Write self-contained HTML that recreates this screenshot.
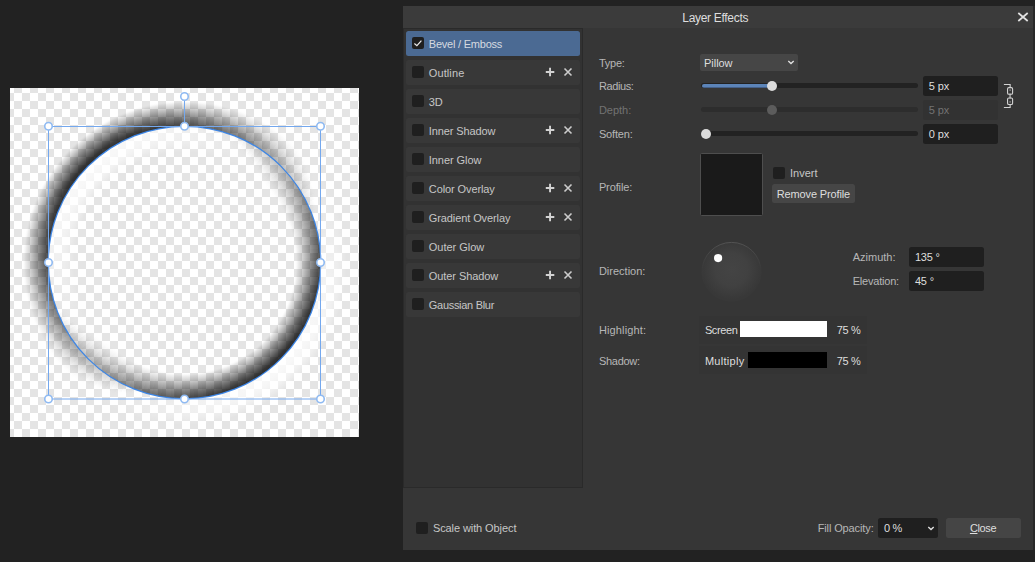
<!DOCTYPE html>
<html lang="en"><head><meta charset="utf-8"><title>Layer Effects</title>
<style>
html,body{margin:0;padding:0;overflow:hidden}
body{width:1035px;height:562px;background:#222222;position:relative;overflow:hidden;font-family:"Liberation Sans",sans-serif}
.b{position:absolute;display:block}
.t{position:absolute;white-space:nowrap;line-height:16px}
u{text-decoration-thickness:1px;text-underline-offset:1px}
</style></head><body>
<svg class="b" style="left:0;top:0" width="403" height="562" viewBox="0 0 403 562">
<defs>
<pattern id="chk" x="6" y="5" width="16" height="16" patternUnits="userSpaceOnUse"><rect width="16" height="16" fill="#ffffff"/><rect x="8" y="0" width="8" height="8" fill="#e4e4e4"/><rect x="0" y="8" width="8" height="8" fill="#e4e4e4"/></pattern>
<clipPath id="cv"><rect x="10" y="88" width="349" height="349"/></clipPath>
<radialGradient id="w0" gradientUnits="userSpaceOnUse" cx="184.5" cy="262.5" r="162.25"><stop offset=".6795" stop-color="#fff" stop-opacity="0"/><stop offset=".6995" stop-opacity=".063"/><stop offset=".7196" stop-opacity=".148"/><stop offset=".7396" stop-opacity=".244"/><stop offset=".7596" stop-opacity=".345"/><stop offset=".7797" stop-opacity=".444"/><stop offset=".7997" stop-opacity=".537"/><stop offset=".8197" stop-opacity=".622"/><stop offset=".8398" stop-opacity=".696"/><stop offset=".8398" stop-color="#fff" stop-opacity=".379"/><stop offset=".8598" stop-color="#fff" stop-opacity=".411"/><stop offset=".8798" stop-color="#fff" stop-opacity=".431"/><stop offset=".8998" stop-color="#fff" stop-opacity=".432"/><stop offset=".9199" stop-color="#fff" stop-opacity=".406"/><stop offset=".9399" stop-color="#fff" stop-opacity=".347"/><stop offset=".9599" stop-color="#fff" stop-opacity=".252"/><stop offset=".9800" stop-color="#fff" stop-opacity=".128"/><stop offset="1.0000" stop-color="#fff" stop-opacity="0"/></radialGradient><radialGradient id="w1" gradientUnits="userSpaceOnUse" cx="184.5" cy="262.5" r="162.25"><stop offset=".6795" stop-color="#fff" stop-opacity="0"/><stop offset=".6995" stop-opacity=".065"/><stop offset=".7196" stop-opacity=".152"/><stop offset=".7396" stop-opacity=".251"/><stop offset=".7596" stop-opacity=".354"/><stop offset=".7797" stop-opacity=".455"/><stop offset=".7997" stop-opacity=".549"/><stop offset=".8197" stop-opacity=".635"/><stop offset=".8398" stop-opacity=".711"/><stop offset=".8398" stop-color="#fff" stop-opacity=".413"/><stop offset=".8598" stop-color="#fff" stop-opacity=".442"/><stop offset=".8798" stop-color="#fff" stop-opacity=".459"/><stop offset=".8998" stop-color="#fff" stop-opacity=".456"/><stop offset=".9199" stop-color="#fff" stop-opacity=".426"/><stop offset=".9399" stop-color="#fff" stop-opacity=".362"/><stop offset=".9599" stop-color="#fff" stop-opacity=".262"/><stop offset=".9800" stop-color="#fff" stop-opacity=".132"/><stop offset="1.0000" stop-color="#fff" stop-opacity="0"/></radialGradient><radialGradient id="w2" gradientUnits="userSpaceOnUse" cx="184.5" cy="262.5" r="162.25"><stop offset=".6795" stop-color="#fff" stop-opacity="0"/><stop offset=".6995" stop-opacity=".067"/><stop offset=".7196" stop-opacity=".156"/><stop offset=".7396" stop-opacity=".257"/><stop offset=".7596" stop-opacity=".362"/><stop offset=".7797" stop-opacity=".465"/><stop offset=".7997" stop-opacity=".561"/><stop offset=".8197" stop-opacity=".648"/><stop offset=".8398" stop-opacity=".724"/><stop offset=".8398" stop-color="#fff" stop-opacity=".444"/><stop offset=".8598" stop-color="#fff" stop-opacity=".471"/><stop offset=".8798" stop-color="#fff" stop-opacity=".485"/><stop offset=".8998" stop-color="#fff" stop-opacity=".479"/><stop offset=".9199" stop-color="#fff" stop-opacity=".445"/><stop offset=".9399" stop-color="#fff" stop-opacity=".377"/><stop offset=".9599" stop-color="#fff" stop-opacity=".271"/><stop offset=".9800" stop-color="#fff" stop-opacity=".136"/><stop offset="1.0000" stop-color="#fff" stop-opacity="0"/></radialGradient><radialGradient id="w3" gradientUnits="userSpaceOnUse" cx="184.5" cy="262.5" r="162.25"><stop offset=".6795" stop-color="#fff" stop-opacity="0"/><stop offset=".6995" stop-opacity=".068"/><stop offset=".7196" stop-opacity=".16"/><stop offset=".7396" stop-opacity=".263"/><stop offset=".7596" stop-opacity=".37"/><stop offset=".7797" stop-opacity=".474"/><stop offset=".7997" stop-opacity=".572"/><stop offset=".8197" stop-opacity=".66"/><stop offset=".8398" stop-opacity=".737"/><stop offset=".8398" stop-color="#fff" stop-opacity=".475"/><stop offset=".8598" stop-color="#fff" stop-opacity=".5"/><stop offset=".8798" stop-color="#fff" stop-opacity=".511"/><stop offset=".8998" stop-color="#fff" stop-opacity=".502"/><stop offset=".9199" stop-color="#fff" stop-opacity=".464"/><stop offset=".9399" stop-color="#fff" stop-opacity=".391"/><stop offset=".9599" stop-color="#fff" stop-opacity=".281"/><stop offset=".9800" stop-color="#fff" stop-opacity=".141"/><stop offset="1.0000" stop-color="#fff" stop-opacity="0"/></radialGradient><radialGradient id="w4" gradientUnits="userSpaceOnUse" cx="184.5" cy="262.5" r="162.25"><stop offset=".6795" stop-color="#fff" stop-opacity="0"/><stop offset=".6995" stop-opacity=".07"/><stop offset=".7196" stop-opacity=".163"/><stop offset=".7396" stop-opacity=".268"/><stop offset=".7596" stop-opacity=".377"/><stop offset=".7797" stop-opacity=".484"/><stop offset=".7997" stop-opacity=".582"/><stop offset=".8197" stop-opacity=".671"/><stop offset=".8398" stop-opacity=".75"/><stop offset=".8398" stop-color="#fff" stop-opacity=".504"/><stop offset=".8598" stop-color="#fff" stop-opacity=".527"/><stop offset=".8798" stop-color="#fff" stop-opacity=".536"/><stop offset=".8998" stop-color="#fff" stop-opacity=".523"/><stop offset=".9199" stop-color="#fff" stop-opacity=".482"/><stop offset=".9399" stop-color="#fff" stop-opacity=".404"/><stop offset=".9599" stop-color="#fff" stop-opacity=".289"/><stop offset=".9800" stop-color="#fff" stop-opacity=".145"/><stop offset="1.0000" stop-color="#fff" stop-opacity="0"/></radialGradient><radialGradient id="w5" gradientUnits="userSpaceOnUse" cx="184.5" cy="262.5" r="162.25"><stop offset=".6795" stop-color="#fff" stop-opacity="0"/><stop offset=".6995" stop-opacity=".072"/><stop offset=".7196" stop-opacity=".167"/><stop offset=".7396" stop-opacity=".274"/><stop offset=".7596" stop-opacity=".385"/><stop offset=".7797" stop-opacity=".492"/><stop offset=".7997" stop-opacity=".592"/><stop offset=".8197" stop-opacity=".683"/><stop offset=".8398" stop-opacity=".762"/><stop offset=".8398" stop-color="#fff" stop-opacity=".532"/><stop offset=".8598" stop-color="#fff" stop-opacity=".553"/><stop offset=".8798" stop-color="#fff" stop-opacity=".559"/><stop offset=".8998" stop-color="#fff" stop-opacity=".544"/><stop offset=".9199" stop-color="#fff" stop-opacity=".498"/><stop offset=".9399" stop-color="#fff" stop-opacity=".417"/><stop offset=".9599" stop-color="#fff" stop-opacity=".298"/><stop offset=".9800" stop-color="#fff" stop-opacity=".148"/><stop offset="1.0000" stop-color="#fff" stop-opacity="0"/></radialGradient><radialGradient id="w6" gradientUnits="userSpaceOnUse" cx="184.5" cy="262.5" r="162.25"><stop offset=".6795" stop-color="#fff" stop-opacity="0"/><stop offset=".6995" stop-opacity=".073"/><stop offset=".7196" stop-opacity=".17"/><stop offset=".7396" stop-opacity=".279"/><stop offset=".7596" stop-opacity=".391"/><stop offset=".7797" stop-opacity=".501"/><stop offset=".7997" stop-opacity=".602"/><stop offset=".8197" stop-opacity=".693"/><stop offset=".8398" stop-opacity=".773"/><stop offset=".8398" stop-color="#fff" stop-opacity=".559"/><stop offset=".8598" stop-color="#fff" stop-opacity=".578"/><stop offset=".8798" stop-color="#fff" stop-opacity=".582"/><stop offset=".8998" stop-color="#fff" stop-opacity=".563"/><stop offset=".9199" stop-color="#fff" stop-opacity=".515"/><stop offset=".9399" stop-color="#fff" stop-opacity=".429"/><stop offset=".9599" stop-color="#fff" stop-opacity=".305"/><stop offset=".9800" stop-color="#fff" stop-opacity=".152"/><stop offset="1.0000" stop-color="#fff" stop-opacity="0"/></radialGradient><radialGradient id="w7" gradientUnits="userSpaceOnUse" cx="184.5" cy="262.5" r="162.25"><stop offset=".6795" stop-color="#fff" stop-opacity="0"/><stop offset=".6995" stop-opacity=".075"/><stop offset=".7196" stop-opacity=".174"/><stop offset=".7396" stop-opacity=".284"/><stop offset=".7596" stop-opacity=".398"/><stop offset=".7797" stop-opacity=".509"/><stop offset=".7997" stop-opacity=".611"/><stop offset=".8197" stop-opacity=".703"/><stop offset=".8398" stop-opacity=".784"/><stop offset=".8398" stop-color="#fff" stop-opacity=".584"/><stop offset=".8598" stop-color="#fff" stop-opacity=".601"/><stop offset=".8798" stop-color="#fff" stop-opacity=".603"/><stop offset=".8998" stop-color="#fff" stop-opacity=".582"/><stop offset=".9199" stop-color="#fff" stop-opacity=".53"/><stop offset=".9399" stop-color="#fff" stop-opacity=".44"/><stop offset=".9599" stop-color="#fff" stop-opacity=".313"/><stop offset=".9800" stop-color="#fff" stop-opacity=".156"/><stop offset="1.0000" stop-color="#fff" stop-opacity="0"/></radialGradient><radialGradient id="w8" gradientUnits="userSpaceOnUse" cx="184.5" cy="262.5" r="162.25"><stop offset=".6795" stop-color="#fff" stop-opacity="0"/><stop offset=".6995" stop-opacity=".076"/><stop offset=".7196" stop-opacity=".177"/><stop offset=".7396" stop-opacity=".289"/><stop offset=".7596" stop-opacity=".404"/><stop offset=".7797" stop-opacity=".516"/><stop offset=".7997" stop-opacity=".619"/><stop offset=".8197" stop-opacity=".712"/><stop offset=".8398" stop-opacity=".794"/><stop offset=".8398" stop-color="#fff" stop-opacity=".608"/><stop offset=".8598" stop-color="#fff" stop-opacity=".623"/><stop offset=".8798" stop-color="#fff" stop-opacity=".623"/><stop offset=".8998" stop-color="#fff" stop-opacity=".599"/><stop offset=".9199" stop-color="#fff" stop-opacity=".544"/><stop offset=".9399" stop-color="#fff" stop-opacity=".451"/><stop offset=".9599" stop-color="#fff" stop-opacity=".32"/><stop offset=".9800" stop-color="#fff" stop-opacity=".159"/><stop offset="1.0000" stop-color="#fff" stop-opacity="0"/></radialGradient><radialGradient id="w9" gradientUnits="userSpaceOnUse" cx="184.5" cy="262.5" r="162.25"><stop offset=".6795" stop-color="#fff" stop-opacity="0"/><stop offset=".6995" stop-opacity=".077"/><stop offset=".7196" stop-opacity=".179"/><stop offset=".7396" stop-opacity=".293"/><stop offset=".7596" stop-opacity=".41"/><stop offset=".7797" stop-opacity=".523"/><stop offset=".7997" stop-opacity=".627"/><stop offset=".8197" stop-opacity=".721"/><stop offset=".8398" stop-opacity=".8"/><stop offset=".8398" stop-color="#fff" stop-opacity=".63"/><stop offset=".8598" stop-color="#fff" stop-opacity=".644"/><stop offset=".8798" stop-color="#fff" stop-opacity=".641"/><stop offset=".8998" stop-color="#fff" stop-opacity=".615"/><stop offset=".9199" stop-color="#fff" stop-opacity=".557"/><stop offset=".9399" stop-color="#fff" stop-opacity=".461"/><stop offset=".9599" stop-color="#fff" stop-opacity=".327"/><stop offset=".9800" stop-color="#fff" stop-opacity=".162"/><stop offset="1.0000" stop-color="#fff" stop-opacity="0"/></radialGradient><radialGradient id="w10" gradientUnits="userSpaceOnUse" cx="184.5" cy="262.5" r="162.25"><stop offset=".6795" stop-color="#fff" stop-opacity="0"/><stop offset=".6995" stop-opacity=".079"/><stop offset=".7196" stop-opacity=".182"/><stop offset=".7396" stop-opacity=".297"/><stop offset=".7596" stop-opacity=".415"/><stop offset=".7797" stop-opacity=".529"/><stop offset=".7997" stop-opacity=".635"/><stop offset=".8197" stop-opacity=".729"/><stop offset=".8398" stop-opacity=".8"/><stop offset=".8398" stop-color="#fff" stop-opacity=".65"/><stop offset=".8598" stop-color="#fff" stop-opacity=".663"/><stop offset=".8798" stop-color="#fff" stop-opacity=".659"/><stop offset=".8998" stop-color="#fff" stop-opacity=".63"/><stop offset=".9199" stop-color="#fff" stop-opacity=".57"/><stop offset=".9399" stop-color="#fff" stop-opacity=".471"/><stop offset=".9599" stop-color="#fff" stop-opacity=".333"/><stop offset=".9800" stop-color="#fff" stop-opacity=".165"/><stop offset="1.0000" stop-color="#fff" stop-opacity="0"/></radialGradient><radialGradient id="w11" gradientUnits="userSpaceOnUse" cx="184.5" cy="262.5" r="162.25"><stop offset=".6795" stop-color="#fff" stop-opacity="0"/><stop offset=".6995" stop-opacity=".08"/><stop offset=".7196" stop-opacity=".184"/><stop offset=".7396" stop-opacity=".301"/><stop offset=".7596" stop-opacity=".42"/><stop offset=".7797" stop-opacity=".535"/><stop offset=".7997" stop-opacity=".642"/><stop offset=".8197" stop-opacity=".737"/><stop offset=".8398" stop-opacity=".8"/><stop offset=".8398" stop-color="#fff" stop-opacity=".669"/><stop offset=".8598" stop-color="#fff" stop-opacity=".68"/><stop offset=".8798" stop-color="#fff" stop-opacity=".675"/><stop offset=".8998" stop-color="#fff" stop-opacity=".644"/><stop offset=".9199" stop-color="#fff" stop-opacity=".581"/><stop offset=".9399" stop-color="#fff" stop-opacity=".479"/><stop offset=".9599" stop-color="#fff" stop-opacity=".338"/><stop offset=".9800" stop-color="#fff" stop-opacity=".167"/><stop offset="1.0000" stop-color="#fff" stop-opacity="0"/></radialGradient><radialGradient id="w12" gradientUnits="userSpaceOnUse" cx="184.5" cy="262.5" r="162.25"><stop offset=".6795" stop-color="#fff" stop-opacity="0"/><stop offset=".6995" stop-opacity=".081"/><stop offset=".7196" stop-opacity=".187"/><stop offset=".7396" stop-opacity=".304"/><stop offset=".7596" stop-opacity=".425"/><stop offset=".7797" stop-opacity=".541"/><stop offset=".7997" stop-opacity=".648"/><stop offset=".8197" stop-opacity=".744"/><stop offset=".8398" stop-opacity=".8"/><stop offset=".8398" stop-color="#fff" stop-opacity=".687"/><stop offset=".8598" stop-color="#fff" stop-opacity=".697"/><stop offset=".8798" stop-color="#fff" stop-opacity=".689"/><stop offset=".8998" stop-color="#fff" stop-opacity=".657"/><stop offset=".9199" stop-color="#fff" stop-opacity=".592"/><stop offset=".9399" stop-color="#fff" stop-opacity=".487"/><stop offset=".9599" stop-color="#fff" stop-opacity=".343"/><stop offset=".9800" stop-color="#fff" stop-opacity=".17"/><stop offset="1.0000" stop-color="#fff" stop-opacity="0"/></radialGradient><radialGradient id="w13" gradientUnits="userSpaceOnUse" cx="184.5" cy="262.5" r="162.25"><stop offset=".6795" stop-color="#fff" stop-opacity="0"/><stop offset=".6995" stop-opacity=".082"/><stop offset=".7196" stop-opacity=".189"/><stop offset=".7396" stop-opacity=".307"/><stop offset=".7596" stop-opacity=".429"/><stop offset=".7797" stop-opacity=".546"/><stop offset=".7997" stop-opacity=".654"/><stop offset=".8197" stop-opacity=".75"/><stop offset=".8398" stop-opacity=".8"/><stop offset=".8398" stop-color="#fff" stop-opacity=".703"/><stop offset=".8598" stop-color="#fff" stop-opacity=".711"/><stop offset=".8798" stop-color="#fff" stop-opacity=".703"/><stop offset=".8998" stop-color="#fff" stop-opacity=".669"/><stop offset=".9199" stop-color="#fff" stop-opacity=".601"/><stop offset=".9399" stop-color="#fff" stop-opacity=".495"/><stop offset=".9599" stop-color="#fff" stop-opacity=".348"/><stop offset=".9800" stop-color="#fff" stop-opacity=".172"/><stop offset="1.0000" stop-color="#fff" stop-opacity="0"/></radialGradient><radialGradient id="w14" gradientUnits="userSpaceOnUse" cx="184.5" cy="262.5" r="162.25"><stop offset=".6795" stop-color="#fff" stop-opacity="0"/><stop offset=".6995" stop-opacity=".083"/><stop offset=".7196" stop-opacity=".19"/><stop offset=".7396" stop-opacity=".31"/><stop offset=".7596" stop-opacity=".432"/><stop offset=".7797" stop-opacity=".55"/><stop offset=".7997" stop-opacity=".659"/><stop offset=".8197" stop-opacity=".756"/><stop offset=".8398" stop-opacity=".8"/><stop offset=".8398" stop-color="#fff" stop-opacity=".717"/><stop offset=".8598" stop-color="#fff" stop-opacity=".725"/><stop offset=".8798" stop-color="#fff" stop-opacity=".715"/><stop offset=".8998" stop-color="#fff" stop-opacity=".679"/><stop offset=".9199" stop-color="#fff" stop-opacity=".61"/><stop offset=".9399" stop-color="#fff" stop-opacity=".501"/><stop offset=".9599" stop-color="#fff" stop-opacity=".352"/><stop offset=".9800" stop-color="#fff" stop-opacity=".174"/><stop offset="1.0000" stop-color="#fff" stop-opacity="0"/></radialGradient><radialGradient id="w15" gradientUnits="userSpaceOnUse" cx="184.5" cy="262.5" r="162.25"><stop offset=".6795" stop-color="#fff" stop-opacity="0"/><stop offset=".6995" stop-opacity=".083"/><stop offset=".7196" stop-opacity=".192"/><stop offset=".7396" stop-opacity=".312"/><stop offset=".7596" stop-opacity=".436"/><stop offset=".7797" stop-opacity=".554"/><stop offset=".7997" stop-opacity=".663"/><stop offset=".8197" stop-opacity=".761"/><stop offset=".8398" stop-opacity=".8"/><stop offset=".8398" stop-color="#fff" stop-opacity=".73"/><stop offset=".8598" stop-color="#fff" stop-opacity=".736"/><stop offset=".8798" stop-color="#fff" stop-opacity=".725"/><stop offset=".8998" stop-color="#fff" stop-opacity=".688"/><stop offset=".9199" stop-color="#fff" stop-opacity=".618"/><stop offset=".9399" stop-color="#fff" stop-opacity=".507"/><stop offset=".9599" stop-color="#fff" stop-opacity=".356"/><stop offset=".9800" stop-color="#fff" stop-opacity=".175"/><stop offset="1.0000" stop-color="#fff" stop-opacity="0"/></radialGradient><radialGradient id="w16" gradientUnits="userSpaceOnUse" cx="184.5" cy="262.5" r="162.25"><stop offset=".6795" stop-color="#fff" stop-opacity="0"/><stop offset=".6995" stop-opacity=".084"/><stop offset=".7196" stop-opacity=".193"/><stop offset=".7396" stop-opacity=".315"/><stop offset=".7596" stop-opacity=".438"/><stop offset=".7797" stop-opacity=".558"/><stop offset=".7997" stop-opacity=".667"/><stop offset=".8197" stop-opacity=".765"/><stop offset=".8398" stop-opacity=".8"/><stop offset=".8398" stop-color="#fff" stop-opacity=".741"/><stop offset=".8598" stop-color="#fff" stop-opacity=".747"/><stop offset=".8798" stop-color="#fff" stop-opacity=".734"/><stop offset=".8998" stop-color="#fff" stop-opacity=".696"/><stop offset=".9199" stop-color="#fff" stop-opacity=".624"/><stop offset=".9399" stop-color="#fff" stop-opacity=".512"/><stop offset=".9599" stop-color="#fff" stop-opacity=".359"/><stop offset=".9800" stop-color="#fff" stop-opacity=".177"/><stop offset="1.0000" stop-color="#fff" stop-opacity="0"/></radialGradient><radialGradient id="w17" gradientUnits="userSpaceOnUse" cx="184.5" cy="262.5" r="162.25"><stop offset=".6795" stop-color="#fff" stop-opacity="0"/><stop offset=".6995" stop-opacity=".084"/><stop offset=".7196" stop-opacity=".195"/><stop offset=".7396" stop-opacity=".316"/><stop offset=".7596" stop-opacity=".441"/><stop offset=".7797" stop-opacity=".56"/><stop offset=".7997" stop-opacity=".671"/><stop offset=".8197" stop-opacity=".769"/><stop offset=".8398" stop-opacity=".8"/><stop offset=".8398" stop-color="#fff" stop-opacity=".75"/><stop offset=".8598" stop-color="#fff" stop-opacity=".755"/><stop offset=".8798" stop-color="#fff" stop-opacity=".742"/><stop offset=".8998" stop-color="#fff" stop-opacity=".703"/><stop offset=".9199" stop-color="#fff" stop-opacity=".63"/><stop offset=".9399" stop-color="#fff" stop-opacity=".516"/><stop offset=".9599" stop-color="#fff" stop-opacity=".362"/><stop offset=".9800" stop-color="#fff" stop-opacity=".178"/><stop offset="1.0000" stop-color="#fff" stop-opacity="0"/></radialGradient><radialGradient id="w18" gradientUnits="userSpaceOnUse" cx="184.5" cy="262.5" r="162.25"><stop offset=".6795" stop-color="#fff" stop-opacity="0"/><stop offset=".6995" stop-opacity=".085"/><stop offset=".7196" stop-opacity=".196"/><stop offset=".7396" stop-opacity=".318"/><stop offset=".7596" stop-opacity=".443"/><stop offset=".7797" stop-opacity=".563"/><stop offset=".7997" stop-opacity=".673"/><stop offset=".8197" stop-opacity=".772"/><stop offset=".8398" stop-opacity=".8"/><stop offset=".8398" stop-color="#fff" stop-opacity=".758"/><stop offset=".8598" stop-color="#fff" stop-opacity=".762"/><stop offset=".8798" stop-color="#fff" stop-opacity=".749"/><stop offset=".8998" stop-color="#fff" stop-opacity=".709"/><stop offset=".9199" stop-color="#fff" stop-opacity=".634"/><stop offset=".9399" stop-color="#fff" stop-opacity=".52"/><stop offset=".9599" stop-color="#fff" stop-opacity=".364"/><stop offset=".9800" stop-color="#fff" stop-opacity=".179"/><stop offset="1.0000" stop-color="#fff" stop-opacity="0"/></radialGradient><radialGradient id="w19" gradientUnits="userSpaceOnUse" cx="184.5" cy="262.5" r="162.25"><stop offset=".6795" stop-color="#fff" stop-opacity="0"/><stop offset=".6995" stop-opacity=".085"/><stop offset=".7196" stop-opacity=".196"/><stop offset=".7396" stop-opacity=".319"/><stop offset=".7596" stop-opacity=".444"/><stop offset=".7797" stop-opacity=".565"/><stop offset=".7997" stop-opacity=".675"/><stop offset=".8197" stop-opacity=".774"/><stop offset=".8398" stop-opacity=".8"/><stop offset=".8398" stop-color="#fff" stop-opacity=".764"/><stop offset=".8598" stop-color="#fff" stop-opacity=".768"/><stop offset=".8798" stop-color="#fff" stop-opacity=".754"/><stop offset=".8998" stop-color="#fff" stop-opacity=".713"/><stop offset=".9199" stop-color="#fff" stop-opacity=".638"/><stop offset=".9399" stop-color="#fff" stop-opacity=".522"/><stop offset=".9599" stop-color="#fff" stop-opacity=".366"/><stop offset=".9800" stop-color="#fff" stop-opacity=".18"/><stop offset="1.0000" stop-color="#fff" stop-opacity="0"/></radialGradient><radialGradient id="w20" gradientUnits="userSpaceOnUse" cx="184.5" cy="262.5" r="162.25"><stop offset=".6795" stop-color="#fff" stop-opacity="0"/><stop offset=".6995" stop-opacity=".086"/><stop offset=".7196" stop-opacity=".197"/><stop offset=".7396" stop-opacity=".32"/><stop offset=".7596" stop-opacity=".445"/><stop offset=".7797" stop-opacity=".566"/><stop offset=".7997" stop-opacity=".677"/><stop offset=".8197" stop-opacity=".776"/><stop offset=".8398" stop-opacity=".8"/><stop offset=".8398" stop-color="#fff" stop-opacity=".768"/><stop offset=".8598" stop-color="#fff" stop-opacity=".772"/><stop offset=".8798" stop-color="#fff" stop-opacity=".757"/><stop offset=".8998" stop-color="#fff" stop-opacity=".716"/><stop offset=".9199" stop-color="#fff" stop-opacity=".641"/><stop offset=".9399" stop-color="#fff" stop-opacity=".524"/><stop offset=".9599" stop-color="#fff" stop-opacity=".368"/><stop offset=".9800" stop-color="#fff" stop-opacity=".181"/><stop offset="1.0000" stop-color="#fff" stop-opacity="0"/></radialGradient><radialGradient id="w21" gradientUnits="userSpaceOnUse" cx="184.5" cy="262.5" r="162.25"><stop offset=".6795" stop-color="#fff" stop-opacity="0"/><stop offset=".6995" stop-opacity=".086"/><stop offset=".7196" stop-opacity=".197"/><stop offset=".7396" stop-opacity=".32"/><stop offset=".7596" stop-opacity=".446"/><stop offset=".7797" stop-opacity=".567"/><stop offset=".7997" stop-opacity=".678"/><stop offset=".8197" stop-opacity=".777"/><stop offset=".8398" stop-opacity=".8"/><stop offset=".8398" stop-color="#fff" stop-opacity=".77"/><stop offset=".8598" stop-color="#fff" stop-opacity=".774"/><stop offset=".8798" stop-color="#fff" stop-opacity=".759"/><stop offset=".8998" stop-color="#fff" stop-opacity=".718"/><stop offset=".9199" stop-color="#fff" stop-opacity=".642"/><stop offset=".9399" stop-color="#fff" stop-opacity=".526"/><stop offset=".9599" stop-color="#fff" stop-opacity=".368"/><stop offset=".9800" stop-color="#fff" stop-opacity=".181"/><stop offset="1.0000" stop-color="#fff" stop-opacity="0"/></radialGradient><radialGradient id="w22" gradientUnits="userSpaceOnUse" cx="184.5" cy="262.5" r="162.25"><stop offset=".6795" stop-color="#fff" stop-opacity="0"/><stop offset=".6995" stop-opacity=".086"/><stop offset=".7196" stop-opacity=".197"/><stop offset=".7396" stop-opacity=".321"/><stop offset=".7596" stop-opacity=".446"/><stop offset=".7797" stop-opacity=".567"/><stop offset=".7997" stop-opacity=".678"/><stop offset=".8197" stop-opacity=".777"/><stop offset=".8398" stop-opacity=".8"/><stop offset=".8398" stop-color="#fff" stop-opacity=".771"/><stop offset=".8598" stop-color="#fff" stop-opacity=".775"/><stop offset=".8798" stop-color="#fff" stop-opacity=".76"/><stop offset=".8998" stop-color="#fff" stop-opacity=".719"/><stop offset=".9199" stop-color="#fff" stop-opacity=".643"/><stop offset=".9399" stop-color="#fff" stop-opacity=".526"/><stop offset=".9599" stop-color="#fff" stop-opacity=".369"/><stop offset=".9800" stop-color="#fff" stop-opacity=".181"/><stop offset="1.0000" stop-color="#fff" stop-opacity="0"/></radialGradient><radialGradient id="w23" gradientUnits="userSpaceOnUse" cx="184.5" cy="262.5" r="162.25"><stop offset=".6795" stop-color="#fff" stop-opacity="0"/><stop offset=".6995" stop-opacity=".086"/><stop offset=".7196" stop-opacity=".197"/><stop offset=".7396" stop-opacity=".32"/><stop offset=".7596" stop-opacity=".446"/><stop offset=".7797" stop-opacity=".567"/><stop offset=".7997" stop-opacity=".678"/><stop offset=".8197" stop-opacity=".777"/><stop offset=".8398" stop-opacity=".8"/><stop offset=".8398" stop-color="#fff" stop-opacity=".77"/><stop offset=".8598" stop-color="#fff" stop-opacity=".774"/><stop offset=".8798" stop-color="#fff" stop-opacity=".759"/><stop offset=".8998" stop-color="#fff" stop-opacity=".718"/><stop offset=".9199" stop-color="#fff" stop-opacity=".642"/><stop offset=".9399" stop-color="#fff" stop-opacity=".526"/><stop offset=".9599" stop-color="#fff" stop-opacity=".368"/><stop offset=".9800" stop-color="#fff" stop-opacity=".181"/><stop offset="1.0000" stop-color="#fff" stop-opacity="0"/></radialGradient><radialGradient id="w24" gradientUnits="userSpaceOnUse" cx="184.5" cy="262.5" r="162.25"><stop offset=".6795" stop-color="#fff" stop-opacity="0"/><stop offset=".6995" stop-opacity=".086"/><stop offset=".7196" stop-opacity=".197"/><stop offset=".7396" stop-opacity=".32"/><stop offset=".7596" stop-opacity=".445"/><stop offset=".7797" stop-opacity=".566"/><stop offset=".7997" stop-opacity=".677"/><stop offset=".8197" stop-opacity=".776"/><stop offset=".8398" stop-opacity=".8"/><stop offset=".8398" stop-color="#fff" stop-opacity=".768"/><stop offset=".8598" stop-color="#fff" stop-opacity=".772"/><stop offset=".8798" stop-color="#fff" stop-opacity=".757"/><stop offset=".8998" stop-color="#fff" stop-opacity=".716"/><stop offset=".9199" stop-color="#fff" stop-opacity=".641"/><stop offset=".9399" stop-color="#fff" stop-opacity=".524"/><stop offset=".9599" stop-color="#fff" stop-opacity=".368"/><stop offset=".9800" stop-color="#fff" stop-opacity=".181"/><stop offset="1.0000" stop-color="#fff" stop-opacity="0"/></radialGradient><radialGradient id="w25" gradientUnits="userSpaceOnUse" cx="184.5" cy="262.5" r="162.25"><stop offset=".6795" stop-color="#fff" stop-opacity="0"/><stop offset=".6995" stop-opacity=".085"/><stop offset=".7196" stop-opacity=".196"/><stop offset=".7396" stop-opacity=".319"/><stop offset=".7596" stop-opacity=".444"/><stop offset=".7797" stop-opacity=".565"/><stop offset=".7997" stop-opacity=".675"/><stop offset=".8197" stop-opacity=".774"/><stop offset=".8398" stop-opacity=".8"/><stop offset=".8398" stop-color="#fff" stop-opacity=".764"/><stop offset=".8598" stop-color="#fff" stop-opacity=".768"/><stop offset=".8798" stop-color="#fff" stop-opacity=".754"/><stop offset=".8998" stop-color="#fff" stop-opacity=".713"/><stop offset=".9199" stop-color="#fff" stop-opacity=".638"/><stop offset=".9399" stop-color="#fff" stop-opacity=".522"/><stop offset=".9599" stop-color="#fff" stop-opacity=".366"/><stop offset=".9800" stop-color="#fff" stop-opacity=".18"/><stop offset="1.0000" stop-color="#fff" stop-opacity="0"/></radialGradient><radialGradient id="w26" gradientUnits="userSpaceOnUse" cx="184.5" cy="262.5" r="162.25"><stop offset=".6795" stop-color="#fff" stop-opacity="0"/><stop offset=".6995" stop-opacity=".085"/><stop offset=".7196" stop-opacity=".196"/><stop offset=".7396" stop-opacity=".318"/><stop offset=".7596" stop-opacity=".443"/><stop offset=".7797" stop-opacity=".563"/><stop offset=".7997" stop-opacity=".673"/><stop offset=".8197" stop-opacity=".772"/><stop offset=".8398" stop-opacity=".8"/><stop offset=".8398" stop-color="#fff" stop-opacity=".758"/><stop offset=".8598" stop-color="#fff" stop-opacity=".762"/><stop offset=".8798" stop-color="#fff" stop-opacity=".749"/><stop offset=".8998" stop-color="#fff" stop-opacity=".709"/><stop offset=".9199" stop-color="#fff" stop-opacity=".634"/><stop offset=".9399" stop-color="#fff" stop-opacity=".52"/><stop offset=".9599" stop-color="#fff" stop-opacity=".364"/><stop offset=".9800" stop-color="#fff" stop-opacity=".179"/><stop offset="1.0000" stop-color="#fff" stop-opacity="0"/></radialGradient><radialGradient id="w27" gradientUnits="userSpaceOnUse" cx="184.5" cy="262.5" r="162.25"><stop offset=".6795" stop-color="#fff" stop-opacity="0"/><stop offset=".6995" stop-opacity=".084"/><stop offset=".7196" stop-opacity=".195"/><stop offset=".7396" stop-opacity=".316"/><stop offset=".7596" stop-opacity=".441"/><stop offset=".7797" stop-opacity=".56"/><stop offset=".7997" stop-opacity=".671"/><stop offset=".8197" stop-opacity=".769"/><stop offset=".8398" stop-opacity=".8"/><stop offset=".8398" stop-color="#fff" stop-opacity=".75"/><stop offset=".8598" stop-color="#fff" stop-opacity=".755"/><stop offset=".8798" stop-color="#fff" stop-opacity=".742"/><stop offset=".8998" stop-color="#fff" stop-opacity=".703"/><stop offset=".9199" stop-color="#fff" stop-opacity=".63"/><stop offset=".9399" stop-color="#fff" stop-opacity=".516"/><stop offset=".9599" stop-color="#fff" stop-opacity=".362"/><stop offset=".9800" stop-color="#fff" stop-opacity=".178"/><stop offset="1.0000" stop-color="#fff" stop-opacity="0"/></radialGradient><radialGradient id="w28" gradientUnits="userSpaceOnUse" cx="184.5" cy="262.5" r="162.25"><stop offset=".6795" stop-color="#fff" stop-opacity="0"/><stop offset=".6995" stop-opacity=".084"/><stop offset=".7196" stop-opacity=".193"/><stop offset=".7396" stop-opacity=".315"/><stop offset=".7596" stop-opacity=".438"/><stop offset=".7797" stop-opacity=".558"/><stop offset=".7997" stop-opacity=".667"/><stop offset=".8197" stop-opacity=".765"/><stop offset=".8398" stop-opacity=".8"/><stop offset=".8398" stop-color="#fff" stop-opacity=".741"/><stop offset=".8598" stop-color="#fff" stop-opacity=".747"/><stop offset=".8798" stop-color="#fff" stop-opacity=".734"/><stop offset=".8998" stop-color="#fff" stop-opacity=".696"/><stop offset=".9199" stop-color="#fff" stop-opacity=".624"/><stop offset=".9399" stop-color="#fff" stop-opacity=".512"/><stop offset=".9599" stop-color="#fff" stop-opacity=".359"/><stop offset=".9800" stop-color="#fff" stop-opacity=".177"/><stop offset="1.0000" stop-color="#fff" stop-opacity="0"/></radialGradient><radialGradient id="w29" gradientUnits="userSpaceOnUse" cx="184.5" cy="262.5" r="162.25"><stop offset=".6795" stop-color="#fff" stop-opacity="0"/><stop offset=".6995" stop-opacity=".083"/><stop offset=".7196" stop-opacity=".192"/><stop offset=".7396" stop-opacity=".312"/><stop offset=".7596" stop-opacity=".436"/><stop offset=".7797" stop-opacity=".554"/><stop offset=".7997" stop-opacity=".663"/><stop offset=".8197" stop-opacity=".761"/><stop offset=".8398" stop-opacity=".8"/><stop offset=".8398" stop-color="#fff" stop-opacity=".73"/><stop offset=".8598" stop-color="#fff" stop-opacity=".736"/><stop offset=".8798" stop-color="#fff" stop-opacity=".725"/><stop offset=".8998" stop-color="#fff" stop-opacity=".688"/><stop offset=".9199" stop-color="#fff" stop-opacity=".618"/><stop offset=".9399" stop-color="#fff" stop-opacity=".507"/><stop offset=".9599" stop-color="#fff" stop-opacity=".356"/><stop offset=".9800" stop-color="#fff" stop-opacity=".175"/><stop offset="1.0000" stop-color="#fff" stop-opacity="0"/></radialGradient><radialGradient id="w30" gradientUnits="userSpaceOnUse" cx="184.5" cy="262.5" r="162.25"><stop offset=".6795" stop-color="#fff" stop-opacity="0"/><stop offset=".6995" stop-opacity=".083"/><stop offset=".7196" stop-opacity=".19"/><stop offset=".7396" stop-opacity=".31"/><stop offset=".7596" stop-opacity=".432"/><stop offset=".7797" stop-opacity=".55"/><stop offset=".7997" stop-opacity=".659"/><stop offset=".8197" stop-opacity=".756"/><stop offset=".8398" stop-opacity=".8"/><stop offset=".8398" stop-color="#fff" stop-opacity=".717"/><stop offset=".8598" stop-color="#fff" stop-opacity=".725"/><stop offset=".8798" stop-color="#fff" stop-opacity=".715"/><stop offset=".8998" stop-color="#fff" stop-opacity=".679"/><stop offset=".9199" stop-color="#fff" stop-opacity=".61"/><stop offset=".9399" stop-color="#fff" stop-opacity=".501"/><stop offset=".9599" stop-color="#fff" stop-opacity=".352"/><stop offset=".9800" stop-color="#fff" stop-opacity=".174"/><stop offset="1.0000" stop-color="#fff" stop-opacity="0"/></radialGradient><radialGradient id="w31" gradientUnits="userSpaceOnUse" cx="184.5" cy="262.5" r="162.25"><stop offset=".6795" stop-color="#fff" stop-opacity="0"/><stop offset=".6995" stop-opacity=".082"/><stop offset=".7196" stop-opacity=".189"/><stop offset=".7396" stop-opacity=".307"/><stop offset=".7596" stop-opacity=".429"/><stop offset=".7797" stop-opacity=".546"/><stop offset=".7997" stop-opacity=".654"/><stop offset=".8197" stop-opacity=".75"/><stop offset=".8398" stop-opacity=".8"/><stop offset=".8398" stop-color="#fff" stop-opacity=".703"/><stop offset=".8598" stop-color="#fff" stop-opacity=".711"/><stop offset=".8798" stop-color="#fff" stop-opacity=".703"/><stop offset=".8998" stop-color="#fff" stop-opacity=".669"/><stop offset=".9199" stop-color="#fff" stop-opacity=".601"/><stop offset=".9399" stop-color="#fff" stop-opacity=".495"/><stop offset=".9599" stop-color="#fff" stop-opacity=".348"/><stop offset=".9800" stop-color="#fff" stop-opacity=".172"/><stop offset="1.0000" stop-color="#fff" stop-opacity="0"/></radialGradient><radialGradient id="w32" gradientUnits="userSpaceOnUse" cx="184.5" cy="262.5" r="162.25"><stop offset=".6795" stop-color="#fff" stop-opacity="0"/><stop offset=".6995" stop-opacity=".081"/><stop offset=".7196" stop-opacity=".187"/><stop offset=".7396" stop-opacity=".304"/><stop offset=".7596" stop-opacity=".425"/><stop offset=".7797" stop-opacity=".541"/><stop offset=".7997" stop-opacity=".648"/><stop offset=".8197" stop-opacity=".744"/><stop offset=".8398" stop-opacity=".8"/><stop offset=".8398" stop-color="#fff" stop-opacity=".687"/><stop offset=".8598" stop-color="#fff" stop-opacity=".697"/><stop offset=".8798" stop-color="#fff" stop-opacity=".689"/><stop offset=".8998" stop-color="#fff" stop-opacity=".657"/><stop offset=".9199" stop-color="#fff" stop-opacity=".592"/><stop offset=".9399" stop-color="#fff" stop-opacity=".487"/><stop offset=".9599" stop-color="#fff" stop-opacity=".343"/><stop offset=".9800" stop-color="#fff" stop-opacity=".17"/><stop offset="1.0000" stop-color="#fff" stop-opacity="0"/></radialGradient><radialGradient id="w33" gradientUnits="userSpaceOnUse" cx="184.5" cy="262.5" r="162.25"><stop offset=".6795" stop-color="#fff" stop-opacity="0"/><stop offset=".6995" stop-opacity=".08"/><stop offset=".7196" stop-opacity=".184"/><stop offset=".7396" stop-opacity=".301"/><stop offset=".7596" stop-opacity=".42"/><stop offset=".7797" stop-opacity=".535"/><stop offset=".7997" stop-opacity=".642"/><stop offset=".8197" stop-opacity=".737"/><stop offset=".8398" stop-opacity=".8"/><stop offset=".8398" stop-color="#fff" stop-opacity=".669"/><stop offset=".8598" stop-color="#fff" stop-opacity=".68"/><stop offset=".8798" stop-color="#fff" stop-opacity=".675"/><stop offset=".8998" stop-color="#fff" stop-opacity=".644"/><stop offset=".9199" stop-color="#fff" stop-opacity=".581"/><stop offset=".9399" stop-color="#fff" stop-opacity=".479"/><stop offset=".9599" stop-color="#fff" stop-opacity=".338"/><stop offset=".9800" stop-color="#fff" stop-opacity=".167"/><stop offset="1.0000" stop-color="#fff" stop-opacity="0"/></radialGradient><radialGradient id="w34" gradientUnits="userSpaceOnUse" cx="184.5" cy="262.5" r="162.25"><stop offset=".6795" stop-color="#fff" stop-opacity="0"/><stop offset=".6995" stop-opacity=".079"/><stop offset=".7196" stop-opacity=".182"/><stop offset=".7396" stop-opacity=".297"/><stop offset=".7596" stop-opacity=".415"/><stop offset=".7797" stop-opacity=".529"/><stop offset=".7997" stop-opacity=".635"/><stop offset=".8197" stop-opacity=".729"/><stop offset=".8398" stop-opacity=".8"/><stop offset=".8398" stop-color="#fff" stop-opacity=".65"/><stop offset=".8598" stop-color="#fff" stop-opacity=".663"/><stop offset=".8798" stop-color="#fff" stop-opacity=".659"/><stop offset=".8998" stop-color="#fff" stop-opacity=".63"/><stop offset=".9199" stop-color="#fff" stop-opacity=".57"/><stop offset=".9399" stop-color="#fff" stop-opacity=".471"/><stop offset=".9599" stop-color="#fff" stop-opacity=".333"/><stop offset=".9800" stop-color="#fff" stop-opacity=".165"/><stop offset="1.0000" stop-color="#fff" stop-opacity="0"/></radialGradient><radialGradient id="w35" gradientUnits="userSpaceOnUse" cx="184.5" cy="262.5" r="162.25"><stop offset=".6795" stop-color="#fff" stop-opacity="0"/><stop offset=".6995" stop-opacity=".077"/><stop offset=".7196" stop-opacity=".179"/><stop offset=".7396" stop-opacity=".293"/><stop offset=".7596" stop-opacity=".41"/><stop offset=".7797" stop-opacity=".523"/><stop offset=".7997" stop-opacity=".627"/><stop offset=".8197" stop-opacity=".721"/><stop offset=".8398" stop-opacity=".8"/><stop offset=".8398" stop-color="#fff" stop-opacity=".63"/><stop offset=".8598" stop-color="#fff" stop-opacity=".644"/><stop offset=".8798" stop-color="#fff" stop-opacity=".641"/><stop offset=".8998" stop-color="#fff" stop-opacity=".615"/><stop offset=".9199" stop-color="#fff" stop-opacity=".557"/><stop offset=".9399" stop-color="#fff" stop-opacity=".461"/><stop offset=".9599" stop-color="#fff" stop-opacity=".327"/><stop offset=".9800" stop-color="#fff" stop-opacity=".162"/><stop offset="1.0000" stop-color="#fff" stop-opacity="0"/></radialGradient><radialGradient id="w36" gradientUnits="userSpaceOnUse" cx="184.5" cy="262.5" r="162.25"><stop offset=".6795" stop-color="#fff" stop-opacity="0"/><stop offset=".6995" stop-opacity=".076"/><stop offset=".7196" stop-opacity=".177"/><stop offset=".7396" stop-opacity=".289"/><stop offset=".7596" stop-opacity=".404"/><stop offset=".7797" stop-opacity=".516"/><stop offset=".7997" stop-opacity=".619"/><stop offset=".8197" stop-opacity=".712"/><stop offset=".8398" stop-opacity=".794"/><stop offset=".8398" stop-color="#fff" stop-opacity=".608"/><stop offset=".8598" stop-color="#fff" stop-opacity=".623"/><stop offset=".8798" stop-color="#fff" stop-opacity=".623"/><stop offset=".8998" stop-color="#fff" stop-opacity=".599"/><stop offset=".9199" stop-color="#fff" stop-opacity=".544"/><stop offset=".9399" stop-color="#fff" stop-opacity=".451"/><stop offset=".9599" stop-color="#fff" stop-opacity=".32"/><stop offset=".9800" stop-color="#fff" stop-opacity=".159"/><stop offset="1.0000" stop-color="#fff" stop-opacity="0"/></radialGradient><radialGradient id="w37" gradientUnits="userSpaceOnUse" cx="184.5" cy="262.5" r="162.25"><stop offset=".6795" stop-color="#fff" stop-opacity="0"/><stop offset=".6995" stop-opacity=".075"/><stop offset=".7196" stop-opacity=".174"/><stop offset=".7396" stop-opacity=".284"/><stop offset=".7596" stop-opacity=".398"/><stop offset=".7797" stop-opacity=".509"/><stop offset=".7997" stop-opacity=".611"/><stop offset=".8197" stop-opacity=".703"/><stop offset=".8398" stop-opacity=".784"/><stop offset=".8398" stop-color="#fff" stop-opacity=".584"/><stop offset=".8598" stop-color="#fff" stop-opacity=".601"/><stop offset=".8798" stop-color="#fff" stop-opacity=".603"/><stop offset=".8998" stop-color="#fff" stop-opacity=".582"/><stop offset=".9199" stop-color="#fff" stop-opacity=".53"/><stop offset=".9399" stop-color="#fff" stop-opacity=".44"/><stop offset=".9599" stop-color="#fff" stop-opacity=".313"/><stop offset=".9800" stop-color="#fff" stop-opacity=".156"/><stop offset="1.0000" stop-color="#fff" stop-opacity="0"/></radialGradient><radialGradient id="w38" gradientUnits="userSpaceOnUse" cx="184.5" cy="262.5" r="162.25"><stop offset=".6795" stop-color="#fff" stop-opacity="0"/><stop offset=".6995" stop-opacity=".073"/><stop offset=".7196" stop-opacity=".17"/><stop offset=".7396" stop-opacity=".279"/><stop offset=".7596" stop-opacity=".391"/><stop offset=".7797" stop-opacity=".501"/><stop offset=".7997" stop-opacity=".602"/><stop offset=".8197" stop-opacity=".693"/><stop offset=".8398" stop-opacity=".773"/><stop offset=".8398" stop-color="#fff" stop-opacity=".559"/><stop offset=".8598" stop-color="#fff" stop-opacity=".578"/><stop offset=".8798" stop-color="#fff" stop-opacity=".582"/><stop offset=".8998" stop-color="#fff" stop-opacity=".563"/><stop offset=".9199" stop-color="#fff" stop-opacity=".515"/><stop offset=".9399" stop-color="#fff" stop-opacity=".429"/><stop offset=".9599" stop-color="#fff" stop-opacity=".305"/><stop offset=".9800" stop-color="#fff" stop-opacity=".152"/><stop offset="1.0000" stop-color="#fff" stop-opacity="0"/></radialGradient><radialGradient id="w39" gradientUnits="userSpaceOnUse" cx="184.5" cy="262.5" r="162.25"><stop offset=".6795" stop-color="#fff" stop-opacity="0"/><stop offset=".6995" stop-opacity=".072"/><stop offset=".7196" stop-opacity=".167"/><stop offset=".7396" stop-opacity=".274"/><stop offset=".7596" stop-opacity=".385"/><stop offset=".7797" stop-opacity=".492"/><stop offset=".7997" stop-opacity=".592"/><stop offset=".8197" stop-opacity=".683"/><stop offset=".8398" stop-opacity=".762"/><stop offset=".8398" stop-color="#fff" stop-opacity=".532"/><stop offset=".8598" stop-color="#fff" stop-opacity=".553"/><stop offset=".8798" stop-color="#fff" stop-opacity=".559"/><stop offset=".8998" stop-color="#fff" stop-opacity=".544"/><stop offset=".9199" stop-color="#fff" stop-opacity=".498"/><stop offset=".9399" stop-color="#fff" stop-opacity=".417"/><stop offset=".9599" stop-color="#fff" stop-opacity=".298"/><stop offset=".9800" stop-color="#fff" stop-opacity=".148"/><stop offset="1.0000" stop-color="#fff" stop-opacity="0"/></radialGradient><radialGradient id="w40" gradientUnits="userSpaceOnUse" cx="184.5" cy="262.5" r="162.25"><stop offset=".6795" stop-color="#fff" stop-opacity="0"/><stop offset=".6995" stop-opacity=".07"/><stop offset=".7196" stop-opacity=".163"/><stop offset=".7396" stop-opacity=".268"/><stop offset=".7596" stop-opacity=".377"/><stop offset=".7797" stop-opacity=".484"/><stop offset=".7997" stop-opacity=".582"/><stop offset=".8197" stop-opacity=".671"/><stop offset=".8398" stop-opacity=".75"/><stop offset=".8398" stop-color="#fff" stop-opacity=".504"/><stop offset=".8598" stop-color="#fff" stop-opacity=".527"/><stop offset=".8798" stop-color="#fff" stop-opacity=".536"/><stop offset=".8998" stop-color="#fff" stop-opacity=".523"/><stop offset=".9199" stop-color="#fff" stop-opacity=".482"/><stop offset=".9399" stop-color="#fff" stop-opacity=".404"/><stop offset=".9599" stop-color="#fff" stop-opacity=".289"/><stop offset=".9800" stop-color="#fff" stop-opacity=".145"/><stop offset="1.0000" stop-color="#fff" stop-opacity="0"/></radialGradient><radialGradient id="w41" gradientUnits="userSpaceOnUse" cx="184.5" cy="262.5" r="162.25"><stop offset=".6795" stop-color="#fff" stop-opacity="0"/><stop offset=".6995" stop-opacity=".068"/><stop offset=".7196" stop-opacity=".16"/><stop offset=".7396" stop-opacity=".263"/><stop offset=".7596" stop-opacity=".37"/><stop offset=".7797" stop-opacity=".474"/><stop offset=".7997" stop-opacity=".572"/><stop offset=".8197" stop-opacity=".66"/><stop offset=".8398" stop-opacity=".737"/><stop offset=".8398" stop-color="#fff" stop-opacity=".475"/><stop offset=".8598" stop-color="#fff" stop-opacity=".5"/><stop offset=".8798" stop-color="#fff" stop-opacity=".511"/><stop offset=".8998" stop-color="#fff" stop-opacity=".502"/><stop offset=".9199" stop-color="#fff" stop-opacity=".464"/><stop offset=".9399" stop-color="#fff" stop-opacity=".391"/><stop offset=".9599" stop-color="#fff" stop-opacity=".281"/><stop offset=".9800" stop-color="#fff" stop-opacity=".141"/><stop offset="1.0000" stop-color="#fff" stop-opacity="0"/></radialGradient><radialGradient id="w42" gradientUnits="userSpaceOnUse" cx="184.5" cy="262.5" r="162.25"><stop offset=".6795" stop-color="#fff" stop-opacity="0"/><stop offset=".6995" stop-opacity=".067"/><stop offset=".7196" stop-opacity=".156"/><stop offset=".7396" stop-opacity=".257"/><stop offset=".7596" stop-opacity=".362"/><stop offset=".7797" stop-opacity=".465"/><stop offset=".7997" stop-opacity=".561"/><stop offset=".8197" stop-opacity=".648"/><stop offset=".8398" stop-opacity=".724"/><stop offset=".8398" stop-color="#fff" stop-opacity=".444"/><stop offset=".8598" stop-color="#fff" stop-opacity=".471"/><stop offset=".8798" stop-color="#fff" stop-opacity=".485"/><stop offset=".8998" stop-color="#fff" stop-opacity=".479"/><stop offset=".9199" stop-color="#fff" stop-opacity=".445"/><stop offset=".9399" stop-color="#fff" stop-opacity=".377"/><stop offset=".9599" stop-color="#fff" stop-opacity=".271"/><stop offset=".9800" stop-color="#fff" stop-opacity=".136"/><stop offset="1.0000" stop-color="#fff" stop-opacity="0"/></radialGradient><radialGradient id="w43" gradientUnits="userSpaceOnUse" cx="184.5" cy="262.5" r="162.25"><stop offset=".6795" stop-color="#fff" stop-opacity="0"/><stop offset=".6995" stop-opacity=".065"/><stop offset=".7196" stop-opacity=".152"/><stop offset=".7396" stop-opacity=".251"/><stop offset=".7596" stop-opacity=".354"/><stop offset=".7797" stop-opacity=".455"/><stop offset=".7997" stop-opacity=".549"/><stop offset=".8197" stop-opacity=".635"/><stop offset=".8398" stop-opacity=".711"/><stop offset=".8398" stop-color="#fff" stop-opacity=".413"/><stop offset=".8598" stop-color="#fff" stop-opacity=".442"/><stop offset=".8798" stop-color="#fff" stop-opacity=".459"/><stop offset=".8998" stop-color="#fff" stop-opacity=".456"/><stop offset=".9199" stop-color="#fff" stop-opacity=".426"/><stop offset=".9399" stop-color="#fff" stop-opacity=".362"/><stop offset=".9599" stop-color="#fff" stop-opacity=".262"/><stop offset=".9800" stop-color="#fff" stop-opacity=".132"/><stop offset="1.0000" stop-color="#fff" stop-opacity="0"/></radialGradient><radialGradient id="w44" gradientUnits="userSpaceOnUse" cx="184.5" cy="262.5" r="162.25"><stop offset=".6795" stop-color="#fff" stop-opacity="0"/><stop offset=".6995" stop-opacity=".063"/><stop offset=".7196" stop-opacity=".148"/><stop offset=".7396" stop-opacity=".244"/><stop offset=".7596" stop-opacity=".345"/><stop offset=".7797" stop-opacity=".444"/><stop offset=".7997" stop-opacity=".537"/><stop offset=".8197" stop-opacity=".622"/><stop offset=".8398" stop-opacity=".696"/><stop offset=".8398" stop-color="#fff" stop-opacity=".379"/><stop offset=".8598" stop-color="#fff" stop-opacity=".411"/><stop offset=".8798" stop-color="#fff" stop-opacity=".431"/><stop offset=".8998" stop-color="#fff" stop-opacity=".432"/><stop offset=".9199" stop-color="#fff" stop-opacity=".406"/><stop offset=".9399" stop-color="#fff" stop-opacity=".347"/><stop offset=".9599" stop-color="#fff" stop-opacity=".252"/><stop offset=".9800" stop-color="#fff" stop-opacity=".128"/><stop offset="1.0000" stop-color="#fff" stop-opacity="0"/></radialGradient><radialGradient id="w45" gradientUnits="userSpaceOnUse" cx="184.5" cy="262.5" r="162.25"><stop offset=".6795" stop-color="#fff" stop-opacity="0"/><stop offset=".6995" stop-opacity=".061"/><stop offset=".7196" stop-opacity=".143"/><stop offset=".7396" stop-opacity=".237"/><stop offset=".7596" stop-opacity=".336"/><stop offset=".7797" stop-opacity=".434"/><stop offset=".7997" stop-opacity=".525"/><stop offset=".8197" stop-opacity=".608"/><stop offset=".8398" stop-opacity=".682"/><stop offset=".8398" stop-color="#fff" stop-opacity=".345"/><stop offset=".8598" stop-color="#fff" stop-opacity=".379"/><stop offset=".8798" stop-color="#fff" stop-opacity=".402"/><stop offset=".8998" stop-color="#fff" stop-opacity=".406"/><stop offset=".9199" stop-color="#fff" stop-opacity=".385"/><stop offset=".9399" stop-color="#fff" stop-opacity=".331"/><stop offset=".9599" stop-color="#fff" stop-opacity=".242"/><stop offset=".9800" stop-color="#fff" stop-opacity=".123"/><stop offset="1.0000" stop-color="#fff" stop-opacity="0"/></radialGradient><radialGradient id="w46" gradientUnits="userSpaceOnUse" cx="184.5" cy="262.5" r="162.25"><stop offset=".6795" stop-color="#fff" stop-opacity="0"/><stop offset=".6995" stop-opacity=".059"/><stop offset=".7196" stop-opacity=".139"/><stop offset=".7396" stop-opacity=".23"/><stop offset=".7596" stop-opacity=".327"/><stop offset=".7797" stop-opacity=".422"/><stop offset=".7997" stop-opacity=".512"/><stop offset=".8197" stop-opacity=".594"/><stop offset=".8398" stop-opacity=".666"/><stop offset=".8398" stop-color="#fff" stop-opacity=".309"/><stop offset=".8598" stop-color="#fff" stop-opacity=".346"/><stop offset=".8798" stop-color="#fff" stop-opacity=".372"/><stop offset=".8998" stop-color="#fff" stop-opacity=".38"/><stop offset=".9199" stop-color="#fff" stop-opacity=".364"/><stop offset=".9399" stop-color="#fff" stop-opacity=".315"/><stop offset=".9599" stop-color="#fff" stop-opacity=".231"/><stop offset=".9800" stop-color="#fff" stop-opacity=".118"/><stop offset="1.0000" stop-color="#fff" stop-opacity="0"/></radialGradient><radialGradient id="w47" gradientUnits="userSpaceOnUse" cx="184.5" cy="262.5" r="162.25"><stop offset=".6795" stop-color="#fff" stop-opacity="0"/><stop offset=".6995" stop-opacity=".057"/><stop offset=".7196" stop-opacity=".134"/><stop offset=".7396" stop-opacity=".223"/><stop offset=".7596" stop-opacity=".318"/><stop offset=".7797" stop-opacity=".411"/><stop offset=".7997" stop-opacity=".499"/><stop offset=".8197" stop-opacity=".579"/><stop offset=".8398" stop-opacity=".651"/><stop offset=".8398" stop-color="#fff" stop-opacity=".272"/><stop offset=".8598" stop-color="#fff" stop-opacity=".312"/><stop offset=".8798" stop-color="#fff" stop-opacity=".341"/><stop offset=".8998" stop-color="#fff" stop-opacity=".353"/><stop offset=".9199" stop-color="#fff" stop-opacity=".341"/><stop offset=".9399" stop-color="#fff" stop-opacity=".298"/><stop offset=".9599" stop-color="#fff" stop-opacity=".22"/><stop offset=".9800" stop-color="#fff" stop-opacity=".113"/><stop offset="1.0000" stop-color="#fff" stop-opacity="0"/></radialGradient><radialGradient id="w48" gradientUnits="userSpaceOnUse" cx="184.5" cy="262.5" r="162.25"><stop offset=".6795" stop-color="#fff" stop-opacity="0"/><stop offset=".6995" stop-opacity=".054"/><stop offset=".7196" stop-opacity=".129"/><stop offset=".7396" stop-opacity=".216"/><stop offset=".7596" stop-opacity=".308"/><stop offset=".7797" stop-opacity=".399"/><stop offset=".7997" stop-opacity=".485"/><stop offset=".8197" stop-opacity=".564"/><stop offset=".8398" stop-opacity=".635"/><stop offset=".8398" stop-color="#fff" stop-opacity=".234"/><stop offset=".8598" stop-color="#fff" stop-opacity=".276"/><stop offset=".8798" stop-color="#fff" stop-opacity=".309"/><stop offset=".8998" stop-color="#fff" stop-opacity=".326"/><stop offset=".9199" stop-color="#fff" stop-opacity=".319"/><stop offset=".9399" stop-color="#fff" stop-opacity=".281"/><stop offset=".9599" stop-color="#fff" stop-opacity=".209"/><stop offset=".9800" stop-color="#fff" stop-opacity=".108"/><stop offset="1.0000" stop-color="#fff" stop-opacity="0"/></radialGradient><radialGradient id="w49" gradientUnits="userSpaceOnUse" cx="184.5" cy="262.5" r="162.25"><stop offset=".6795" stop-color="#fff" stop-opacity="0"/><stop offset=".6995" stop-opacity=".052"/><stop offset=".7196" stop-opacity=".124"/><stop offset=".7396" stop-opacity=".208"/><stop offset=".7596" stop-opacity=".298"/><stop offset=".7797" stop-opacity=".387"/><stop offset=".7997" stop-opacity=".471"/><stop offset=".8197" stop-opacity=".549"/><stop offset=".8398" stop-opacity=".618"/><stop offset=".8398" stop-color="#fff" stop-opacity=".196"/><stop offset=".8598" stop-color="#fff" stop-opacity=".24"/><stop offset=".8798" stop-color="#fff" stop-opacity=".276"/><stop offset=".8998" stop-color="#fff" stop-opacity=".297"/><stop offset=".9199" stop-color="#fff" stop-opacity=".295"/><stop offset=".9399" stop-color="#fff" stop-opacity=".263"/><stop offset=".9599" stop-color="#fff" stop-opacity=".197"/><stop offset=".9800" stop-color="#fff" stop-opacity=".102"/><stop offset="1.0000" stop-color="#fff" stop-opacity="0"/></radialGradient><radialGradient id="w50" gradientUnits="userSpaceOnUse" cx="184.5" cy="262.5" r="162.25"><stop offset=".6795" stop-color="#fff" stop-opacity="0"/><stop offset=".6995" stop-opacity=".05"/><stop offset=".7196" stop-opacity=".119"/><stop offset=".7396" stop-opacity=".2"/><stop offset=".7596" stop-opacity=".287"/><stop offset=".7797" stop-opacity=".374"/><stop offset=".7997" stop-opacity=".457"/><stop offset=".8197" stop-opacity=".533"/><stop offset=".8398" stop-opacity=".601"/><stop offset=".8398" stop-color="#fff" stop-opacity=".156"/><stop offset=".8598" stop-color="#fff" stop-opacity=".203"/><stop offset=".8798" stop-color="#fff" stop-opacity=".243"/><stop offset=".8998" stop-color="#fff" stop-opacity=".268"/><stop offset=".9199" stop-color="#fff" stop-opacity=".271"/><stop offset=".9399" stop-color="#fff" stop-opacity=".245"/><stop offset=".9599" stop-color="#fff" stop-opacity=".186"/><stop offset=".9800" stop-color="#fff" stop-opacity=".097"/><stop offset="1.0000" stop-color="#fff" stop-opacity="0"/></radialGradient><radialGradient id="w51" gradientUnits="userSpaceOnUse" cx="184.5" cy="262.5" r="162.25"><stop offset=".6795" stop-color="#fff" stop-opacity="0"/><stop offset=".6995" stop-opacity=".047"/><stop offset=".7196" stop-opacity=".114"/><stop offset=".7396" stop-opacity=".192"/><stop offset=".7596" stop-opacity=".277"/><stop offset=".7797" stop-opacity=".362"/><stop offset=".7997" stop-opacity=".442"/><stop offset=".8197" stop-opacity=".517"/><stop offset=".8398" stop-opacity=".583"/><stop offset=".8398" stop-color="#fff" stop-opacity=".115"/><stop offset=".8598" stop-color="#fff" stop-opacity=".165"/><stop offset=".8798" stop-color="#fff" stop-opacity=".208"/><stop offset=".8998" stop-color="#fff" stop-opacity=".238"/><stop offset=".9199" stop-color="#fff" stop-opacity=".246"/><stop offset=".9399" stop-color="#fff" stop-opacity=".226"/><stop offset=".9599" stop-color="#fff" stop-opacity=".173"/><stop offset=".9800" stop-color="#fff" stop-opacity=".091"/><stop offset="1.0000" stop-color="#fff" stop-opacity="0"/></radialGradient><radialGradient id="w52" gradientUnits="userSpaceOnUse" cx="184.5" cy="262.5" r="162.25"><stop offset=".6795" stop-color="#fff" stop-opacity="0"/><stop offset=".6995" stop-opacity=".045"/><stop offset=".7196" stop-opacity=".109"/><stop offset=".7396" stop-opacity=".184"/><stop offset=".7596" stop-opacity=".266"/><stop offset=".7797" stop-opacity=".349"/><stop offset=".7997" stop-opacity=".427"/><stop offset=".8197" stop-opacity=".5"/><stop offset=".8398" stop-opacity=".566"/><stop offset=".8398" stop-color="#fff" stop-opacity=".073"/><stop offset=".8598" stop-color="#fff" stop-opacity=".126"/><stop offset=".8798" stop-color="#fff" stop-opacity=".173"/><stop offset=".8998" stop-color="#fff" stop-opacity=".207"/><stop offset=".9199" stop-color="#fff" stop-opacity=".221"/><stop offset=".9399" stop-color="#fff" stop-opacity=".207"/><stop offset=".9599" stop-color="#fff" stop-opacity=".161"/><stop offset=".9800" stop-color="#fff" stop-opacity=".086"/><stop offset="1.0000" stop-color="#fff" stop-opacity="0"/></radialGradient><radialGradient id="w53" gradientUnits="userSpaceOnUse" cx="184.5" cy="262.5" r="162.25"><stop offset=".6795" stop-color="#fff" stop-opacity="0"/><stop offset=".6995" stop-opacity=".042"/><stop offset=".7196" stop-opacity=".103"/><stop offset=".7396" stop-opacity=".176"/><stop offset=".7596" stop-opacity=".255"/><stop offset=".7797" stop-opacity=".335"/><stop offset=".7997" stop-opacity=".412"/><stop offset=".8197" stop-opacity=".483"/><stop offset=".8398" stop-opacity=".547"/><stop offset=".8398" stop-color="#fff" stop-opacity=".03"/><stop offset=".8598" stop-color="#fff" stop-opacity=".087"/><stop offset=".8798" stop-color="#fff" stop-opacity=".137"/><stop offset=".8998" stop-color="#fff" stop-opacity=".176"/><stop offset=".9199" stop-color="#fff" stop-opacity=".195"/><stop offset=".9399" stop-color="#fff" stop-opacity=".187"/><stop offset=".9599" stop-color="#fff" stop-opacity=".148"/><stop offset=".9800" stop-color="#fff" stop-opacity=".08"/><stop offset="1.0000" stop-color="#fff" stop-opacity="0"/></radialGradient><radialGradient id="w54" gradientUnits="userSpaceOnUse" cx="184.5" cy="262.5" r="162.25"><stop offset=".6795" stop-color="#fff" stop-opacity="0"/><stop offset=".6995" stop-opacity=".04"/><stop offset=".7196" stop-opacity=".098"/><stop offset=".7396" stop-opacity=".167"/><stop offset=".7596" stop-opacity=".244"/><stop offset=".7797" stop-opacity=".322"/><stop offset=".7997" stop-opacity=".397"/><stop offset=".8197" stop-opacity=".466"/><stop offset=".8398" stop-opacity=".529"/><stop offset=".8398" stop-opacity=".006"/><stop offset=".8441" stop-opacity="0"/><stop offset=".8441" stop-color="#fff" stop-opacity="0"/><stop offset=".8598" stop-color="#fff" stop-opacity=".047"/><stop offset=".8798" stop-color="#fff" stop-opacity=".101"/><stop offset=".8998" stop-color="#fff" stop-opacity=".144"/><stop offset=".9199" stop-color="#fff" stop-opacity=".169"/><stop offset=".9399" stop-color="#fff" stop-opacity=".168"/><stop offset=".9599" stop-color="#fff" stop-opacity=".135"/><stop offset=".9800" stop-color="#fff" stop-opacity=".074"/><stop offset="1.0000" stop-color="#fff" stop-opacity="0"/></radialGradient><radialGradient id="w55" gradientUnits="userSpaceOnUse" cx="184.5" cy="262.5" r="162.25"><stop offset=".6795" stop-color="#fff" stop-opacity="0"/><stop offset=".6995" stop-opacity=".037"/><stop offset=".7196" stop-opacity=".092"/><stop offset=".7396" stop-opacity=".159"/><stop offset=".7596" stop-opacity=".232"/><stop offset=".7797" stop-opacity=".308"/><stop offset=".7997" stop-opacity=".381"/><stop offset=".8197" stop-opacity=".448"/><stop offset=".8398" stop-opacity=".51"/><stop offset=".8398" stop-opacity=".024"/><stop offset=".8580" stop-opacity="0"/><stop offset=".8580" stop-color="#fff" stop-opacity="0"/><stop offset=".8598" stop-color="#fff" stop-opacity=".006"/><stop offset=".8798" stop-color="#fff" stop-opacity=".064"/><stop offset=".8998" stop-color="#fff" stop-opacity=".112"/><stop offset=".9199" stop-color="#fff" stop-opacity=".142"/><stop offset=".9399" stop-color="#fff" stop-opacity=".147"/><stop offset=".9599" stop-color="#fff" stop-opacity=".122"/><stop offset=".9800" stop-color="#fff" stop-opacity=".068"/><stop offset="1.0000" stop-color="#fff" stop-opacity="0"/></radialGradient><radialGradient id="w56" gradientUnits="userSpaceOnUse" cx="184.5" cy="262.5" r="162.25"><stop offset=".6795" stop-color="#fff" stop-opacity="0"/><stop offset=".6995" stop-opacity=".035"/><stop offset=".7196" stop-opacity=".086"/><stop offset=".7396" stop-opacity=".15"/><stop offset=".7596" stop-opacity=".221"/><stop offset=".7797" stop-opacity=".294"/><stop offset=".7997" stop-opacity=".365"/><stop offset=".8197" stop-opacity=".431"/><stop offset=".8398" stop-opacity=".491"/><stop offset=".8398" stop-opacity=".044"/><stop offset=".8598" stop-opacity=".015"/><stop offset=".8714" stop-opacity="0"/><stop offset=".8714" stop-color="#fff" stop-opacity="0"/><stop offset=".8798" stop-color="#fff" stop-opacity=".026"/><stop offset=".8998" stop-color="#fff" stop-opacity=".079"/><stop offset=".9199" stop-color="#fff" stop-opacity=".115"/><stop offset=".9399" stop-color="#fff" stop-opacity=".127"/><stop offset=".9599" stop-color="#fff" stop-opacity=".109"/><stop offset=".9800" stop-color="#fff" stop-opacity=".062"/><stop offset="1.0000" stop-color="#fff" stop-opacity="0"/></radialGradient><radialGradient id="w57" gradientUnits="userSpaceOnUse" cx="184.5" cy="262.5" r="162.25"><stop offset=".6795" stop-color="#fff" stop-opacity="0"/><stop offset=".6995" stop-opacity=".032"/><stop offset=".7196" stop-opacity=".081"/><stop offset=".7396" stop-opacity=".141"/><stop offset=".7596" stop-opacity=".209"/><stop offset=".7797" stop-opacity=".279"/><stop offset=".7997" stop-opacity=".348"/><stop offset=".8197" stop-opacity=".413"/><stop offset=".8398" stop-opacity=".471"/><stop offset=".8398" stop-opacity=".063"/><stop offset=".8598" stop-opacity=".034"/><stop offset=".8798" stop-opacity=".005"/><stop offset=".8840" stop-opacity="0"/><stop offset=".8840" stop-color="#fff" stop-opacity="0"/><stop offset=".8998" stop-color="#fff" stop-opacity=".046"/><stop offset=".9199" stop-color="#fff" stop-opacity=".088"/><stop offset=".9399" stop-color="#fff" stop-opacity=".106"/><stop offset=".9599" stop-color="#fff" stop-opacity=".095"/><stop offset=".9800" stop-color="#fff" stop-opacity=".056"/><stop offset="1.0000" stop-color="#fff" stop-opacity="0"/></radialGradient><radialGradient id="w58" gradientUnits="userSpaceOnUse" cx="184.5" cy="262.5" r="162.25"><stop offset=".6795" stop-color="#fff" stop-opacity="0"/><stop offset=".6995" stop-opacity=".029"/><stop offset=".7196" stop-opacity=".075"/><stop offset=".7396" stop-opacity=".132"/><stop offset=".7596" stop-opacity=".197"/><stop offset=".7797" stop-opacity=".265"/><stop offset=".7997" stop-opacity=".332"/><stop offset=".8197" stop-opacity=".394"/><stop offset=".8398" stop-opacity=".452"/><stop offset=".8398" stop-opacity=".083"/><stop offset=".8598" stop-opacity=".052"/><stop offset=".8798" stop-opacity=".022"/><stop offset=".8960" stop-opacity="0"/><stop offset=".8960" stop-color="#fff" stop-opacity="0"/><stop offset=".8998" stop-color="#fff" stop-opacity=".012"/><stop offset=".9199" stop-color="#fff" stop-opacity=".06"/><stop offset=".9399" stop-color="#fff" stop-opacity=".085"/><stop offset=".9599" stop-color="#fff" stop-opacity=".082"/><stop offset=".9800" stop-color="#fff" stop-opacity=".049"/><stop offset="1.0000" stop-color="#fff" stop-opacity="0"/></radialGradient><radialGradient id="w59" gradientUnits="userSpaceOnUse" cx="184.5" cy="262.5" r="162.25"><stop offset=".6795" stop-color="#fff" stop-opacity="0"/><stop offset=".6995" stop-opacity=".027"/><stop offset=".7196" stop-opacity=".069"/><stop offset=".7396" stop-opacity=".123"/><stop offset=".7596" stop-opacity=".185"/><stop offset=".7797" stop-opacity=".25"/><stop offset=".7997" stop-opacity=".315"/><stop offset=".8197" stop-opacity=".376"/><stop offset=".8398" stop-opacity=".432"/><stop offset=".8398" stop-opacity=".103"/><stop offset=".8598" stop-opacity=".07"/><stop offset=".8798" stop-opacity=".038"/><stop offset=".8998" stop-opacity=".009"/><stop offset=".9081" stop-opacity="0"/><stop offset=".9081" stop-color="#fff" stop-opacity="0"/><stop offset=".9199" stop-color="#fff" stop-opacity=".032"/><stop offset=".9399" stop-color="#fff" stop-opacity=".064"/><stop offset=".9599" stop-color="#fff" stop-opacity=".068"/><stop offset=".9800" stop-color="#fff" stop-opacity=".043"/><stop offset="1.0000" stop-color="#fff" stop-opacity="0"/></radialGradient><radialGradient id="w60" gradientUnits="userSpaceOnUse" cx="184.5" cy="262.5" r="162.25"><stop offset=".6795" stop-color="#fff" stop-opacity="0"/><stop offset=".6995" stop-opacity=".024"/><stop offset=".7196" stop-opacity=".063"/><stop offset=".7396" stop-opacity=".114"/><stop offset=".7596" stop-opacity=".173"/><stop offset=".7797" stop-opacity=".236"/><stop offset=".7997" stop-opacity=".298"/><stop offset=".8197" stop-opacity=".357"/><stop offset=".8398" stop-opacity=".412"/><stop offset=".8398" stop-opacity=".123"/><stop offset=".8598" stop-opacity=".089"/><stop offset=".8798" stop-opacity=".055"/><stop offset=".8998" stop-opacity=".024"/><stop offset=".9188" stop-opacity="0"/><stop offset=".9188" stop-color="#fff" stop-opacity="0"/><stop offset=".9199" stop-color="#fff" stop-opacity=".003"/><stop offset=".9399" stop-color="#fff" stop-opacity=".042"/><stop offset=".9599" stop-color="#fff" stop-opacity=".054"/><stop offset=".9800" stop-color="#fff" stop-opacity=".036"/><stop offset="1.0000" stop-color="#fff" stop-opacity="0"/></radialGradient><radialGradient id="w61" gradientUnits="userSpaceOnUse" cx="184.5" cy="262.5" r="162.25"><stop offset=".6795" stop-color="#fff" stop-opacity="0"/><stop offset=".6995" stop-opacity=".021"/><stop offset=".7196" stop-opacity=".057"/><stop offset=".7396" stop-opacity=".105"/><stop offset=".7596" stop-opacity=".161"/><stop offset=".7797" stop-opacity=".221"/><stop offset=".7997" stop-opacity=".281"/><stop offset=".8197" stop-opacity=".338"/><stop offset=".8398" stop-opacity=".391"/><stop offset=".8398" stop-opacity=".143"/><stop offset=".8598" stop-opacity=".108"/><stop offset=".8798" stop-opacity=".072"/><stop offset=".8998" stop-opacity=".039"/><stop offset=".9199" stop-opacity=".011"/><stop offset=".9309" stop-opacity="0"/><stop offset=".9309" stop-color="#fff" stop-opacity="0"/><stop offset=".9399" stop-color="#fff" stop-opacity=".021"/><stop offset=".9599" stop-color="#fff" stop-opacity=".04"/><stop offset=".9800" stop-color="#fff" stop-opacity=".03"/><stop offset="1.0000" stop-color="#fff" stop-opacity="0"/></radialGradient><radialGradient id="w62" gradientUnits="userSpaceOnUse" cx="184.5" cy="262.5" r="162.25"><stop offset=".6795" stop-color="#fff" stop-opacity="0"/><stop offset=".6995" stop-opacity=".018"/><stop offset=".7196" stop-opacity=".051"/><stop offset=".7396" stop-opacity=".095"/><stop offset=".7596" stop-opacity=".148"/><stop offset=".7797" stop-opacity=".206"/><stop offset=".7997" stop-opacity=".264"/><stop offset=".8197" stop-opacity=".319"/><stop offset=".8398" stop-opacity=".371"/><stop offset=".8398" stop-opacity=".164"/><stop offset=".8598" stop-opacity=".127"/><stop offset=".8798" stop-opacity=".09"/><stop offset=".8998" stop-opacity=".054"/><stop offset=".9199" stop-opacity=".023"/><stop offset=".9399" stop-opacity=".001"/><stop offset=".9409" stop-opacity="0"/><stop offset=".9409" stop-color="#fff" stop-opacity="0"/><stop offset=".9599" stop-color="#fff" stop-opacity=".025"/><stop offset=".9800" stop-color="#fff" stop-opacity=".023"/><stop offset="1.0000" stop-color="#fff" stop-opacity="0"/></radialGradient><radialGradient id="w63" gradientUnits="userSpaceOnUse" cx="184.5" cy="262.5" r="162.25"><stop offset=".6795" stop-color="#fff" stop-opacity="0"/><stop offset=".6995" stop-opacity=".016"/><stop offset=".7196" stop-opacity=".045"/><stop offset=".7396" stop-opacity=".086"/><stop offset=".7596" stop-opacity=".136"/><stop offset=".7797" stop-opacity=".191"/><stop offset=".7997" stop-opacity=".246"/><stop offset=".8197" stop-opacity=".3"/><stop offset=".8398" stop-opacity=".35"/><stop offset=".8398" stop-opacity=".184"/><stop offset=".8598" stop-opacity=".146"/><stop offset=".8798" stop-opacity=".107"/><stop offset=".8998" stop-opacity=".069"/><stop offset=".9199" stop-opacity=".036"/><stop offset=".9399" stop-opacity=".01"/><stop offset=".9534" stop-opacity="0"/><stop offset=".9534" stop-color="#fff" stop-opacity="0"/><stop offset=".9599" stop-color="#fff" stop-opacity=".011"/><stop offset=".9800" stop-color="#fff" stop-opacity=".017"/><stop offset="1.0000" stop-color="#fff" stop-opacity="0"/></radialGradient><radialGradient id="w64" gradientUnits="userSpaceOnUse" cx="184.5" cy="262.5" r="162.25"><stop offset=".6795" stop-color="#fff" stop-opacity="0"/><stop offset=".6995" stop-opacity=".013"/><stop offset=".7196" stop-opacity=".038"/><stop offset=".7396" stop-opacity=".076"/><stop offset=".7596" stop-opacity=".123"/><stop offset=".7797" stop-opacity=".176"/><stop offset=".7997" stop-opacity=".229"/><stop offset=".8197" stop-opacity=".281"/><stop offset=".8398" stop-opacity=".33"/><stop offset=".8398" stop-opacity=".205"/><stop offset=".8598" stop-opacity=".165"/><stop offset=".8798" stop-opacity=".124"/><stop offset=".8998" stop-opacity=".084"/><stop offset=".9199" stop-opacity=".048"/><stop offset=".9399" stop-opacity=".019"/><stop offset=".9599" stop-opacity=".001"/><stop offset=".9647" stop-opacity="0"/><stop offset=".9647" stop-color="#fff" stop-opacity="0"/><stop offset=".9800" stop-color="#fff" stop-opacity=".01"/><stop offset="1.0000" stop-color="#fff" stop-opacity="0"/></radialGradient><radialGradient id="w65" gradientUnits="userSpaceOnUse" cx="184.5" cy="262.5" r="162.25"><stop offset=".6795" stop-color="#fff" stop-opacity="0"/><stop offset=".6995" stop-opacity=".01"/><stop offset=".7196" stop-opacity=".032"/><stop offset=".7396" stop-opacity=".067"/><stop offset=".7596" stop-opacity=".111"/><stop offset=".7797" stop-opacity=".16"/><stop offset=".7997" stop-opacity=".212"/><stop offset=".8197" stop-opacity=".262"/><stop offset=".8398" stop-opacity=".309"/><stop offset=".8398" stop-opacity=".226"/><stop offset=".8598" stop-opacity=".184"/><stop offset=".8798" stop-opacity=".142"/><stop offset=".8998" stop-opacity=".099"/><stop offset=".9199" stop-opacity=".061"/><stop offset=".9399" stop-opacity=".029"/><stop offset=".9599" stop-opacity=".008"/><stop offset=".9766" stop-opacity="0"/><stop offset=".9766" stop-color="#fff" stop-opacity="0"/><stop offset=".9800" stop-color="#fff" stop-opacity=".004"/><stop offset="1.0000" stop-color="#fff" stop-opacity="0"/></radialGradient><radialGradient id="w66" gradientUnits="userSpaceOnUse" cx="184.5" cy="262.5" r="162.25"><stop offset=".6795" stop-color="#fff" stop-opacity="0"/><stop offset=".6995" stop-opacity=".007"/><stop offset=".7196" stop-opacity=".026"/><stop offset=".7396" stop-opacity=".057"/><stop offset=".7596" stop-opacity=".098"/><stop offset=".7797" stop-opacity=".145"/><stop offset=".7997" stop-opacity=".194"/><stop offset=".8197" stop-opacity=".242"/><stop offset=".8398" stop-opacity=".288"/><stop offset=".8398" stop-opacity=".246"/><stop offset=".8598" stop-opacity=".204"/><stop offset=".8798" stop-opacity=".159"/><stop offset=".8998" stop-opacity=".115"/><stop offset=".9199" stop-opacity=".073"/><stop offset=".9399" stop-opacity=".038"/><stop offset=".9599" stop-opacity=".014"/><stop offset=".9800" stop-opacity=".001"/><stop offset="1.0000" stop-color="#fff" stop-opacity="0"/></radialGradient><radialGradient id="w67" gradientUnits="userSpaceOnUse" cx="184.5" cy="262.5" r="162.25"><stop offset=".6795" stop-color="#fff" stop-opacity="0"/><stop offset=".6995" stop-opacity=".004"/><stop offset=".7196" stop-opacity=".02"/><stop offset=".7396" stop-opacity=".048"/><stop offset=".7596" stop-opacity=".086"/><stop offset=".7797" stop-opacity=".13"/><stop offset=".7997" stop-opacity=".177"/><stop offset=".8197" stop-opacity=".223"/><stop offset=".8398" stop-opacity=".267"/><stop offset=".8398" stop-opacity=".267"/><stop offset=".8598" stop-opacity=".223"/><stop offset=".8798" stop-opacity=".177"/><stop offset=".8998" stop-opacity=".13"/><stop offset=".9199" stop-opacity=".086"/><stop offset=".9399" stop-opacity=".048"/><stop offset=".9599" stop-opacity=".02"/><stop offset=".9800" stop-opacity=".004"/><stop offset="1.0000" stop-color="#fff" stop-opacity="0"/></radialGradient><radialGradient id="w68" gradientUnits="userSpaceOnUse" cx="184.5" cy="262.5" r="162.25"><stop offset=".6795" stop-color="#fff" stop-opacity="0"/><stop offset=".6995" stop-opacity=".001"/><stop offset=".7196" stop-opacity=".014"/><stop offset=".7396" stop-opacity=".038"/><stop offset=".7596" stop-opacity=".073"/><stop offset=".7797" stop-opacity=".115"/><stop offset=".7997" stop-opacity=".159"/><stop offset=".8197" stop-opacity=".204"/><stop offset=".8398" stop-opacity=".246"/><stop offset=".8398" stop-opacity=".288"/><stop offset=".8598" stop-opacity=".242"/><stop offset=".8798" stop-opacity=".194"/><stop offset=".8998" stop-opacity=".145"/><stop offset=".9199" stop-opacity=".098"/><stop offset=".9399" stop-opacity=".057"/><stop offset=".9599" stop-opacity=".026"/><stop offset=".9800" stop-opacity=".007"/><stop offset="1.0000" stop-color="#fff" stop-opacity="0"/></radialGradient><radialGradient id="w69" gradientUnits="userSpaceOnUse" cx="184.5" cy="262.5" r="162.25"><stop offset=".6795" stop-color="#fff" stop-opacity="0"/><stop offset=".6995" stop-color="#fff" stop-opacity=".004"/><stop offset=".7029" stop-color="#fff" stop-opacity="0"/><stop offset=".7029" stop-opacity="0"/><stop offset=".7196" stop-opacity=".008"/><stop offset=".7396" stop-opacity=".029"/><stop offset=".7596" stop-opacity=".061"/><stop offset=".7797" stop-opacity=".099"/><stop offset=".7997" stop-opacity=".142"/><stop offset=".8197" stop-opacity=".184"/><stop offset=".8398" stop-opacity=".226"/><stop offset=".8398" stop-opacity=".309"/><stop offset=".8598" stop-opacity=".262"/><stop offset=".8798" stop-opacity=".212"/><stop offset=".8998" stop-opacity=".16"/><stop offset=".9199" stop-opacity=".111"/><stop offset=".9399" stop-opacity=".067"/><stop offset=".9599" stop-opacity=".032"/><stop offset=".9800" stop-opacity=".01"/><stop offset="1.0000" stop-color="#fff" stop-opacity="0"/></radialGradient><radialGradient id="w70" gradientUnits="userSpaceOnUse" cx="184.5" cy="262.5" r="162.25"><stop offset=".6795" stop-color="#fff" stop-opacity="0"/><stop offset=".6995" stop-color="#fff" stop-opacity=".01"/><stop offset=".7148" stop-color="#fff" stop-opacity="0"/><stop offset=".7148" stop-opacity="0"/><stop offset=".7196" stop-opacity=".001"/><stop offset=".7396" stop-opacity=".019"/><stop offset=".7596" stop-opacity=".048"/><stop offset=".7797" stop-opacity=".084"/><stop offset=".7997" stop-opacity=".124"/><stop offset=".8197" stop-opacity=".165"/><stop offset=".8398" stop-opacity=".205"/><stop offset=".8398" stop-opacity=".33"/><stop offset=".8598" stop-opacity=".281"/><stop offset=".8798" stop-opacity=".229"/><stop offset=".8998" stop-opacity=".176"/><stop offset=".9199" stop-opacity=".123"/><stop offset=".9399" stop-opacity=".076"/><stop offset=".9599" stop-opacity=".038"/><stop offset=".9800" stop-opacity=".013"/><stop offset="1.0000" stop-color="#fff" stop-opacity="0"/></radialGradient><radialGradient id="w71" gradientUnits="userSpaceOnUse" cx="184.5" cy="262.5" r="162.25"><stop offset=".6795" stop-color="#fff" stop-opacity="0"/><stop offset=".6995" stop-color="#fff" stop-opacity=".017"/><stop offset=".7196" stop-color="#fff" stop-opacity=".011"/><stop offset=".7261" stop-color="#fff" stop-opacity="0"/><stop offset=".7261" stop-opacity="0"/><stop offset=".7396" stop-opacity=".01"/><stop offset=".7596" stop-opacity=".036"/><stop offset=".7797" stop-opacity=".069"/><stop offset=".7997" stop-opacity=".107"/><stop offset=".8197" stop-opacity=".146"/><stop offset=".8398" stop-opacity=".184"/><stop offset=".8398" stop-opacity=".35"/><stop offset=".8598" stop-opacity=".3"/><stop offset=".8798" stop-opacity=".246"/><stop offset=".8998" stop-opacity=".191"/><stop offset=".9199" stop-opacity=".136"/><stop offset=".9399" stop-opacity=".086"/><stop offset=".9599" stop-opacity=".045"/><stop offset=".9800" stop-opacity=".016"/><stop offset="1.0000" stop-color="#fff" stop-opacity="0"/></radialGradient><radialGradient id="w72" gradientUnits="userSpaceOnUse" cx="184.5" cy="262.5" r="162.25"><stop offset=".6795" stop-color="#fff" stop-opacity="0"/><stop offset=".6995" stop-color="#fff" stop-opacity=".023"/><stop offset=".7196" stop-color="#fff" stop-opacity=".025"/><stop offset=".7386" stop-color="#fff" stop-opacity="0"/><stop offset=".7386" stop-opacity="0"/><stop offset=".7396" stop-opacity=".001"/><stop offset=".7596" stop-opacity=".023"/><stop offset=".7797" stop-opacity=".054"/><stop offset=".7997" stop-opacity=".09"/><stop offset=".8197" stop-opacity=".127"/><stop offset=".8398" stop-opacity=".164"/><stop offset=".8398" stop-opacity=".371"/><stop offset=".8598" stop-opacity=".319"/><stop offset=".8798" stop-opacity=".264"/><stop offset=".8998" stop-opacity=".206"/><stop offset=".9199" stop-opacity=".148"/><stop offset=".9399" stop-opacity=".095"/><stop offset=".9599" stop-opacity=".051"/><stop offset=".9800" stop-opacity=".018"/><stop offset="1.0000" stop-color="#fff" stop-opacity="0"/></radialGradient><radialGradient id="w73" gradientUnits="userSpaceOnUse" cx="184.5" cy="262.5" r="162.25"><stop offset=".6795" stop-color="#fff" stop-opacity="0"/><stop offset=".6995" stop-color="#fff" stop-opacity=".03"/><stop offset=".7196" stop-color="#fff" stop-opacity=".04"/><stop offset=".7396" stop-color="#fff" stop-opacity=".021"/><stop offset=".7486" stop-color="#fff" stop-opacity="0"/><stop offset=".7486" stop-opacity="0"/><stop offset=".7596" stop-opacity=".011"/><stop offset=".7797" stop-opacity=".039"/><stop offset=".7997" stop-opacity=".072"/><stop offset=".8197" stop-opacity=".108"/><stop offset=".8398" stop-opacity=".143"/><stop offset=".8398" stop-opacity=".391"/><stop offset=".8598" stop-opacity=".338"/><stop offset=".8798" stop-opacity=".281"/><stop offset=".8998" stop-opacity=".221"/><stop offset=".9199" stop-opacity=".161"/><stop offset=".9399" stop-opacity=".105"/><stop offset=".9599" stop-opacity=".057"/><stop offset=".9800" stop-opacity=".021"/><stop offset="1.0000" stop-color="#fff" stop-opacity="0"/></radialGradient><radialGradient id="w74" gradientUnits="userSpaceOnUse" cx="184.5" cy="262.5" r="162.25"><stop offset=".6795" stop-color="#fff" stop-opacity="0"/><stop offset=".6995" stop-color="#fff" stop-opacity=".036"/><stop offset=".7196" stop-color="#fff" stop-opacity=".054"/><stop offset=".7396" stop-color="#fff" stop-opacity=".042"/><stop offset=".7596" stop-color="#fff" stop-opacity=".003"/><stop offset=".7607" stop-color="#fff" stop-opacity="0"/><stop offset=".7607" stop-opacity="0"/><stop offset=".7797" stop-opacity=".024"/><stop offset=".7997" stop-opacity=".055"/><stop offset=".8197" stop-opacity=".089"/><stop offset=".8398" stop-opacity=".123"/><stop offset=".8398" stop-opacity=".412"/><stop offset=".8598" stop-opacity=".357"/><stop offset=".8798" stop-opacity=".298"/><stop offset=".8998" stop-opacity=".236"/><stop offset=".9199" stop-opacity=".173"/><stop offset=".9399" stop-opacity=".114"/><stop offset=".9599" stop-opacity=".063"/><stop offset=".9800" stop-opacity=".024"/><stop offset="1.0000" stop-color="#fff" stop-opacity="0"/></radialGradient><radialGradient id="w75" gradientUnits="userSpaceOnUse" cx="184.5" cy="262.5" r="162.25"><stop offset=".6795" stop-color="#fff" stop-opacity="0"/><stop offset=".6995" stop-color="#fff" stop-opacity=".043"/><stop offset=".7196" stop-color="#fff" stop-opacity=".068"/><stop offset=".7396" stop-color="#fff" stop-opacity=".064"/><stop offset=".7596" stop-color="#fff" stop-opacity=".032"/><stop offset=".7714" stop-color="#fff" stop-opacity="0"/><stop offset=".7714" stop-opacity="0"/><stop offset=".7797" stop-opacity=".009"/><stop offset=".7997" stop-opacity=".038"/><stop offset=".8197" stop-opacity=".07"/><stop offset=".8398" stop-opacity=".103"/><stop offset=".8398" stop-opacity=".432"/><stop offset=".8598" stop-opacity=".376"/><stop offset=".8798" stop-opacity=".315"/><stop offset=".8998" stop-opacity=".25"/><stop offset=".9199" stop-opacity=".185"/><stop offset=".9399" stop-opacity=".123"/><stop offset=".9599" stop-opacity=".069"/><stop offset=".9800" stop-opacity=".027"/><stop offset="1.0000" stop-color="#fff" stop-opacity="0"/></radialGradient><radialGradient id="w76" gradientUnits="userSpaceOnUse" cx="184.5" cy="262.5" r="162.25"><stop offset=".6795" stop-color="#fff" stop-opacity="0"/><stop offset=".6995" stop-color="#fff" stop-opacity=".049"/><stop offset=".7196" stop-color="#fff" stop-opacity=".082"/><stop offset=".7396" stop-color="#fff" stop-opacity=".085"/><stop offset=".7596" stop-color="#fff" stop-opacity=".06"/><stop offset=".7797" stop-color="#fff" stop-opacity=".012"/><stop offset=".7835" stop-color="#fff" stop-opacity="0"/><stop offset=".7835" stop-opacity="0"/><stop offset=".7997" stop-opacity=".022"/><stop offset=".8197" stop-opacity=".052"/><stop offset=".8398" stop-opacity=".083"/><stop offset=".8398" stop-opacity=".452"/><stop offset=".8598" stop-opacity=".394"/><stop offset=".8798" stop-opacity=".332"/><stop offset=".8998" stop-opacity=".265"/><stop offset=".9199" stop-opacity=".197"/><stop offset=".9399" stop-opacity=".132"/><stop offset=".9599" stop-opacity=".075"/><stop offset=".9800" stop-opacity=".029"/><stop offset="1.0000" stop-color="#fff" stop-opacity="0"/></radialGradient><radialGradient id="w77" gradientUnits="userSpaceOnUse" cx="184.5" cy="262.5" r="162.25"><stop offset=".6795" stop-color="#fff" stop-opacity="0"/><stop offset=".6995" stop-color="#fff" stop-opacity=".056"/><stop offset=".7196" stop-color="#fff" stop-opacity=".095"/><stop offset=".7396" stop-color="#fff" stop-opacity=".106"/><stop offset=".7596" stop-color="#fff" stop-opacity=".088"/><stop offset=".7797" stop-color="#fff" stop-opacity=".046"/><stop offset=".7955" stop-color="#fff" stop-opacity="0"/><stop offset=".7955" stop-opacity="0"/><stop offset=".7997" stop-opacity=".005"/><stop offset=".8197" stop-opacity=".034"/><stop offset=".8398" stop-opacity=".063"/><stop offset=".8398" stop-opacity=".471"/><stop offset=".8598" stop-opacity=".413"/><stop offset=".8798" stop-opacity=".348"/><stop offset=".8998" stop-opacity=".279"/><stop offset=".9199" stop-opacity=".209"/><stop offset=".9399" stop-opacity=".141"/><stop offset=".9599" stop-opacity=".081"/><stop offset=".9800" stop-opacity=".032"/><stop offset="1.0000" stop-color="#fff" stop-opacity="0"/></radialGradient><radialGradient id="w78" gradientUnits="userSpaceOnUse" cx="184.5" cy="262.5" r="162.25"><stop offset=".6795" stop-color="#fff" stop-opacity="0"/><stop offset=".6995" stop-color="#fff" stop-opacity=".062"/><stop offset=".7196" stop-color="#fff" stop-opacity=".109"/><stop offset=".7396" stop-color="#fff" stop-opacity=".127"/><stop offset=".7596" stop-color="#fff" stop-opacity=".115"/><stop offset=".7797" stop-color="#fff" stop-opacity=".079"/><stop offset=".7997" stop-color="#fff" stop-opacity=".026"/><stop offset=".8081" stop-color="#fff" stop-opacity="0"/><stop offset=".8081" stop-opacity="0"/><stop offset=".8197" stop-opacity=".015"/><stop offset=".8398" stop-opacity=".044"/><stop offset=".8398" stop-opacity=".491"/><stop offset=".8598" stop-opacity=".431"/><stop offset=".8798" stop-opacity=".365"/><stop offset=".8998" stop-opacity=".294"/><stop offset=".9199" stop-opacity=".221"/><stop offset=".9399" stop-opacity=".15"/><stop offset=".9599" stop-opacity=".086"/><stop offset=".9800" stop-opacity=".035"/><stop offset="1.0000" stop-color="#fff" stop-opacity="0"/></radialGradient><radialGradient id="w79" gradientUnits="userSpaceOnUse" cx="184.5" cy="262.5" r="162.25"><stop offset=".6795" stop-color="#fff" stop-opacity="0"/><stop offset=".6995" stop-color="#fff" stop-opacity=".068"/><stop offset=".7196" stop-color="#fff" stop-opacity=".122"/><stop offset=".7396" stop-color="#fff" stop-opacity=".147"/><stop offset=".7596" stop-color="#fff" stop-opacity=".142"/><stop offset=".7797" stop-color="#fff" stop-opacity=".112"/><stop offset=".7997" stop-color="#fff" stop-opacity=".064"/><stop offset=".8197" stop-color="#fff" stop-opacity=".006"/><stop offset=".8215" stop-color="#fff" stop-opacity="0"/><stop offset=".8215" stop-opacity="0"/><stop offset=".8398" stop-opacity=".024"/><stop offset=".8398" stop-opacity=".51"/><stop offset=".8598" stop-opacity=".448"/><stop offset=".8798" stop-opacity=".381"/><stop offset=".8998" stop-opacity=".308"/><stop offset=".9199" stop-opacity=".232"/><stop offset=".9399" stop-opacity=".159"/><stop offset=".9599" stop-opacity=".092"/><stop offset=".9800" stop-opacity=".037"/><stop offset="1.0000" stop-color="#fff" stop-opacity="0"/></radialGradient><radialGradient id="w80" gradientUnits="userSpaceOnUse" cx="184.5" cy="262.5" r="162.25"><stop offset=".6795" stop-color="#fff" stop-opacity="0"/><stop offset=".6995" stop-color="#fff" stop-opacity=".074"/><stop offset=".7196" stop-color="#fff" stop-opacity=".135"/><stop offset=".7396" stop-color="#fff" stop-opacity=".168"/><stop offset=".7596" stop-color="#fff" stop-opacity=".169"/><stop offset=".7797" stop-color="#fff" stop-opacity=".144"/><stop offset=".7997" stop-color="#fff" stop-opacity=".101"/><stop offset=".8197" stop-color="#fff" stop-opacity=".047"/><stop offset=".8354" stop-color="#fff" stop-opacity="0"/><stop offset=".8354" stop-opacity="0"/><stop offset=".8398" stop-opacity=".006"/><stop offset=".8398" stop-opacity=".529"/><stop offset=".8598" stop-opacity=".466"/><stop offset=".8798" stop-opacity=".397"/><stop offset=".8998" stop-opacity=".322"/><stop offset=".9199" stop-opacity=".244"/><stop offset=".9399" stop-opacity=".167"/><stop offset=".9599" stop-opacity=".098"/><stop offset=".9800" stop-opacity=".04"/><stop offset="1.0000" stop-color="#fff" stop-opacity="0"/></radialGradient><radialGradient id="w81" gradientUnits="userSpaceOnUse" cx="184.5" cy="262.5" r="162.25"><stop offset=".6795" stop-color="#fff" stop-opacity="0"/><stop offset=".6995" stop-color="#fff" stop-opacity=".08"/><stop offset=".7196" stop-color="#fff" stop-opacity=".148"/><stop offset=".7396" stop-color="#fff" stop-opacity=".187"/><stop offset=".7596" stop-color="#fff" stop-opacity=".195"/><stop offset=".7797" stop-color="#fff" stop-opacity=".176"/><stop offset=".7997" stop-color="#fff" stop-opacity=".137"/><stop offset=".8197" stop-color="#fff" stop-opacity=".087"/><stop offset=".8398" stop-color="#fff" stop-opacity=".03"/><stop offset=".8398" stop-opacity=".547"/><stop offset=".8598" stop-opacity=".483"/><stop offset=".8798" stop-opacity=".412"/><stop offset=".8998" stop-opacity=".335"/><stop offset=".9199" stop-opacity=".255"/><stop offset=".9399" stop-opacity=".176"/><stop offset=".9599" stop-opacity=".103"/><stop offset=".9800" stop-opacity=".042"/><stop offset="1.0000" stop-color="#fff" stop-opacity="0"/></radialGradient><radialGradient id="w82" gradientUnits="userSpaceOnUse" cx="184.5" cy="262.5" r="162.25"><stop offset=".6795" stop-color="#fff" stop-opacity="0"/><stop offset=".6995" stop-color="#fff" stop-opacity=".086"/><stop offset=".7196" stop-color="#fff" stop-opacity=".161"/><stop offset=".7396" stop-color="#fff" stop-opacity=".207"/><stop offset=".7596" stop-color="#fff" stop-opacity=".221"/><stop offset=".7797" stop-color="#fff" stop-opacity=".207"/><stop offset=".7997" stop-color="#fff" stop-opacity=".173"/><stop offset=".8197" stop-color="#fff" stop-opacity=".126"/><stop offset=".8398" stop-color="#fff" stop-opacity=".073"/><stop offset=".8398" stop-opacity=".566"/><stop offset=".8598" stop-opacity=".5"/><stop offset=".8798" stop-opacity=".427"/><stop offset=".8998" stop-opacity=".349"/><stop offset=".9199" stop-opacity=".266"/><stop offset=".9399" stop-opacity=".184"/><stop offset=".9599" stop-opacity=".109"/><stop offset=".9800" stop-opacity=".045"/><stop offset="1.0000" stop-color="#fff" stop-opacity="0"/></radialGradient><radialGradient id="w83" gradientUnits="userSpaceOnUse" cx="184.5" cy="262.5" r="162.25"><stop offset=".6795" stop-color="#fff" stop-opacity="0"/><stop offset=".6995" stop-color="#fff" stop-opacity=".091"/><stop offset=".7196" stop-color="#fff" stop-opacity=".173"/><stop offset=".7396" stop-color="#fff" stop-opacity=".226"/><stop offset=".7596" stop-color="#fff" stop-opacity=".246"/><stop offset=".7797" stop-color="#fff" stop-opacity=".238"/><stop offset=".7997" stop-color="#fff" stop-opacity=".208"/><stop offset=".8197" stop-color="#fff" stop-opacity=".165"/><stop offset=".8398" stop-color="#fff" stop-opacity=".115"/><stop offset=".8398" stop-opacity=".583"/><stop offset=".8598" stop-opacity=".517"/><stop offset=".8798" stop-opacity=".442"/><stop offset=".8998" stop-opacity=".362"/><stop offset=".9199" stop-opacity=".277"/><stop offset=".9399" stop-opacity=".192"/><stop offset=".9599" stop-opacity=".114"/><stop offset=".9800" stop-opacity=".047"/><stop offset="1.0000" stop-color="#fff" stop-opacity="0"/></radialGradient><radialGradient id="w84" gradientUnits="userSpaceOnUse" cx="184.5" cy="262.5" r="162.25"><stop offset=".6795" stop-color="#fff" stop-opacity="0"/><stop offset=".6995" stop-color="#fff" stop-opacity=".097"/><stop offset=".7196" stop-color="#fff" stop-opacity=".186"/><stop offset=".7396" stop-color="#fff" stop-opacity=".245"/><stop offset=".7596" stop-color="#fff" stop-opacity=".271"/><stop offset=".7797" stop-color="#fff" stop-opacity=".268"/><stop offset=".7997" stop-color="#fff" stop-opacity=".243"/><stop offset=".8197" stop-color="#fff" stop-opacity=".203"/><stop offset=".8398" stop-color="#fff" stop-opacity=".156"/><stop offset=".8398" stop-opacity=".601"/><stop offset=".8598" stop-opacity=".533"/><stop offset=".8798" stop-opacity=".457"/><stop offset=".8998" stop-opacity=".374"/><stop offset=".9199" stop-opacity=".287"/><stop offset=".9399" stop-opacity=".2"/><stop offset=".9599" stop-opacity=".119"/><stop offset=".9800" stop-opacity=".05"/><stop offset="1.0000" stop-color="#fff" stop-opacity="0"/></radialGradient><radialGradient id="w85" gradientUnits="userSpaceOnUse" cx="184.5" cy="262.5" r="162.25"><stop offset=".6795" stop-color="#fff" stop-opacity="0"/><stop offset=".6995" stop-color="#fff" stop-opacity=".102"/><stop offset=".7196" stop-color="#fff" stop-opacity=".197"/><stop offset=".7396" stop-color="#fff" stop-opacity=".263"/><stop offset=".7596" stop-color="#fff" stop-opacity=".295"/><stop offset=".7797" stop-color="#fff" stop-opacity=".297"/><stop offset=".7997" stop-color="#fff" stop-opacity=".276"/><stop offset=".8197" stop-color="#fff" stop-opacity=".24"/><stop offset=".8398" stop-color="#fff" stop-opacity=".196"/><stop offset=".8398" stop-opacity=".618"/><stop offset=".8598" stop-opacity=".549"/><stop offset=".8798" stop-opacity=".471"/><stop offset=".8998" stop-opacity=".387"/><stop offset=".9199" stop-opacity=".298"/><stop offset=".9399" stop-opacity=".208"/><stop offset=".9599" stop-opacity=".124"/><stop offset=".9800" stop-opacity=".052"/><stop offset="1.0000" stop-color="#fff" stop-opacity="0"/></radialGradient><radialGradient id="w86" gradientUnits="userSpaceOnUse" cx="184.5" cy="262.5" r="162.25"><stop offset=".6795" stop-color="#fff" stop-opacity="0"/><stop offset=".6995" stop-color="#fff" stop-opacity=".108"/><stop offset=".7196" stop-color="#fff" stop-opacity=".209"/><stop offset=".7396" stop-color="#fff" stop-opacity=".281"/><stop offset=".7596" stop-color="#fff" stop-opacity=".319"/><stop offset=".7797" stop-color="#fff" stop-opacity=".326"/><stop offset=".7997" stop-color="#fff" stop-opacity=".309"/><stop offset=".8197" stop-color="#fff" stop-opacity=".276"/><stop offset=".8398" stop-color="#fff" stop-opacity=".234"/><stop offset=".8398" stop-opacity=".635"/><stop offset=".8598" stop-opacity=".564"/><stop offset=".8798" stop-opacity=".485"/><stop offset=".8998" stop-opacity=".399"/><stop offset=".9199" stop-opacity=".308"/><stop offset=".9399" stop-opacity=".216"/><stop offset=".9599" stop-opacity=".129"/><stop offset=".9800" stop-opacity=".054"/><stop offset="1.0000" stop-color="#fff" stop-opacity="0"/></radialGradient><radialGradient id="w87" gradientUnits="userSpaceOnUse" cx="184.5" cy="262.5" r="162.25"><stop offset=".6795" stop-color="#fff" stop-opacity="0"/><stop offset=".6995" stop-color="#fff" stop-opacity=".113"/><stop offset=".7196" stop-color="#fff" stop-opacity=".22"/><stop offset=".7396" stop-color="#fff" stop-opacity=".298"/><stop offset=".7596" stop-color="#fff" stop-opacity=".341"/><stop offset=".7797" stop-color="#fff" stop-opacity=".353"/><stop offset=".7997" stop-color="#fff" stop-opacity=".341"/><stop offset=".8197" stop-color="#fff" stop-opacity=".312"/><stop offset=".8398" stop-color="#fff" stop-opacity=".272"/><stop offset=".8398" stop-opacity=".651"/><stop offset=".8598" stop-opacity=".579"/><stop offset=".8798" stop-opacity=".499"/><stop offset=".8998" stop-opacity=".411"/><stop offset=".9199" stop-opacity=".318"/><stop offset=".9399" stop-opacity=".223"/><stop offset=".9599" stop-opacity=".134"/><stop offset=".9800" stop-opacity=".057"/><stop offset="1.0000" stop-color="#fff" stop-opacity="0"/></radialGradient><radialGradient id="w88" gradientUnits="userSpaceOnUse" cx="184.5" cy="262.5" r="162.25"><stop offset=".6795" stop-color="#fff" stop-opacity="0"/><stop offset=".6995" stop-color="#fff" stop-opacity=".118"/><stop offset=".7196" stop-color="#fff" stop-opacity=".231"/><stop offset=".7396" stop-color="#fff" stop-opacity=".315"/><stop offset=".7596" stop-color="#fff" stop-opacity=".364"/><stop offset=".7797" stop-color="#fff" stop-opacity=".38"/><stop offset=".7997" stop-color="#fff" stop-opacity=".372"/><stop offset=".8197" stop-color="#fff" stop-opacity=".346"/><stop offset=".8398" stop-color="#fff" stop-opacity=".309"/><stop offset=".8398" stop-opacity=".666"/><stop offset=".8598" stop-opacity=".594"/><stop offset=".8798" stop-opacity=".512"/><stop offset=".8998" stop-opacity=".422"/><stop offset=".9199" stop-opacity=".327"/><stop offset=".9399" stop-opacity=".23"/><stop offset=".9599" stop-opacity=".139"/><stop offset=".9800" stop-opacity=".059"/><stop offset="1.0000" stop-color="#fff" stop-opacity="0"/></radialGradient><radialGradient id="w89" gradientUnits="userSpaceOnUse" cx="184.5" cy="262.5" r="162.25"><stop offset=".6795" stop-color="#fff" stop-opacity="0"/><stop offset=".6995" stop-color="#fff" stop-opacity=".123"/><stop offset=".7196" stop-color="#fff" stop-opacity=".242"/><stop offset=".7396" stop-color="#fff" stop-opacity=".331"/><stop offset=".7596" stop-color="#fff" stop-opacity=".385"/><stop offset=".7797" stop-color="#fff" stop-opacity=".406"/><stop offset=".7997" stop-color="#fff" stop-opacity=".402"/><stop offset=".8197" stop-color="#fff" stop-opacity=".379"/><stop offset=".8398" stop-color="#fff" stop-opacity=".345"/><stop offset=".8398" stop-opacity=".682"/><stop offset=".8598" stop-opacity=".608"/><stop offset=".8798" stop-opacity=".525"/><stop offset=".8998" stop-opacity=".434"/><stop offset=".9199" stop-opacity=".336"/><stop offset=".9399" stop-opacity=".237"/><stop offset=".9599" stop-opacity=".143"/><stop offset=".9800" stop-opacity=".061"/><stop offset="1.0000" stop-color="#fff" stop-opacity="0"/></radialGradient><radialGradient id="w90" gradientUnits="userSpaceOnUse" cx="184.5" cy="262.5" r="162.25"><stop offset=".6795" stop-color="#fff" stop-opacity="0"/><stop offset=".6995" stop-color="#fff" stop-opacity=".128"/><stop offset=".7196" stop-color="#fff" stop-opacity=".252"/><stop offset=".7396" stop-color="#fff" stop-opacity=".347"/><stop offset=".7596" stop-color="#fff" stop-opacity=".406"/><stop offset=".7797" stop-color="#fff" stop-opacity=".432"/><stop offset=".7997" stop-color="#fff" stop-opacity=".431"/><stop offset=".8197" stop-color="#fff" stop-opacity=".411"/><stop offset=".8398" stop-color="#fff" stop-opacity=".379"/><stop offset=".8398" stop-opacity=".696"/><stop offset=".8598" stop-opacity=".622"/><stop offset=".8798" stop-opacity=".537"/><stop offset=".8998" stop-opacity=".444"/><stop offset=".9199" stop-opacity=".345"/><stop offset=".9399" stop-opacity=".244"/><stop offset=".9599" stop-opacity=".148"/><stop offset=".9800" stop-opacity=".063"/><stop offset="1.0000" stop-color="#fff" stop-opacity="0"/></radialGradient><radialGradient id="w91" gradientUnits="userSpaceOnUse" cx="184.5" cy="262.5" r="162.25"><stop offset=".6795" stop-color="#fff" stop-opacity="0"/><stop offset=".6995" stop-color="#fff" stop-opacity=".132"/><stop offset=".7196" stop-color="#fff" stop-opacity=".262"/><stop offset=".7396" stop-color="#fff" stop-opacity=".362"/><stop offset=".7596" stop-color="#fff" stop-opacity=".426"/><stop offset=".7797" stop-color="#fff" stop-opacity=".456"/><stop offset=".7997" stop-color="#fff" stop-opacity=".459"/><stop offset=".8197" stop-color="#fff" stop-opacity=".442"/><stop offset=".8398" stop-color="#fff" stop-opacity=".413"/><stop offset=".8398" stop-opacity=".711"/><stop offset=".8598" stop-opacity=".635"/><stop offset=".8798" stop-opacity=".549"/><stop offset=".8998" stop-opacity=".455"/><stop offset=".9199" stop-opacity=".354"/><stop offset=".9399" stop-opacity=".251"/><stop offset=".9599" stop-opacity=".152"/><stop offset=".9800" stop-opacity=".065"/><stop offset="1.0000" stop-color="#fff" stop-opacity="0"/></radialGradient><radialGradient id="w92" gradientUnits="userSpaceOnUse" cx="184.5" cy="262.5" r="162.25"><stop offset=".6795" stop-color="#fff" stop-opacity="0"/><stop offset=".6995" stop-color="#fff" stop-opacity=".136"/><stop offset=".7196" stop-color="#fff" stop-opacity=".271"/><stop offset=".7396" stop-color="#fff" stop-opacity=".377"/><stop offset=".7596" stop-color="#fff" stop-opacity=".445"/><stop offset=".7797" stop-color="#fff" stop-opacity=".479"/><stop offset=".7997" stop-color="#fff" stop-opacity=".485"/><stop offset=".8197" stop-color="#fff" stop-opacity=".471"/><stop offset=".8398" stop-color="#fff" stop-opacity=".444"/><stop offset=".8398" stop-opacity=".724"/><stop offset=".8598" stop-opacity=".648"/><stop offset=".8798" stop-opacity=".561"/><stop offset=".8998" stop-opacity=".465"/><stop offset=".9199" stop-opacity=".362"/><stop offset=".9399" stop-opacity=".257"/><stop offset=".9599" stop-opacity=".156"/><stop offset=".9800" stop-opacity=".067"/><stop offset="1.0000" stop-color="#fff" stop-opacity="0"/></radialGradient><radialGradient id="w93" gradientUnits="userSpaceOnUse" cx="184.5" cy="262.5" r="162.25"><stop offset=".6795" stop-color="#fff" stop-opacity="0"/><stop offset=".6995" stop-color="#fff" stop-opacity=".141"/><stop offset=".7196" stop-color="#fff" stop-opacity=".281"/><stop offset=".7396" stop-color="#fff" stop-opacity=".391"/><stop offset=".7596" stop-color="#fff" stop-opacity=".464"/><stop offset=".7797" stop-color="#fff" stop-opacity=".502"/><stop offset=".7997" stop-color="#fff" stop-opacity=".511"/><stop offset=".8197" stop-color="#fff" stop-opacity=".5"/><stop offset=".8398" stop-color="#fff" stop-opacity=".475"/><stop offset=".8398" stop-opacity=".737"/><stop offset=".8598" stop-opacity=".66"/><stop offset=".8798" stop-opacity=".572"/><stop offset=".8998" stop-opacity=".474"/><stop offset=".9199" stop-opacity=".37"/><stop offset=".9399" stop-opacity=".263"/><stop offset=".9599" stop-opacity=".16"/><stop offset=".9800" stop-opacity=".068"/><stop offset="1.0000" stop-color="#fff" stop-opacity="0"/></radialGradient><radialGradient id="w94" gradientUnits="userSpaceOnUse" cx="184.5" cy="262.5" r="162.25"><stop offset=".6795" stop-color="#fff" stop-opacity="0"/><stop offset=".6995" stop-color="#fff" stop-opacity=".145"/><stop offset=".7196" stop-color="#fff" stop-opacity=".289"/><stop offset=".7396" stop-color="#fff" stop-opacity=".404"/><stop offset=".7596" stop-color="#fff" stop-opacity=".482"/><stop offset=".7797" stop-color="#fff" stop-opacity=".523"/><stop offset=".7997" stop-color="#fff" stop-opacity=".536"/><stop offset=".8197" stop-color="#fff" stop-opacity=".527"/><stop offset=".8398" stop-color="#fff" stop-opacity=".504"/><stop offset=".8398" stop-opacity=".75"/><stop offset=".8598" stop-opacity=".671"/><stop offset=".8798" stop-opacity=".582"/><stop offset=".8998" stop-opacity=".484"/><stop offset=".9199" stop-opacity=".377"/><stop offset=".9399" stop-opacity=".268"/><stop offset=".9599" stop-opacity=".163"/><stop offset=".9800" stop-opacity=".07"/><stop offset="1.0000" stop-color="#fff" stop-opacity="0"/></radialGradient><radialGradient id="w95" gradientUnits="userSpaceOnUse" cx="184.5" cy="262.5" r="162.25"><stop offset=".6795" stop-color="#fff" stop-opacity="0"/><stop offset=".6995" stop-color="#fff" stop-opacity=".148"/><stop offset=".7196" stop-color="#fff" stop-opacity=".298"/><stop offset=".7396" stop-color="#fff" stop-opacity=".417"/><stop offset=".7596" stop-color="#fff" stop-opacity=".498"/><stop offset=".7797" stop-color="#fff" stop-opacity=".544"/><stop offset=".7997" stop-color="#fff" stop-opacity=".559"/><stop offset=".8197" stop-color="#fff" stop-opacity=".553"/><stop offset=".8398" stop-color="#fff" stop-opacity=".532"/><stop offset=".8398" stop-opacity=".762"/><stop offset=".8598" stop-opacity=".683"/><stop offset=".8798" stop-opacity=".592"/><stop offset=".8998" stop-opacity=".492"/><stop offset=".9199" stop-opacity=".385"/><stop offset=".9399" stop-opacity=".274"/><stop offset=".9599" stop-opacity=".167"/><stop offset=".9800" stop-opacity=".072"/><stop offset="1.0000" stop-color="#fff" stop-opacity="0"/></radialGradient><radialGradient id="w96" gradientUnits="userSpaceOnUse" cx="184.5" cy="262.5" r="162.25"><stop offset=".6795" stop-color="#fff" stop-opacity="0"/><stop offset=".6995" stop-color="#fff" stop-opacity=".152"/><stop offset=".7196" stop-color="#fff" stop-opacity=".305"/><stop offset=".7396" stop-color="#fff" stop-opacity=".429"/><stop offset=".7596" stop-color="#fff" stop-opacity=".515"/><stop offset=".7797" stop-color="#fff" stop-opacity=".563"/><stop offset=".7997" stop-color="#fff" stop-opacity=".582"/><stop offset=".8197" stop-color="#fff" stop-opacity=".578"/><stop offset=".8398" stop-color="#fff" stop-opacity=".559"/><stop offset=".8398" stop-opacity=".773"/><stop offset=".8598" stop-opacity=".693"/><stop offset=".8798" stop-opacity=".602"/><stop offset=".8998" stop-opacity=".501"/><stop offset=".9199" stop-opacity=".391"/><stop offset=".9399" stop-opacity=".279"/><stop offset=".9599" stop-opacity=".17"/><stop offset=".9800" stop-opacity=".073"/><stop offset="1.0000" stop-color="#fff" stop-opacity="0"/></radialGradient><radialGradient id="w97" gradientUnits="userSpaceOnUse" cx="184.5" cy="262.5" r="162.25"><stop offset=".6795" stop-color="#fff" stop-opacity="0"/><stop offset=".6995" stop-color="#fff" stop-opacity=".156"/><stop offset=".7196" stop-color="#fff" stop-opacity=".313"/><stop offset=".7396" stop-color="#fff" stop-opacity=".44"/><stop offset=".7596" stop-color="#fff" stop-opacity=".53"/><stop offset=".7797" stop-color="#fff" stop-opacity=".582"/><stop offset=".7997" stop-color="#fff" stop-opacity=".603"/><stop offset=".8197" stop-color="#fff" stop-opacity=".601"/><stop offset=".8398" stop-color="#fff" stop-opacity=".584"/><stop offset=".8398" stop-opacity=".784"/><stop offset=".8598" stop-opacity=".703"/><stop offset=".8798" stop-opacity=".611"/><stop offset=".8998" stop-opacity=".509"/><stop offset=".9199" stop-opacity=".398"/><stop offset=".9399" stop-opacity=".284"/><stop offset=".9599" stop-opacity=".174"/><stop offset=".9800" stop-opacity=".075"/><stop offset="1.0000" stop-color="#fff" stop-opacity="0"/></radialGradient><radialGradient id="w98" gradientUnits="userSpaceOnUse" cx="184.5" cy="262.5" r="162.25"><stop offset=".6795" stop-color="#fff" stop-opacity="0"/><stop offset=".6995" stop-color="#fff" stop-opacity=".159"/><stop offset=".7196" stop-color="#fff" stop-opacity=".32"/><stop offset=".7396" stop-color="#fff" stop-opacity=".451"/><stop offset=".7596" stop-color="#fff" stop-opacity=".544"/><stop offset=".7797" stop-color="#fff" stop-opacity=".599"/><stop offset=".7997" stop-color="#fff" stop-opacity=".623"/><stop offset=".8197" stop-color="#fff" stop-opacity=".623"/><stop offset=".8398" stop-color="#fff" stop-opacity=".608"/><stop offset=".8398" stop-opacity=".794"/><stop offset=".8598" stop-opacity=".712"/><stop offset=".8798" stop-opacity=".619"/><stop offset=".8998" stop-opacity=".516"/><stop offset=".9199" stop-opacity=".404"/><stop offset=".9399" stop-opacity=".289"/><stop offset=".9599" stop-opacity=".177"/><stop offset=".9800" stop-opacity=".076"/><stop offset="1.0000" stop-color="#fff" stop-opacity="0"/></radialGradient><radialGradient id="w99" gradientUnits="userSpaceOnUse" cx="184.5" cy="262.5" r="162.25"><stop offset=".6795" stop-color="#fff" stop-opacity="0"/><stop offset=".6995" stop-color="#fff" stop-opacity=".162"/><stop offset=".7196" stop-color="#fff" stop-opacity=".327"/><stop offset=".7396" stop-color="#fff" stop-opacity=".461"/><stop offset=".7596" stop-color="#fff" stop-opacity=".557"/><stop offset=".7797" stop-color="#fff" stop-opacity=".615"/><stop offset=".7997" stop-color="#fff" stop-opacity=".641"/><stop offset=".8197" stop-color="#fff" stop-opacity=".644"/><stop offset=".8398" stop-color="#fff" stop-opacity=".63"/><stop offset=".8398" stop-opacity=".8"/><stop offset=".8598" stop-opacity=".721"/><stop offset=".8798" stop-opacity=".627"/><stop offset=".8998" stop-opacity=".523"/><stop offset=".9199" stop-opacity=".41"/><stop offset=".9399" stop-opacity=".293"/><stop offset=".9599" stop-opacity=".179"/><stop offset=".9800" stop-opacity=".077"/><stop offset="1.0000" stop-color="#fff" stop-opacity="0"/></radialGradient><radialGradient id="w100" gradientUnits="userSpaceOnUse" cx="184.5" cy="262.5" r="162.25"><stop offset=".6795" stop-color="#fff" stop-opacity="0"/><stop offset=".6995" stop-color="#fff" stop-opacity=".165"/><stop offset=".7196" stop-color="#fff" stop-opacity=".333"/><stop offset=".7396" stop-color="#fff" stop-opacity=".471"/><stop offset=".7596" stop-color="#fff" stop-opacity=".57"/><stop offset=".7797" stop-color="#fff" stop-opacity=".63"/><stop offset=".7997" stop-color="#fff" stop-opacity=".659"/><stop offset=".8197" stop-color="#fff" stop-opacity=".663"/><stop offset=".8398" stop-color="#fff" stop-opacity=".65"/><stop offset=".8398" stop-opacity=".8"/><stop offset=".8598" stop-opacity=".729"/><stop offset=".8798" stop-opacity=".635"/><stop offset=".8998" stop-opacity=".529"/><stop offset=".9199" stop-opacity=".415"/><stop offset=".9399" stop-opacity=".297"/><stop offset=".9599" stop-opacity=".182"/><stop offset=".9800" stop-opacity=".079"/><stop offset="1.0000" stop-color="#fff" stop-opacity="0"/></radialGradient><radialGradient id="w101" gradientUnits="userSpaceOnUse" cx="184.5" cy="262.5" r="162.25"><stop offset=".6795" stop-color="#fff" stop-opacity="0"/><stop offset=".6995" stop-color="#fff" stop-opacity=".167"/><stop offset=".7196" stop-color="#fff" stop-opacity=".338"/><stop offset=".7396" stop-color="#fff" stop-opacity=".479"/><stop offset=".7596" stop-color="#fff" stop-opacity=".581"/><stop offset=".7797" stop-color="#fff" stop-opacity=".644"/><stop offset=".7997" stop-color="#fff" stop-opacity=".675"/><stop offset=".8197" stop-color="#fff" stop-opacity=".68"/><stop offset=".8398" stop-color="#fff" stop-opacity=".669"/><stop offset=".8398" stop-opacity=".8"/><stop offset=".8598" stop-opacity=".737"/><stop offset=".8798" stop-opacity=".642"/><stop offset=".8998" stop-opacity=".535"/><stop offset=".9199" stop-opacity=".42"/><stop offset=".9399" stop-opacity=".301"/><stop offset=".9599" stop-opacity=".184"/><stop offset=".9800" stop-opacity=".08"/><stop offset="1.0000" stop-color="#fff" stop-opacity="0"/></radialGradient><radialGradient id="w102" gradientUnits="userSpaceOnUse" cx="184.5" cy="262.5" r="162.25"><stop offset=".6795" stop-color="#fff" stop-opacity="0"/><stop offset=".6995" stop-color="#fff" stop-opacity=".17"/><stop offset=".7196" stop-color="#fff" stop-opacity=".343"/><stop offset=".7396" stop-color="#fff" stop-opacity=".487"/><stop offset=".7596" stop-color="#fff" stop-opacity=".592"/><stop offset=".7797" stop-color="#fff" stop-opacity=".657"/><stop offset=".7997" stop-color="#fff" stop-opacity=".689"/><stop offset=".8197" stop-color="#fff" stop-opacity=".697"/><stop offset=".8398" stop-color="#fff" stop-opacity=".687"/><stop offset=".8398" stop-opacity=".8"/><stop offset=".8598" stop-opacity=".744"/><stop offset=".8798" stop-opacity=".648"/><stop offset=".8998" stop-opacity=".541"/><stop offset=".9199" stop-opacity=".425"/><stop offset=".9399" stop-opacity=".304"/><stop offset=".9599" stop-opacity=".187"/><stop offset=".9800" stop-opacity=".081"/><stop offset="1.0000" stop-color="#fff" stop-opacity="0"/></radialGradient><radialGradient id="w103" gradientUnits="userSpaceOnUse" cx="184.5" cy="262.5" r="162.25"><stop offset=".6795" stop-color="#fff" stop-opacity="0"/><stop offset=".6995" stop-color="#fff" stop-opacity=".172"/><stop offset=".7196" stop-color="#fff" stop-opacity=".348"/><stop offset=".7396" stop-color="#fff" stop-opacity=".495"/><stop offset=".7596" stop-color="#fff" stop-opacity=".601"/><stop offset=".7797" stop-color="#fff" stop-opacity=".669"/><stop offset=".7997" stop-color="#fff" stop-opacity=".703"/><stop offset=".8197" stop-color="#fff" stop-opacity=".711"/><stop offset=".8398" stop-color="#fff" stop-opacity=".703"/><stop offset=".8398" stop-opacity=".8"/><stop offset=".8598" stop-opacity=".75"/><stop offset=".8798" stop-opacity=".654"/><stop offset=".8998" stop-opacity=".546"/><stop offset=".9199" stop-opacity=".429"/><stop offset=".9399" stop-opacity=".307"/><stop offset=".9599" stop-opacity=".189"/><stop offset=".9800" stop-opacity=".082"/><stop offset="1.0000" stop-color="#fff" stop-opacity="0"/></radialGradient><radialGradient id="w104" gradientUnits="userSpaceOnUse" cx="184.5" cy="262.5" r="162.25"><stop offset=".6795" stop-color="#fff" stop-opacity="0"/><stop offset=".6995" stop-color="#fff" stop-opacity=".174"/><stop offset=".7196" stop-color="#fff" stop-opacity=".352"/><stop offset=".7396" stop-color="#fff" stop-opacity=".501"/><stop offset=".7596" stop-color="#fff" stop-opacity=".61"/><stop offset=".7797" stop-color="#fff" stop-opacity=".679"/><stop offset=".7997" stop-color="#fff" stop-opacity=".715"/><stop offset=".8197" stop-color="#fff" stop-opacity=".725"/><stop offset=".8398" stop-color="#fff" stop-opacity=".717"/><stop offset=".8398" stop-opacity=".8"/><stop offset=".8598" stop-opacity=".756"/><stop offset=".8798" stop-opacity=".659"/><stop offset=".8998" stop-opacity=".55"/><stop offset=".9199" stop-opacity=".432"/><stop offset=".9399" stop-opacity=".31"/><stop offset=".9599" stop-opacity=".19"/><stop offset=".9800" stop-opacity=".083"/><stop offset="1.0000" stop-color="#fff" stop-opacity="0"/></radialGradient><radialGradient id="w105" gradientUnits="userSpaceOnUse" cx="184.5" cy="262.5" r="162.25"><stop offset=".6795" stop-color="#fff" stop-opacity="0"/><stop offset=".6995" stop-color="#fff" stop-opacity=".175"/><stop offset=".7196" stop-color="#fff" stop-opacity=".356"/><stop offset=".7396" stop-color="#fff" stop-opacity=".507"/><stop offset=".7596" stop-color="#fff" stop-opacity=".618"/><stop offset=".7797" stop-color="#fff" stop-opacity=".688"/><stop offset=".7997" stop-color="#fff" stop-opacity=".725"/><stop offset=".8197" stop-color="#fff" stop-opacity=".736"/><stop offset=".8398" stop-color="#fff" stop-opacity=".73"/><stop offset=".8398" stop-opacity=".8"/><stop offset=".8598" stop-opacity=".761"/><stop offset=".8798" stop-opacity=".663"/><stop offset=".8998" stop-opacity=".554"/><stop offset=".9199" stop-opacity=".436"/><stop offset=".9399" stop-opacity=".312"/><stop offset=".9599" stop-opacity=".192"/><stop offset=".9800" stop-opacity=".083"/><stop offset="1.0000" stop-color="#fff" stop-opacity="0"/></radialGradient><radialGradient id="w106" gradientUnits="userSpaceOnUse" cx="184.5" cy="262.5" r="162.25"><stop offset=".6795" stop-color="#fff" stop-opacity="0"/><stop offset=".6995" stop-color="#fff" stop-opacity=".177"/><stop offset=".7196" stop-color="#fff" stop-opacity=".359"/><stop offset=".7396" stop-color="#fff" stop-opacity=".512"/><stop offset=".7596" stop-color="#fff" stop-opacity=".624"/><stop offset=".7797" stop-color="#fff" stop-opacity=".696"/><stop offset=".7997" stop-color="#fff" stop-opacity=".734"/><stop offset=".8197" stop-color="#fff" stop-opacity=".747"/><stop offset=".8398" stop-color="#fff" stop-opacity=".741"/><stop offset=".8398" stop-opacity=".8"/><stop offset=".8598" stop-opacity=".765"/><stop offset=".8798" stop-opacity=".667"/><stop offset=".8998" stop-opacity=".558"/><stop offset=".9199" stop-opacity=".438"/><stop offset=".9399" stop-opacity=".315"/><stop offset=".9599" stop-opacity=".193"/><stop offset=".9800" stop-opacity=".084"/><stop offset="1.0000" stop-color="#fff" stop-opacity="0"/></radialGradient><radialGradient id="w107" gradientUnits="userSpaceOnUse" cx="184.5" cy="262.5" r="162.25"><stop offset=".6795" stop-color="#fff" stop-opacity="0"/><stop offset=".6995" stop-color="#fff" stop-opacity=".178"/><stop offset=".7196" stop-color="#fff" stop-opacity=".362"/><stop offset=".7396" stop-color="#fff" stop-opacity=".516"/><stop offset=".7596" stop-color="#fff" stop-opacity=".63"/><stop offset=".7797" stop-color="#fff" stop-opacity=".703"/><stop offset=".7997" stop-color="#fff" stop-opacity=".742"/><stop offset=".8197" stop-color="#fff" stop-opacity=".755"/><stop offset=".8398" stop-color="#fff" stop-opacity=".75"/><stop offset=".8398" stop-opacity=".8"/><stop offset=".8598" stop-opacity=".769"/><stop offset=".8798" stop-opacity=".671"/><stop offset=".8998" stop-opacity=".56"/><stop offset=".9199" stop-opacity=".441"/><stop offset=".9399" stop-opacity=".316"/><stop offset=".9599" stop-opacity=".195"/><stop offset=".9800" stop-opacity=".084"/><stop offset="1.0000" stop-color="#fff" stop-opacity="0"/></radialGradient><radialGradient id="w108" gradientUnits="userSpaceOnUse" cx="184.5" cy="262.5" r="162.25"><stop offset=".6795" stop-color="#fff" stop-opacity="0"/><stop offset=".6995" stop-color="#fff" stop-opacity=".179"/><stop offset=".7196" stop-color="#fff" stop-opacity=".364"/><stop offset=".7396" stop-color="#fff" stop-opacity=".52"/><stop offset=".7596" stop-color="#fff" stop-opacity=".634"/><stop offset=".7797" stop-color="#fff" stop-opacity=".709"/><stop offset=".7997" stop-color="#fff" stop-opacity=".749"/><stop offset=".8197" stop-color="#fff" stop-opacity=".762"/><stop offset=".8398" stop-color="#fff" stop-opacity=".758"/><stop offset=".8398" stop-opacity=".8"/><stop offset=".8598" stop-opacity=".772"/><stop offset=".8798" stop-opacity=".673"/><stop offset=".8998" stop-opacity=".563"/><stop offset=".9199" stop-opacity=".443"/><stop offset=".9399" stop-opacity=".318"/><stop offset=".9599" stop-opacity=".196"/><stop offset=".9800" stop-opacity=".085"/><stop offset="1.0000" stop-color="#fff" stop-opacity="0"/></radialGradient><radialGradient id="w109" gradientUnits="userSpaceOnUse" cx="184.5" cy="262.5" r="162.25"><stop offset=".6795" stop-color="#fff" stop-opacity="0"/><stop offset=".6995" stop-color="#fff" stop-opacity=".18"/><stop offset=".7196" stop-color="#fff" stop-opacity=".366"/><stop offset=".7396" stop-color="#fff" stop-opacity=".522"/><stop offset=".7596" stop-color="#fff" stop-opacity=".638"/><stop offset=".7797" stop-color="#fff" stop-opacity=".713"/><stop offset=".7997" stop-color="#fff" stop-opacity=".754"/><stop offset=".8197" stop-color="#fff" stop-opacity=".768"/><stop offset=".8398" stop-color="#fff" stop-opacity=".764"/><stop offset=".8398" stop-opacity=".8"/><stop offset=".8598" stop-opacity=".774"/><stop offset=".8798" stop-opacity=".675"/><stop offset=".8998" stop-opacity=".565"/><stop offset=".9199" stop-opacity=".444"/><stop offset=".9399" stop-opacity=".319"/><stop offset=".9599" stop-opacity=".196"/><stop offset=".9800" stop-opacity=".085"/><stop offset="1.0000" stop-color="#fff" stop-opacity="0"/></radialGradient><radialGradient id="w110" gradientUnits="userSpaceOnUse" cx="184.5" cy="262.5" r="162.25"><stop offset=".6795" stop-color="#fff" stop-opacity="0"/><stop offset=".6995" stop-color="#fff" stop-opacity=".181"/><stop offset=".7196" stop-color="#fff" stop-opacity=".368"/><stop offset=".7396" stop-color="#fff" stop-opacity=".524"/><stop offset=".7596" stop-color="#fff" stop-opacity=".641"/><stop offset=".7797" stop-color="#fff" stop-opacity=".716"/><stop offset=".7997" stop-color="#fff" stop-opacity=".757"/><stop offset=".8197" stop-color="#fff" stop-opacity=".772"/><stop offset=".8398" stop-color="#fff" stop-opacity=".768"/><stop offset=".8398" stop-opacity=".8"/><stop offset=".8598" stop-opacity=".776"/><stop offset=".8798" stop-opacity=".677"/><stop offset=".8998" stop-opacity=".566"/><stop offset=".9199" stop-opacity=".445"/><stop offset=".9399" stop-opacity=".32"/><stop offset=".9599" stop-opacity=".197"/><stop offset=".9800" stop-opacity=".086"/><stop offset="1.0000" stop-color="#fff" stop-opacity="0"/></radialGradient><radialGradient id="w111" gradientUnits="userSpaceOnUse" cx="184.5" cy="262.5" r="162.25"><stop offset=".6795" stop-color="#fff" stop-opacity="0"/><stop offset=".6995" stop-color="#fff" stop-opacity=".181"/><stop offset=".7196" stop-color="#fff" stop-opacity=".368"/><stop offset=".7396" stop-color="#fff" stop-opacity=".526"/><stop offset=".7596" stop-color="#fff" stop-opacity=".642"/><stop offset=".7797" stop-color="#fff" stop-opacity=".718"/><stop offset=".7997" stop-color="#fff" stop-opacity=".759"/><stop offset=".8197" stop-color="#fff" stop-opacity=".774"/><stop offset=".8398" stop-color="#fff" stop-opacity=".77"/><stop offset=".8398" stop-opacity=".8"/><stop offset=".8598" stop-opacity=".777"/><stop offset=".8798" stop-opacity=".678"/><stop offset=".8998" stop-opacity=".567"/><stop offset=".9199" stop-opacity=".446"/><stop offset=".9399" stop-opacity=".32"/><stop offset=".9599" stop-opacity=".197"/><stop offset=".9800" stop-opacity=".086"/><stop offset="1.0000" stop-color="#fff" stop-opacity="0"/></radialGradient><radialGradient id="w112" gradientUnits="userSpaceOnUse" cx="184.5" cy="262.5" r="162.25"><stop offset=".6795" stop-color="#fff" stop-opacity="0"/><stop offset=".6995" stop-color="#fff" stop-opacity=".181"/><stop offset=".7196" stop-color="#fff" stop-opacity=".369"/><stop offset=".7396" stop-color="#fff" stop-opacity=".526"/><stop offset=".7596" stop-color="#fff" stop-opacity=".643"/><stop offset=".7797" stop-color="#fff" stop-opacity=".719"/><stop offset=".7997" stop-color="#fff" stop-opacity=".76"/><stop offset=".8197" stop-color="#fff" stop-opacity=".775"/><stop offset=".8398" stop-color="#fff" stop-opacity=".771"/><stop offset=".8398" stop-opacity=".8"/><stop offset=".8598" stop-opacity=".777"/><stop offset=".8798" stop-opacity=".678"/><stop offset=".8998" stop-opacity=".567"/><stop offset=".9199" stop-opacity=".446"/><stop offset=".9399" stop-opacity=".321"/><stop offset=".9599" stop-opacity=".197"/><stop offset=".9800" stop-opacity=".086"/><stop offset="1.0000" stop-color="#fff" stop-opacity="0"/></radialGradient><radialGradient id="w113" gradientUnits="userSpaceOnUse" cx="184.5" cy="262.5" r="162.25"><stop offset=".6795" stop-color="#fff" stop-opacity="0"/><stop offset=".6995" stop-color="#fff" stop-opacity=".181"/><stop offset=".7196" stop-color="#fff" stop-opacity=".368"/><stop offset=".7396" stop-color="#fff" stop-opacity=".526"/><stop offset=".7596" stop-color="#fff" stop-opacity=".642"/><stop offset=".7797" stop-color="#fff" stop-opacity=".718"/><stop offset=".7997" stop-color="#fff" stop-opacity=".759"/><stop offset=".8197" stop-color="#fff" stop-opacity=".774"/><stop offset=".8398" stop-color="#fff" stop-opacity=".77"/><stop offset=".8398" stop-opacity=".8"/><stop offset=".8598" stop-opacity=".777"/><stop offset=".8798" stop-opacity=".678"/><stop offset=".8998" stop-opacity=".567"/><stop offset=".9199" stop-opacity=".446"/><stop offset=".9399" stop-opacity=".32"/><stop offset=".9599" stop-opacity=".197"/><stop offset=".9800" stop-opacity=".086"/><stop offset="1.0000" stop-color="#fff" stop-opacity="0"/></radialGradient><radialGradient id="w114" gradientUnits="userSpaceOnUse" cx="184.5" cy="262.5" r="162.25"><stop offset=".6795" stop-color="#fff" stop-opacity="0"/><stop offset=".6995" stop-color="#fff" stop-opacity=".181"/><stop offset=".7196" stop-color="#fff" stop-opacity=".368"/><stop offset=".7396" stop-color="#fff" stop-opacity=".524"/><stop offset=".7596" stop-color="#fff" stop-opacity=".641"/><stop offset=".7797" stop-color="#fff" stop-opacity=".716"/><stop offset=".7997" stop-color="#fff" stop-opacity=".757"/><stop offset=".8197" stop-color="#fff" stop-opacity=".772"/><stop offset=".8398" stop-color="#fff" stop-opacity=".768"/><stop offset=".8398" stop-opacity=".8"/><stop offset=".8598" stop-opacity=".776"/><stop offset=".8798" stop-opacity=".677"/><stop offset=".8998" stop-opacity=".566"/><stop offset=".9199" stop-opacity=".445"/><stop offset=".9399" stop-opacity=".32"/><stop offset=".9599" stop-opacity=".197"/><stop offset=".9800" stop-opacity=".086"/><stop offset="1.0000" stop-color="#fff" stop-opacity="0"/></radialGradient><radialGradient id="w115" gradientUnits="userSpaceOnUse" cx="184.5" cy="262.5" r="162.25"><stop offset=".6795" stop-color="#fff" stop-opacity="0"/><stop offset=".6995" stop-color="#fff" stop-opacity=".18"/><stop offset=".7196" stop-color="#fff" stop-opacity=".366"/><stop offset=".7396" stop-color="#fff" stop-opacity=".522"/><stop offset=".7596" stop-color="#fff" stop-opacity=".638"/><stop offset=".7797" stop-color="#fff" stop-opacity=".713"/><stop offset=".7997" stop-color="#fff" stop-opacity=".754"/><stop offset=".8197" stop-color="#fff" stop-opacity=".768"/><stop offset=".8398" stop-color="#fff" stop-opacity=".764"/><stop offset=".8398" stop-opacity=".8"/><stop offset=".8598" stop-opacity=".774"/><stop offset=".8798" stop-opacity=".675"/><stop offset=".8998" stop-opacity=".565"/><stop offset=".9199" stop-opacity=".444"/><stop offset=".9399" stop-opacity=".319"/><stop offset=".9599" stop-opacity=".196"/><stop offset=".9800" stop-opacity=".085"/><stop offset="1.0000" stop-color="#fff" stop-opacity="0"/></radialGradient><radialGradient id="w116" gradientUnits="userSpaceOnUse" cx="184.5" cy="262.5" r="162.25"><stop offset=".6795" stop-color="#fff" stop-opacity="0"/><stop offset=".6995" stop-color="#fff" stop-opacity=".179"/><stop offset=".7196" stop-color="#fff" stop-opacity=".364"/><stop offset=".7396" stop-color="#fff" stop-opacity=".52"/><stop offset=".7596" stop-color="#fff" stop-opacity=".634"/><stop offset=".7797" stop-color="#fff" stop-opacity=".709"/><stop offset=".7997" stop-color="#fff" stop-opacity=".749"/><stop offset=".8197" stop-color="#fff" stop-opacity=".762"/><stop offset=".8398" stop-color="#fff" stop-opacity=".758"/><stop offset=".8398" stop-opacity=".8"/><stop offset=".8598" stop-opacity=".772"/><stop offset=".8798" stop-opacity=".673"/><stop offset=".8998" stop-opacity=".563"/><stop offset=".9199" stop-opacity=".443"/><stop offset=".9399" stop-opacity=".318"/><stop offset=".9599" stop-opacity=".196"/><stop offset=".9800" stop-opacity=".085"/><stop offset="1.0000" stop-color="#fff" stop-opacity="0"/></radialGradient><radialGradient id="w117" gradientUnits="userSpaceOnUse" cx="184.5" cy="262.5" r="162.25"><stop offset=".6795" stop-color="#fff" stop-opacity="0"/><stop offset=".6995" stop-color="#fff" stop-opacity=".178"/><stop offset=".7196" stop-color="#fff" stop-opacity=".362"/><stop offset=".7396" stop-color="#fff" stop-opacity=".516"/><stop offset=".7596" stop-color="#fff" stop-opacity=".63"/><stop offset=".7797" stop-color="#fff" stop-opacity=".703"/><stop offset=".7997" stop-color="#fff" stop-opacity=".742"/><stop offset=".8197" stop-color="#fff" stop-opacity=".755"/><stop offset=".8398" stop-color="#fff" stop-opacity=".75"/><stop offset=".8398" stop-opacity=".8"/><stop offset=".8598" stop-opacity=".769"/><stop offset=".8798" stop-opacity=".671"/><stop offset=".8998" stop-opacity=".56"/><stop offset=".9199" stop-opacity=".441"/><stop offset=".9399" stop-opacity=".316"/><stop offset=".9599" stop-opacity=".195"/><stop offset=".9800" stop-opacity=".084"/><stop offset="1.0000" stop-color="#fff" stop-opacity="0"/></radialGradient><radialGradient id="w118" gradientUnits="userSpaceOnUse" cx="184.5" cy="262.5" r="162.25"><stop offset=".6795" stop-color="#fff" stop-opacity="0"/><stop offset=".6995" stop-color="#fff" stop-opacity=".177"/><stop offset=".7196" stop-color="#fff" stop-opacity=".359"/><stop offset=".7396" stop-color="#fff" stop-opacity=".512"/><stop offset=".7596" stop-color="#fff" stop-opacity=".624"/><stop offset=".7797" stop-color="#fff" stop-opacity=".696"/><stop offset=".7997" stop-color="#fff" stop-opacity=".734"/><stop offset=".8197" stop-color="#fff" stop-opacity=".747"/><stop offset=".8398" stop-color="#fff" stop-opacity=".741"/><stop offset=".8398" stop-opacity=".8"/><stop offset=".8598" stop-opacity=".765"/><stop offset=".8798" stop-opacity=".667"/><stop offset=".8998" stop-opacity=".558"/><stop offset=".9199" stop-opacity=".438"/><stop offset=".9399" stop-opacity=".315"/><stop offset=".9599" stop-opacity=".193"/><stop offset=".9800" stop-opacity=".084"/><stop offset="1.0000" stop-color="#fff" stop-opacity="0"/></radialGradient><radialGradient id="w119" gradientUnits="userSpaceOnUse" cx="184.5" cy="262.5" r="162.25"><stop offset=".6795" stop-color="#fff" stop-opacity="0"/><stop offset=".6995" stop-color="#fff" stop-opacity=".175"/><stop offset=".7196" stop-color="#fff" stop-opacity=".356"/><stop offset=".7396" stop-color="#fff" stop-opacity=".507"/><stop offset=".7596" stop-color="#fff" stop-opacity=".618"/><stop offset=".7797" stop-color="#fff" stop-opacity=".688"/><stop offset=".7997" stop-color="#fff" stop-opacity=".725"/><stop offset=".8197" stop-color="#fff" stop-opacity=".736"/><stop offset=".8398" stop-color="#fff" stop-opacity=".73"/><stop offset=".8398" stop-opacity=".8"/><stop offset=".8598" stop-opacity=".761"/><stop offset=".8798" stop-opacity=".663"/><stop offset=".8998" stop-opacity=".554"/><stop offset=".9199" stop-opacity=".436"/><stop offset=".9399" stop-opacity=".312"/><stop offset=".9599" stop-opacity=".192"/><stop offset=".9800" stop-opacity=".083"/><stop offset="1.0000" stop-color="#fff" stop-opacity="0"/></radialGradient><radialGradient id="w120" gradientUnits="userSpaceOnUse" cx="184.5" cy="262.5" r="162.25"><stop offset=".6795" stop-color="#fff" stop-opacity="0"/><stop offset=".6995" stop-color="#fff" stop-opacity=".174"/><stop offset=".7196" stop-color="#fff" stop-opacity=".352"/><stop offset=".7396" stop-color="#fff" stop-opacity=".501"/><stop offset=".7596" stop-color="#fff" stop-opacity=".61"/><stop offset=".7797" stop-color="#fff" stop-opacity=".679"/><stop offset=".7997" stop-color="#fff" stop-opacity=".715"/><stop offset=".8197" stop-color="#fff" stop-opacity=".725"/><stop offset=".8398" stop-color="#fff" stop-opacity=".717"/><stop offset=".8398" stop-opacity=".8"/><stop offset=".8598" stop-opacity=".756"/><stop offset=".8798" stop-opacity=".659"/><stop offset=".8998" stop-opacity=".55"/><stop offset=".9199" stop-opacity=".432"/><stop offset=".9399" stop-opacity=".31"/><stop offset=".9599" stop-opacity=".19"/><stop offset=".9800" stop-opacity=".083"/><stop offset="1.0000" stop-color="#fff" stop-opacity="0"/></radialGradient><radialGradient id="w121" gradientUnits="userSpaceOnUse" cx="184.5" cy="262.5" r="162.25"><stop offset=".6795" stop-color="#fff" stop-opacity="0"/><stop offset=".6995" stop-color="#fff" stop-opacity=".172"/><stop offset=".7196" stop-color="#fff" stop-opacity=".348"/><stop offset=".7396" stop-color="#fff" stop-opacity=".495"/><stop offset=".7596" stop-color="#fff" stop-opacity=".601"/><stop offset=".7797" stop-color="#fff" stop-opacity=".669"/><stop offset=".7997" stop-color="#fff" stop-opacity=".703"/><stop offset=".8197" stop-color="#fff" stop-opacity=".711"/><stop offset=".8398" stop-color="#fff" stop-opacity=".703"/><stop offset=".8398" stop-opacity=".8"/><stop offset=".8598" stop-opacity=".75"/><stop offset=".8798" stop-opacity=".654"/><stop offset=".8998" stop-opacity=".546"/><stop offset=".9199" stop-opacity=".429"/><stop offset=".9399" stop-opacity=".307"/><stop offset=".9599" stop-opacity=".189"/><stop offset=".9800" stop-opacity=".082"/><stop offset="1.0000" stop-color="#fff" stop-opacity="0"/></radialGradient><radialGradient id="w122" gradientUnits="userSpaceOnUse" cx="184.5" cy="262.5" r="162.25"><stop offset=".6795" stop-color="#fff" stop-opacity="0"/><stop offset=".6995" stop-color="#fff" stop-opacity=".17"/><stop offset=".7196" stop-color="#fff" stop-opacity=".343"/><stop offset=".7396" stop-color="#fff" stop-opacity=".487"/><stop offset=".7596" stop-color="#fff" stop-opacity=".592"/><stop offset=".7797" stop-color="#fff" stop-opacity=".657"/><stop offset=".7997" stop-color="#fff" stop-opacity=".689"/><stop offset=".8197" stop-color="#fff" stop-opacity=".697"/><stop offset=".8398" stop-color="#fff" stop-opacity=".687"/><stop offset=".8398" stop-opacity=".8"/><stop offset=".8598" stop-opacity=".744"/><stop offset=".8798" stop-opacity=".648"/><stop offset=".8998" stop-opacity=".541"/><stop offset=".9199" stop-opacity=".425"/><stop offset=".9399" stop-opacity=".304"/><stop offset=".9599" stop-opacity=".187"/><stop offset=".9800" stop-opacity=".081"/><stop offset="1.0000" stop-color="#fff" stop-opacity="0"/></radialGradient><radialGradient id="w123" gradientUnits="userSpaceOnUse" cx="184.5" cy="262.5" r="162.25"><stop offset=".6795" stop-color="#fff" stop-opacity="0"/><stop offset=".6995" stop-color="#fff" stop-opacity=".167"/><stop offset=".7196" stop-color="#fff" stop-opacity=".338"/><stop offset=".7396" stop-color="#fff" stop-opacity=".479"/><stop offset=".7596" stop-color="#fff" stop-opacity=".581"/><stop offset=".7797" stop-color="#fff" stop-opacity=".644"/><stop offset=".7997" stop-color="#fff" stop-opacity=".675"/><stop offset=".8197" stop-color="#fff" stop-opacity=".68"/><stop offset=".8398" stop-color="#fff" stop-opacity=".669"/><stop offset=".8398" stop-opacity=".8"/><stop offset=".8598" stop-opacity=".737"/><stop offset=".8798" stop-opacity=".642"/><stop offset=".8998" stop-opacity=".535"/><stop offset=".9199" stop-opacity=".42"/><stop offset=".9399" stop-opacity=".301"/><stop offset=".9599" stop-opacity=".184"/><stop offset=".9800" stop-opacity=".08"/><stop offset="1.0000" stop-color="#fff" stop-opacity="0"/></radialGradient><radialGradient id="w124" gradientUnits="userSpaceOnUse" cx="184.5" cy="262.5" r="162.25"><stop offset=".6795" stop-color="#fff" stop-opacity="0"/><stop offset=".6995" stop-color="#fff" stop-opacity=".165"/><stop offset=".7196" stop-color="#fff" stop-opacity=".333"/><stop offset=".7396" stop-color="#fff" stop-opacity=".471"/><stop offset=".7596" stop-color="#fff" stop-opacity=".57"/><stop offset=".7797" stop-color="#fff" stop-opacity=".63"/><stop offset=".7997" stop-color="#fff" stop-opacity=".659"/><stop offset=".8197" stop-color="#fff" stop-opacity=".663"/><stop offset=".8398" stop-color="#fff" stop-opacity=".65"/><stop offset=".8398" stop-opacity=".8"/><stop offset=".8598" stop-opacity=".729"/><stop offset=".8798" stop-opacity=".635"/><stop offset=".8998" stop-opacity=".529"/><stop offset=".9199" stop-opacity=".415"/><stop offset=".9399" stop-opacity=".297"/><stop offset=".9599" stop-opacity=".182"/><stop offset=".9800" stop-opacity=".079"/><stop offset="1.0000" stop-color="#fff" stop-opacity="0"/></radialGradient><radialGradient id="w125" gradientUnits="userSpaceOnUse" cx="184.5" cy="262.5" r="162.25"><stop offset=".6795" stop-color="#fff" stop-opacity="0"/><stop offset=".6995" stop-color="#fff" stop-opacity=".162"/><stop offset=".7196" stop-color="#fff" stop-opacity=".327"/><stop offset=".7396" stop-color="#fff" stop-opacity=".461"/><stop offset=".7596" stop-color="#fff" stop-opacity=".557"/><stop offset=".7797" stop-color="#fff" stop-opacity=".615"/><stop offset=".7997" stop-color="#fff" stop-opacity=".641"/><stop offset=".8197" stop-color="#fff" stop-opacity=".644"/><stop offset=".8398" stop-color="#fff" stop-opacity=".63"/><stop offset=".8398" stop-opacity=".8"/><stop offset=".8598" stop-opacity=".721"/><stop offset=".8798" stop-opacity=".627"/><stop offset=".8998" stop-opacity=".523"/><stop offset=".9199" stop-opacity=".41"/><stop offset=".9399" stop-opacity=".293"/><stop offset=".9599" stop-opacity=".179"/><stop offset=".9800" stop-opacity=".077"/><stop offset="1.0000" stop-color="#fff" stop-opacity="0"/></radialGradient><radialGradient id="w126" gradientUnits="userSpaceOnUse" cx="184.5" cy="262.5" r="162.25"><stop offset=".6795" stop-color="#fff" stop-opacity="0"/><stop offset=".6995" stop-color="#fff" stop-opacity=".159"/><stop offset=".7196" stop-color="#fff" stop-opacity=".32"/><stop offset=".7396" stop-color="#fff" stop-opacity=".451"/><stop offset=".7596" stop-color="#fff" stop-opacity=".544"/><stop offset=".7797" stop-color="#fff" stop-opacity=".599"/><stop offset=".7997" stop-color="#fff" stop-opacity=".623"/><stop offset=".8197" stop-color="#fff" stop-opacity=".623"/><stop offset=".8398" stop-color="#fff" stop-opacity=".608"/><stop offset=".8398" stop-opacity=".794"/><stop offset=".8598" stop-opacity=".712"/><stop offset=".8798" stop-opacity=".619"/><stop offset=".8998" stop-opacity=".516"/><stop offset=".9199" stop-opacity=".404"/><stop offset=".9399" stop-opacity=".289"/><stop offset=".9599" stop-opacity=".177"/><stop offset=".9800" stop-opacity=".076"/><stop offset="1.0000" stop-color="#fff" stop-opacity="0"/></radialGradient><radialGradient id="w127" gradientUnits="userSpaceOnUse" cx="184.5" cy="262.5" r="162.25"><stop offset=".6795" stop-color="#fff" stop-opacity="0"/><stop offset=".6995" stop-color="#fff" stop-opacity=".156"/><stop offset=".7196" stop-color="#fff" stop-opacity=".313"/><stop offset=".7396" stop-color="#fff" stop-opacity=".44"/><stop offset=".7596" stop-color="#fff" stop-opacity=".53"/><stop offset=".7797" stop-color="#fff" stop-opacity=".582"/><stop offset=".7997" stop-color="#fff" stop-opacity=".603"/><stop offset=".8197" stop-color="#fff" stop-opacity=".601"/><stop offset=".8398" stop-color="#fff" stop-opacity=".584"/><stop offset=".8398" stop-opacity=".784"/><stop offset=".8598" stop-opacity=".703"/><stop offset=".8798" stop-opacity=".611"/><stop offset=".8998" stop-opacity=".509"/><stop offset=".9199" stop-opacity=".398"/><stop offset=".9399" stop-opacity=".284"/><stop offset=".9599" stop-opacity=".174"/><stop offset=".9800" stop-opacity=".075"/><stop offset="1.0000" stop-color="#fff" stop-opacity="0"/></radialGradient><radialGradient id="w128" gradientUnits="userSpaceOnUse" cx="184.5" cy="262.5" r="162.25"><stop offset=".6795" stop-color="#fff" stop-opacity="0"/><stop offset=".6995" stop-color="#fff" stop-opacity=".152"/><stop offset=".7196" stop-color="#fff" stop-opacity=".305"/><stop offset=".7396" stop-color="#fff" stop-opacity=".429"/><stop offset=".7596" stop-color="#fff" stop-opacity=".515"/><stop offset=".7797" stop-color="#fff" stop-opacity=".563"/><stop offset=".7997" stop-color="#fff" stop-opacity=".582"/><stop offset=".8197" stop-color="#fff" stop-opacity=".578"/><stop offset=".8398" stop-color="#fff" stop-opacity=".559"/><stop offset=".8398" stop-opacity=".773"/><stop offset=".8598" stop-opacity=".693"/><stop offset=".8798" stop-opacity=".602"/><stop offset=".8998" stop-opacity=".501"/><stop offset=".9199" stop-opacity=".391"/><stop offset=".9399" stop-opacity=".279"/><stop offset=".9599" stop-opacity=".17"/><stop offset=".9800" stop-opacity=".073"/><stop offset="1.0000" stop-color="#fff" stop-opacity="0"/></radialGradient><radialGradient id="w129" gradientUnits="userSpaceOnUse" cx="184.5" cy="262.5" r="162.25"><stop offset=".6795" stop-color="#fff" stop-opacity="0"/><stop offset=".6995" stop-color="#fff" stop-opacity=".148"/><stop offset=".7196" stop-color="#fff" stop-opacity=".298"/><stop offset=".7396" stop-color="#fff" stop-opacity=".417"/><stop offset=".7596" stop-color="#fff" stop-opacity=".498"/><stop offset=".7797" stop-color="#fff" stop-opacity=".544"/><stop offset=".7997" stop-color="#fff" stop-opacity=".559"/><stop offset=".8197" stop-color="#fff" stop-opacity=".553"/><stop offset=".8398" stop-color="#fff" stop-opacity=".532"/><stop offset=".8398" stop-opacity=".762"/><stop offset=".8598" stop-opacity=".683"/><stop offset=".8798" stop-opacity=".592"/><stop offset=".8998" stop-opacity=".492"/><stop offset=".9199" stop-opacity=".385"/><stop offset=".9399" stop-opacity=".274"/><stop offset=".9599" stop-opacity=".167"/><stop offset=".9800" stop-opacity=".072"/><stop offset="1.0000" stop-color="#fff" stop-opacity="0"/></radialGradient><radialGradient id="w130" gradientUnits="userSpaceOnUse" cx="184.5" cy="262.5" r="162.25"><stop offset=".6795" stop-color="#fff" stop-opacity="0"/><stop offset=".6995" stop-color="#fff" stop-opacity=".145"/><stop offset=".7196" stop-color="#fff" stop-opacity=".289"/><stop offset=".7396" stop-color="#fff" stop-opacity=".404"/><stop offset=".7596" stop-color="#fff" stop-opacity=".482"/><stop offset=".7797" stop-color="#fff" stop-opacity=".523"/><stop offset=".7997" stop-color="#fff" stop-opacity=".536"/><stop offset=".8197" stop-color="#fff" stop-opacity=".527"/><stop offset=".8398" stop-color="#fff" stop-opacity=".504"/><stop offset=".8398" stop-opacity=".75"/><stop offset=".8598" stop-opacity=".671"/><stop offset=".8798" stop-opacity=".582"/><stop offset=".8998" stop-opacity=".484"/><stop offset=".9199" stop-opacity=".377"/><stop offset=".9399" stop-opacity=".268"/><stop offset=".9599" stop-opacity=".163"/><stop offset=".9800" stop-opacity=".07"/><stop offset="1.0000" stop-color="#fff" stop-opacity="0"/></radialGradient><radialGradient id="w131" gradientUnits="userSpaceOnUse" cx="184.5" cy="262.5" r="162.25"><stop offset=".6795" stop-color="#fff" stop-opacity="0"/><stop offset=".6995" stop-color="#fff" stop-opacity=".141"/><stop offset=".7196" stop-color="#fff" stop-opacity=".281"/><stop offset=".7396" stop-color="#fff" stop-opacity=".391"/><stop offset=".7596" stop-color="#fff" stop-opacity=".464"/><stop offset=".7797" stop-color="#fff" stop-opacity=".502"/><stop offset=".7997" stop-color="#fff" stop-opacity=".511"/><stop offset=".8197" stop-color="#fff" stop-opacity=".5"/><stop offset=".8398" stop-color="#fff" stop-opacity=".475"/><stop offset=".8398" stop-opacity=".737"/><stop offset=".8598" stop-opacity=".66"/><stop offset=".8798" stop-opacity=".572"/><stop offset=".8998" stop-opacity=".474"/><stop offset=".9199" stop-opacity=".37"/><stop offset=".9399" stop-opacity=".263"/><stop offset=".9599" stop-opacity=".16"/><stop offset=".9800" stop-opacity=".068"/><stop offset="1.0000" stop-color="#fff" stop-opacity="0"/></radialGradient><radialGradient id="w132" gradientUnits="userSpaceOnUse" cx="184.5" cy="262.5" r="162.25"><stop offset=".6795" stop-color="#fff" stop-opacity="0"/><stop offset=".6995" stop-color="#fff" stop-opacity=".136"/><stop offset=".7196" stop-color="#fff" stop-opacity=".271"/><stop offset=".7396" stop-color="#fff" stop-opacity=".377"/><stop offset=".7596" stop-color="#fff" stop-opacity=".445"/><stop offset=".7797" stop-color="#fff" stop-opacity=".479"/><stop offset=".7997" stop-color="#fff" stop-opacity=".485"/><stop offset=".8197" stop-color="#fff" stop-opacity=".471"/><stop offset=".8398" stop-color="#fff" stop-opacity=".444"/><stop offset=".8398" stop-opacity=".724"/><stop offset=".8598" stop-opacity=".648"/><stop offset=".8798" stop-opacity=".561"/><stop offset=".8998" stop-opacity=".465"/><stop offset=".9199" stop-opacity=".362"/><stop offset=".9399" stop-opacity=".257"/><stop offset=".9599" stop-opacity=".156"/><stop offset=".9800" stop-opacity=".067"/><stop offset="1.0000" stop-color="#fff" stop-opacity="0"/></radialGradient><radialGradient id="w133" gradientUnits="userSpaceOnUse" cx="184.5" cy="262.5" r="162.25"><stop offset=".6795" stop-color="#fff" stop-opacity="0"/><stop offset=".6995" stop-color="#fff" stop-opacity=".132"/><stop offset=".7196" stop-color="#fff" stop-opacity=".262"/><stop offset=".7396" stop-color="#fff" stop-opacity=".362"/><stop offset=".7596" stop-color="#fff" stop-opacity=".426"/><stop offset=".7797" stop-color="#fff" stop-opacity=".456"/><stop offset=".7997" stop-color="#fff" stop-opacity=".459"/><stop offset=".8197" stop-color="#fff" stop-opacity=".442"/><stop offset=".8398" stop-color="#fff" stop-opacity=".413"/><stop offset=".8398" stop-opacity=".711"/><stop offset=".8598" stop-opacity=".635"/><stop offset=".8798" stop-opacity=".549"/><stop offset=".8998" stop-opacity=".455"/><stop offset=".9199" stop-opacity=".354"/><stop offset=".9399" stop-opacity=".251"/><stop offset=".9599" stop-opacity=".152"/><stop offset=".9800" stop-opacity=".065"/><stop offset="1.0000" stop-color="#fff" stop-opacity="0"/></radialGradient><radialGradient id="w134" gradientUnits="userSpaceOnUse" cx="184.5" cy="262.5" r="162.25"><stop offset=".6795" stop-color="#fff" stop-opacity="0"/><stop offset=".6995" stop-color="#fff" stop-opacity=".128"/><stop offset=".7196" stop-color="#fff" stop-opacity=".252"/><stop offset=".7396" stop-color="#fff" stop-opacity=".347"/><stop offset=".7596" stop-color="#fff" stop-opacity=".406"/><stop offset=".7797" stop-color="#fff" stop-opacity=".432"/><stop offset=".7997" stop-color="#fff" stop-opacity=".431"/><stop offset=".8197" stop-color="#fff" stop-opacity=".411"/><stop offset=".8398" stop-color="#fff" stop-opacity=".379"/><stop offset=".8398" stop-opacity=".696"/><stop offset=".8598" stop-opacity=".622"/><stop offset=".8798" stop-opacity=".537"/><stop offset=".8998" stop-opacity=".444"/><stop offset=".9199" stop-opacity=".345"/><stop offset=".9399" stop-opacity=".244"/><stop offset=".9599" stop-opacity=".148"/><stop offset=".9800" stop-opacity=".063"/><stop offset="1.0000" stop-color="#fff" stop-opacity="0"/></radialGradient><radialGradient id="w135" gradientUnits="userSpaceOnUse" cx="184.5" cy="262.5" r="162.25"><stop offset=".6795" stop-color="#fff" stop-opacity="0"/><stop offset=".6995" stop-color="#fff" stop-opacity=".123"/><stop offset=".7196" stop-color="#fff" stop-opacity=".242"/><stop offset=".7396" stop-color="#fff" stop-opacity=".331"/><stop offset=".7596" stop-color="#fff" stop-opacity=".385"/><stop offset=".7797" stop-color="#fff" stop-opacity=".406"/><stop offset=".7997" stop-color="#fff" stop-opacity=".402"/><stop offset=".8197" stop-color="#fff" stop-opacity=".379"/><stop offset=".8398" stop-color="#fff" stop-opacity=".345"/><stop offset=".8398" stop-opacity=".682"/><stop offset=".8598" stop-opacity=".608"/><stop offset=".8798" stop-opacity=".525"/><stop offset=".8998" stop-opacity=".434"/><stop offset=".9199" stop-opacity=".336"/><stop offset=".9399" stop-opacity=".237"/><stop offset=".9599" stop-opacity=".143"/><stop offset=".9800" stop-opacity=".061"/><stop offset="1.0000" stop-color="#fff" stop-opacity="0"/></radialGradient><radialGradient id="w136" gradientUnits="userSpaceOnUse" cx="184.5" cy="262.5" r="162.25"><stop offset=".6795" stop-color="#fff" stop-opacity="0"/><stop offset=".6995" stop-color="#fff" stop-opacity=".118"/><stop offset=".7196" stop-color="#fff" stop-opacity=".231"/><stop offset=".7396" stop-color="#fff" stop-opacity=".315"/><stop offset=".7596" stop-color="#fff" stop-opacity=".364"/><stop offset=".7797" stop-color="#fff" stop-opacity=".38"/><stop offset=".7997" stop-color="#fff" stop-opacity=".372"/><stop offset=".8197" stop-color="#fff" stop-opacity=".346"/><stop offset=".8398" stop-color="#fff" stop-opacity=".309"/><stop offset=".8398" stop-opacity=".666"/><stop offset=".8598" stop-opacity=".594"/><stop offset=".8798" stop-opacity=".512"/><stop offset=".8998" stop-opacity=".422"/><stop offset=".9199" stop-opacity=".327"/><stop offset=".9399" stop-opacity=".23"/><stop offset=".9599" stop-opacity=".139"/><stop offset=".9800" stop-opacity=".059"/><stop offset="1.0000" stop-color="#fff" stop-opacity="0"/></radialGradient><radialGradient id="w137" gradientUnits="userSpaceOnUse" cx="184.5" cy="262.5" r="162.25"><stop offset=".6795" stop-color="#fff" stop-opacity="0"/><stop offset=".6995" stop-color="#fff" stop-opacity=".113"/><stop offset=".7196" stop-color="#fff" stop-opacity=".22"/><stop offset=".7396" stop-color="#fff" stop-opacity=".298"/><stop offset=".7596" stop-color="#fff" stop-opacity=".341"/><stop offset=".7797" stop-color="#fff" stop-opacity=".353"/><stop offset=".7997" stop-color="#fff" stop-opacity=".341"/><stop offset=".8197" stop-color="#fff" stop-opacity=".312"/><stop offset=".8398" stop-color="#fff" stop-opacity=".272"/><stop offset=".8398" stop-opacity=".651"/><stop offset=".8598" stop-opacity=".579"/><stop offset=".8798" stop-opacity=".499"/><stop offset=".8998" stop-opacity=".411"/><stop offset=".9199" stop-opacity=".318"/><stop offset=".9399" stop-opacity=".223"/><stop offset=".9599" stop-opacity=".134"/><stop offset=".9800" stop-opacity=".057"/><stop offset="1.0000" stop-color="#fff" stop-opacity="0"/></radialGradient><radialGradient id="w138" gradientUnits="userSpaceOnUse" cx="184.5" cy="262.5" r="162.25"><stop offset=".6795" stop-color="#fff" stop-opacity="0"/><stop offset=".6995" stop-color="#fff" stop-opacity=".108"/><stop offset=".7196" stop-color="#fff" stop-opacity=".209"/><stop offset=".7396" stop-color="#fff" stop-opacity=".281"/><stop offset=".7596" stop-color="#fff" stop-opacity=".319"/><stop offset=".7797" stop-color="#fff" stop-opacity=".326"/><stop offset=".7997" stop-color="#fff" stop-opacity=".309"/><stop offset=".8197" stop-color="#fff" stop-opacity=".276"/><stop offset=".8398" stop-color="#fff" stop-opacity=".234"/><stop offset=".8398" stop-opacity=".635"/><stop offset=".8598" stop-opacity=".564"/><stop offset=".8798" stop-opacity=".485"/><stop offset=".8998" stop-opacity=".399"/><stop offset=".9199" stop-opacity=".308"/><stop offset=".9399" stop-opacity=".216"/><stop offset=".9599" stop-opacity=".129"/><stop offset=".9800" stop-opacity=".054"/><stop offset="1.0000" stop-color="#fff" stop-opacity="0"/></radialGradient><radialGradient id="w139" gradientUnits="userSpaceOnUse" cx="184.5" cy="262.5" r="162.25"><stop offset=".6795" stop-color="#fff" stop-opacity="0"/><stop offset=".6995" stop-color="#fff" stop-opacity=".102"/><stop offset=".7196" stop-color="#fff" stop-opacity=".197"/><stop offset=".7396" stop-color="#fff" stop-opacity=".263"/><stop offset=".7596" stop-color="#fff" stop-opacity=".295"/><stop offset=".7797" stop-color="#fff" stop-opacity=".297"/><stop offset=".7997" stop-color="#fff" stop-opacity=".276"/><stop offset=".8197" stop-color="#fff" stop-opacity=".24"/><stop offset=".8398" stop-color="#fff" stop-opacity=".196"/><stop offset=".8398" stop-opacity=".618"/><stop offset=".8598" stop-opacity=".549"/><stop offset=".8798" stop-opacity=".471"/><stop offset=".8998" stop-opacity=".387"/><stop offset=".9199" stop-opacity=".298"/><stop offset=".9399" stop-opacity=".208"/><stop offset=".9599" stop-opacity=".124"/><stop offset=".9800" stop-opacity=".052"/><stop offset="1.0000" stop-color="#fff" stop-opacity="0"/></radialGradient><radialGradient id="w140" gradientUnits="userSpaceOnUse" cx="184.5" cy="262.5" r="162.25"><stop offset=".6795" stop-color="#fff" stop-opacity="0"/><stop offset=".6995" stop-color="#fff" stop-opacity=".097"/><stop offset=".7196" stop-color="#fff" stop-opacity=".186"/><stop offset=".7396" stop-color="#fff" stop-opacity=".245"/><stop offset=".7596" stop-color="#fff" stop-opacity=".271"/><stop offset=".7797" stop-color="#fff" stop-opacity=".268"/><stop offset=".7997" stop-color="#fff" stop-opacity=".243"/><stop offset=".8197" stop-color="#fff" stop-opacity=".203"/><stop offset=".8398" stop-color="#fff" stop-opacity=".156"/><stop offset=".8398" stop-opacity=".601"/><stop offset=".8598" stop-opacity=".533"/><stop offset=".8798" stop-opacity=".457"/><stop offset=".8998" stop-opacity=".374"/><stop offset=".9199" stop-opacity=".287"/><stop offset=".9399" stop-opacity=".2"/><stop offset=".9599" stop-opacity=".119"/><stop offset=".9800" stop-opacity=".05"/><stop offset="1.0000" stop-color="#fff" stop-opacity="0"/></radialGradient><radialGradient id="w141" gradientUnits="userSpaceOnUse" cx="184.5" cy="262.5" r="162.25"><stop offset=".6795" stop-color="#fff" stop-opacity="0"/><stop offset=".6995" stop-color="#fff" stop-opacity=".091"/><stop offset=".7196" stop-color="#fff" stop-opacity=".173"/><stop offset=".7396" stop-color="#fff" stop-opacity=".226"/><stop offset=".7596" stop-color="#fff" stop-opacity=".246"/><stop offset=".7797" stop-color="#fff" stop-opacity=".238"/><stop offset=".7997" stop-color="#fff" stop-opacity=".208"/><stop offset=".8197" stop-color="#fff" stop-opacity=".165"/><stop offset=".8398" stop-color="#fff" stop-opacity=".115"/><stop offset=".8398" stop-opacity=".583"/><stop offset=".8598" stop-opacity=".517"/><stop offset=".8798" stop-opacity=".442"/><stop offset=".8998" stop-opacity=".362"/><stop offset=".9199" stop-opacity=".277"/><stop offset=".9399" stop-opacity=".192"/><stop offset=".9599" stop-opacity=".114"/><stop offset=".9800" stop-opacity=".047"/><stop offset="1.0000" stop-color="#fff" stop-opacity="0"/></radialGradient><radialGradient id="w142" gradientUnits="userSpaceOnUse" cx="184.5" cy="262.5" r="162.25"><stop offset=".6795" stop-color="#fff" stop-opacity="0"/><stop offset=".6995" stop-color="#fff" stop-opacity=".086"/><stop offset=".7196" stop-color="#fff" stop-opacity=".161"/><stop offset=".7396" stop-color="#fff" stop-opacity=".207"/><stop offset=".7596" stop-color="#fff" stop-opacity=".221"/><stop offset=".7797" stop-color="#fff" stop-opacity=".207"/><stop offset=".7997" stop-color="#fff" stop-opacity=".173"/><stop offset=".8197" stop-color="#fff" stop-opacity=".126"/><stop offset=".8398" stop-color="#fff" stop-opacity=".073"/><stop offset=".8398" stop-opacity=".566"/><stop offset=".8598" stop-opacity=".5"/><stop offset=".8798" stop-opacity=".427"/><stop offset=".8998" stop-opacity=".349"/><stop offset=".9199" stop-opacity=".266"/><stop offset=".9399" stop-opacity=".184"/><stop offset=".9599" stop-opacity=".109"/><stop offset=".9800" stop-opacity=".045"/><stop offset="1.0000" stop-color="#fff" stop-opacity="0"/></radialGradient><radialGradient id="w143" gradientUnits="userSpaceOnUse" cx="184.5" cy="262.5" r="162.25"><stop offset=".6795" stop-color="#fff" stop-opacity="0"/><stop offset=".6995" stop-color="#fff" stop-opacity=".08"/><stop offset=".7196" stop-color="#fff" stop-opacity=".148"/><stop offset=".7396" stop-color="#fff" stop-opacity=".187"/><stop offset=".7596" stop-color="#fff" stop-opacity=".195"/><stop offset=".7797" stop-color="#fff" stop-opacity=".176"/><stop offset=".7997" stop-color="#fff" stop-opacity=".137"/><stop offset=".8197" stop-color="#fff" stop-opacity=".087"/><stop offset=".8398" stop-color="#fff" stop-opacity=".03"/><stop offset=".8398" stop-opacity=".547"/><stop offset=".8598" stop-opacity=".483"/><stop offset=".8798" stop-opacity=".412"/><stop offset=".8998" stop-opacity=".335"/><stop offset=".9199" stop-opacity=".255"/><stop offset=".9399" stop-opacity=".176"/><stop offset=".9599" stop-opacity=".103"/><stop offset=".9800" stop-opacity=".042"/><stop offset="1.0000" stop-color="#fff" stop-opacity="0"/></radialGradient><radialGradient id="w144" gradientUnits="userSpaceOnUse" cx="184.5" cy="262.5" r="162.25"><stop offset=".6795" stop-color="#fff" stop-opacity="0"/><stop offset=".6995" stop-color="#fff" stop-opacity=".074"/><stop offset=".7196" stop-color="#fff" stop-opacity=".135"/><stop offset=".7396" stop-color="#fff" stop-opacity=".168"/><stop offset=".7596" stop-color="#fff" stop-opacity=".169"/><stop offset=".7797" stop-color="#fff" stop-opacity=".144"/><stop offset=".7997" stop-color="#fff" stop-opacity=".101"/><stop offset=".8197" stop-color="#fff" stop-opacity=".047"/><stop offset=".8354" stop-color="#fff" stop-opacity="0"/><stop offset=".8354" stop-opacity="0"/><stop offset=".8398" stop-opacity=".006"/><stop offset=".8398" stop-opacity=".529"/><stop offset=".8598" stop-opacity=".466"/><stop offset=".8798" stop-opacity=".397"/><stop offset=".8998" stop-opacity=".322"/><stop offset=".9199" stop-opacity=".244"/><stop offset=".9399" stop-opacity=".167"/><stop offset=".9599" stop-opacity=".098"/><stop offset=".9800" stop-opacity=".04"/><stop offset="1.0000" stop-color="#fff" stop-opacity="0"/></radialGradient><radialGradient id="w145" gradientUnits="userSpaceOnUse" cx="184.5" cy="262.5" r="162.25"><stop offset=".6795" stop-color="#fff" stop-opacity="0"/><stop offset=".6995" stop-color="#fff" stop-opacity=".068"/><stop offset=".7196" stop-color="#fff" stop-opacity=".122"/><stop offset=".7396" stop-color="#fff" stop-opacity=".147"/><stop offset=".7596" stop-color="#fff" stop-opacity=".142"/><stop offset=".7797" stop-color="#fff" stop-opacity=".112"/><stop offset=".7997" stop-color="#fff" stop-opacity=".064"/><stop offset=".8197" stop-color="#fff" stop-opacity=".006"/><stop offset=".8215" stop-color="#fff" stop-opacity="0"/><stop offset=".8215" stop-opacity="0"/><stop offset=".8398" stop-opacity=".024"/><stop offset=".8398" stop-opacity=".51"/><stop offset=".8598" stop-opacity=".448"/><stop offset=".8798" stop-opacity=".381"/><stop offset=".8998" stop-opacity=".308"/><stop offset=".9199" stop-opacity=".232"/><stop offset=".9399" stop-opacity=".159"/><stop offset=".9599" stop-opacity=".092"/><stop offset=".9800" stop-opacity=".037"/><stop offset="1.0000" stop-color="#fff" stop-opacity="0"/></radialGradient><radialGradient id="w146" gradientUnits="userSpaceOnUse" cx="184.5" cy="262.5" r="162.25"><stop offset=".6795" stop-color="#fff" stop-opacity="0"/><stop offset=".6995" stop-color="#fff" stop-opacity=".062"/><stop offset=".7196" stop-color="#fff" stop-opacity=".109"/><stop offset=".7396" stop-color="#fff" stop-opacity=".127"/><stop offset=".7596" stop-color="#fff" stop-opacity=".115"/><stop offset=".7797" stop-color="#fff" stop-opacity=".079"/><stop offset=".7997" stop-color="#fff" stop-opacity=".026"/><stop offset=".8081" stop-color="#fff" stop-opacity="0"/><stop offset=".8081" stop-opacity="0"/><stop offset=".8197" stop-opacity=".015"/><stop offset=".8398" stop-opacity=".044"/><stop offset=".8398" stop-opacity=".491"/><stop offset=".8598" stop-opacity=".431"/><stop offset=".8798" stop-opacity=".365"/><stop offset=".8998" stop-opacity=".294"/><stop offset=".9199" stop-opacity=".221"/><stop offset=".9399" stop-opacity=".15"/><stop offset=".9599" stop-opacity=".086"/><stop offset=".9800" stop-opacity=".035"/><stop offset="1.0000" stop-color="#fff" stop-opacity="0"/></radialGradient><radialGradient id="w147" gradientUnits="userSpaceOnUse" cx="184.5" cy="262.5" r="162.25"><stop offset=".6795" stop-color="#fff" stop-opacity="0"/><stop offset=".6995" stop-color="#fff" stop-opacity=".056"/><stop offset=".7196" stop-color="#fff" stop-opacity=".095"/><stop offset=".7396" stop-color="#fff" stop-opacity=".106"/><stop offset=".7596" stop-color="#fff" stop-opacity=".088"/><stop offset=".7797" stop-color="#fff" stop-opacity=".046"/><stop offset=".7955" stop-color="#fff" stop-opacity="0"/><stop offset=".7955" stop-opacity="0"/><stop offset=".7997" stop-opacity=".005"/><stop offset=".8197" stop-opacity=".034"/><stop offset=".8398" stop-opacity=".063"/><stop offset=".8398" stop-opacity=".471"/><stop offset=".8598" stop-opacity=".413"/><stop offset=".8798" stop-opacity=".348"/><stop offset=".8998" stop-opacity=".279"/><stop offset=".9199" stop-opacity=".209"/><stop offset=".9399" stop-opacity=".141"/><stop offset=".9599" stop-opacity=".081"/><stop offset=".9800" stop-opacity=".032"/><stop offset="1.0000" stop-color="#fff" stop-opacity="0"/></radialGradient><radialGradient id="w148" gradientUnits="userSpaceOnUse" cx="184.5" cy="262.5" r="162.25"><stop offset=".6795" stop-color="#fff" stop-opacity="0"/><stop offset=".6995" stop-color="#fff" stop-opacity=".049"/><stop offset=".7196" stop-color="#fff" stop-opacity=".082"/><stop offset=".7396" stop-color="#fff" stop-opacity=".085"/><stop offset=".7596" stop-color="#fff" stop-opacity=".06"/><stop offset=".7797" stop-color="#fff" stop-opacity=".012"/><stop offset=".7835" stop-color="#fff" stop-opacity="0"/><stop offset=".7835" stop-opacity="0"/><stop offset=".7997" stop-opacity=".022"/><stop offset=".8197" stop-opacity=".052"/><stop offset=".8398" stop-opacity=".083"/><stop offset=".8398" stop-opacity=".452"/><stop offset=".8598" stop-opacity=".394"/><stop offset=".8798" stop-opacity=".332"/><stop offset=".8998" stop-opacity=".265"/><stop offset=".9199" stop-opacity=".197"/><stop offset=".9399" stop-opacity=".132"/><stop offset=".9599" stop-opacity=".075"/><stop offset=".9800" stop-opacity=".029"/><stop offset="1.0000" stop-color="#fff" stop-opacity="0"/></radialGradient><radialGradient id="w149" gradientUnits="userSpaceOnUse" cx="184.5" cy="262.5" r="162.25"><stop offset=".6795" stop-color="#fff" stop-opacity="0"/><stop offset=".6995" stop-color="#fff" stop-opacity=".043"/><stop offset=".7196" stop-color="#fff" stop-opacity=".068"/><stop offset=".7396" stop-color="#fff" stop-opacity=".064"/><stop offset=".7596" stop-color="#fff" stop-opacity=".032"/><stop offset=".7714" stop-color="#fff" stop-opacity="0"/><stop offset=".7714" stop-opacity="0"/><stop offset=".7797" stop-opacity=".009"/><stop offset=".7997" stop-opacity=".038"/><stop offset=".8197" stop-opacity=".07"/><stop offset=".8398" stop-opacity=".103"/><stop offset=".8398" stop-opacity=".432"/><stop offset=".8598" stop-opacity=".376"/><stop offset=".8798" stop-opacity=".315"/><stop offset=".8998" stop-opacity=".25"/><stop offset=".9199" stop-opacity=".185"/><stop offset=".9399" stop-opacity=".123"/><stop offset=".9599" stop-opacity=".069"/><stop offset=".9800" stop-opacity=".027"/><stop offset="1.0000" stop-color="#fff" stop-opacity="0"/></radialGradient><radialGradient id="w150" gradientUnits="userSpaceOnUse" cx="184.5" cy="262.5" r="162.25"><stop offset=".6795" stop-color="#fff" stop-opacity="0"/><stop offset=".6995" stop-color="#fff" stop-opacity=".036"/><stop offset=".7196" stop-color="#fff" stop-opacity=".054"/><stop offset=".7396" stop-color="#fff" stop-opacity=".042"/><stop offset=".7596" stop-color="#fff" stop-opacity=".003"/><stop offset=".7607" stop-color="#fff" stop-opacity="0"/><stop offset=".7607" stop-opacity="0"/><stop offset=".7797" stop-opacity=".024"/><stop offset=".7997" stop-opacity=".055"/><stop offset=".8197" stop-opacity=".089"/><stop offset=".8398" stop-opacity=".123"/><stop offset=".8398" stop-opacity=".412"/><stop offset=".8598" stop-opacity=".357"/><stop offset=".8798" stop-opacity=".298"/><stop offset=".8998" stop-opacity=".236"/><stop offset=".9199" stop-opacity=".173"/><stop offset=".9399" stop-opacity=".114"/><stop offset=".9599" stop-opacity=".063"/><stop offset=".9800" stop-opacity=".024"/><stop offset="1.0000" stop-color="#fff" stop-opacity="0"/></radialGradient><radialGradient id="w151" gradientUnits="userSpaceOnUse" cx="184.5" cy="262.5" r="162.25"><stop offset=".6795" stop-color="#fff" stop-opacity="0"/><stop offset=".6995" stop-color="#fff" stop-opacity=".03"/><stop offset=".7196" stop-color="#fff" stop-opacity=".04"/><stop offset=".7396" stop-color="#fff" stop-opacity=".021"/><stop offset=".7486" stop-color="#fff" stop-opacity="0"/><stop offset=".7486" stop-opacity="0"/><stop offset=".7596" stop-opacity=".011"/><stop offset=".7797" stop-opacity=".039"/><stop offset=".7997" stop-opacity=".072"/><stop offset=".8197" stop-opacity=".108"/><stop offset=".8398" stop-opacity=".143"/><stop offset=".8398" stop-opacity=".391"/><stop offset=".8598" stop-opacity=".338"/><stop offset=".8798" stop-opacity=".281"/><stop offset=".8998" stop-opacity=".221"/><stop offset=".9199" stop-opacity=".161"/><stop offset=".9399" stop-opacity=".105"/><stop offset=".9599" stop-opacity=".057"/><stop offset=".9800" stop-opacity=".021"/><stop offset="1.0000" stop-color="#fff" stop-opacity="0"/></radialGradient><radialGradient id="w152" gradientUnits="userSpaceOnUse" cx="184.5" cy="262.5" r="162.25"><stop offset=".6795" stop-color="#fff" stop-opacity="0"/><stop offset=".6995" stop-color="#fff" stop-opacity=".023"/><stop offset=".7196" stop-color="#fff" stop-opacity=".025"/><stop offset=".7386" stop-color="#fff" stop-opacity="0"/><stop offset=".7386" stop-opacity="0"/><stop offset=".7396" stop-opacity=".001"/><stop offset=".7596" stop-opacity=".023"/><stop offset=".7797" stop-opacity=".054"/><stop offset=".7997" stop-opacity=".09"/><stop offset=".8197" stop-opacity=".127"/><stop offset=".8398" stop-opacity=".164"/><stop offset=".8398" stop-opacity=".371"/><stop offset=".8598" stop-opacity=".319"/><stop offset=".8798" stop-opacity=".264"/><stop offset=".8998" stop-opacity=".206"/><stop offset=".9199" stop-opacity=".148"/><stop offset=".9399" stop-opacity=".095"/><stop offset=".9599" stop-opacity=".051"/><stop offset=".9800" stop-opacity=".018"/><stop offset="1.0000" stop-color="#fff" stop-opacity="0"/></radialGradient><radialGradient id="w153" gradientUnits="userSpaceOnUse" cx="184.5" cy="262.5" r="162.25"><stop offset=".6795" stop-color="#fff" stop-opacity="0"/><stop offset=".6995" stop-color="#fff" stop-opacity=".017"/><stop offset=".7196" stop-color="#fff" stop-opacity=".011"/><stop offset=".7261" stop-color="#fff" stop-opacity="0"/><stop offset=".7261" stop-opacity="0"/><stop offset=".7396" stop-opacity=".01"/><stop offset=".7596" stop-opacity=".036"/><stop offset=".7797" stop-opacity=".069"/><stop offset=".7997" stop-opacity=".107"/><stop offset=".8197" stop-opacity=".146"/><stop offset=".8398" stop-opacity=".184"/><stop offset=".8398" stop-opacity=".35"/><stop offset=".8598" stop-opacity=".3"/><stop offset=".8798" stop-opacity=".246"/><stop offset=".8998" stop-opacity=".191"/><stop offset=".9199" stop-opacity=".136"/><stop offset=".9399" stop-opacity=".086"/><stop offset=".9599" stop-opacity=".045"/><stop offset=".9800" stop-opacity=".016"/><stop offset="1.0000" stop-color="#fff" stop-opacity="0"/></radialGradient><radialGradient id="w154" gradientUnits="userSpaceOnUse" cx="184.5" cy="262.5" r="162.25"><stop offset=".6795" stop-color="#fff" stop-opacity="0"/><stop offset=".6995" stop-color="#fff" stop-opacity=".01"/><stop offset=".7148" stop-color="#fff" stop-opacity="0"/><stop offset=".7148" stop-opacity="0"/><stop offset=".7196" stop-opacity=".001"/><stop offset=".7396" stop-opacity=".019"/><stop offset=".7596" stop-opacity=".048"/><stop offset=".7797" stop-opacity=".084"/><stop offset=".7997" stop-opacity=".124"/><stop offset=".8197" stop-opacity=".165"/><stop offset=".8398" stop-opacity=".205"/><stop offset=".8398" stop-opacity=".33"/><stop offset=".8598" stop-opacity=".281"/><stop offset=".8798" stop-opacity=".229"/><stop offset=".8998" stop-opacity=".176"/><stop offset=".9199" stop-opacity=".123"/><stop offset=".9399" stop-opacity=".076"/><stop offset=".9599" stop-opacity=".038"/><stop offset=".9800" stop-opacity=".013"/><stop offset="1.0000" stop-color="#fff" stop-opacity="0"/></radialGradient><radialGradient id="w155" gradientUnits="userSpaceOnUse" cx="184.5" cy="262.5" r="162.25"><stop offset=".6795" stop-color="#fff" stop-opacity="0"/><stop offset=".6995" stop-color="#fff" stop-opacity=".004"/><stop offset=".7029" stop-color="#fff" stop-opacity="0"/><stop offset=".7029" stop-opacity="0"/><stop offset=".7196" stop-opacity=".008"/><stop offset=".7396" stop-opacity=".029"/><stop offset=".7596" stop-opacity=".061"/><stop offset=".7797" stop-opacity=".099"/><stop offset=".7997" stop-opacity=".142"/><stop offset=".8197" stop-opacity=".184"/><stop offset=".8398" stop-opacity=".226"/><stop offset=".8398" stop-opacity=".309"/><stop offset=".8598" stop-opacity=".262"/><stop offset=".8798" stop-opacity=".212"/><stop offset=".8998" stop-opacity=".16"/><stop offset=".9199" stop-opacity=".111"/><stop offset=".9399" stop-opacity=".067"/><stop offset=".9599" stop-opacity=".032"/><stop offset=".9800" stop-opacity=".01"/><stop offset="1.0000" stop-color="#fff" stop-opacity="0"/></radialGradient><radialGradient id="w156" gradientUnits="userSpaceOnUse" cx="184.5" cy="262.5" r="162.25"><stop offset=".6795" stop-color="#fff" stop-opacity="0"/><stop offset=".6995" stop-opacity=".001"/><stop offset=".7196" stop-opacity=".014"/><stop offset=".7396" stop-opacity=".038"/><stop offset=".7596" stop-opacity=".073"/><stop offset=".7797" stop-opacity=".115"/><stop offset=".7997" stop-opacity=".159"/><stop offset=".8197" stop-opacity=".204"/><stop offset=".8398" stop-opacity=".246"/><stop offset=".8398" stop-opacity=".288"/><stop offset=".8598" stop-opacity=".242"/><stop offset=".8798" stop-opacity=".194"/><stop offset=".8998" stop-opacity=".145"/><stop offset=".9199" stop-opacity=".098"/><stop offset=".9399" stop-opacity=".057"/><stop offset=".9599" stop-opacity=".026"/><stop offset=".9800" stop-opacity=".007"/><stop offset="1.0000" stop-color="#fff" stop-opacity="0"/></radialGradient><radialGradient id="w157" gradientUnits="userSpaceOnUse" cx="184.5" cy="262.5" r="162.25"><stop offset=".6795" stop-color="#fff" stop-opacity="0"/><stop offset=".6995" stop-opacity=".004"/><stop offset=".7196" stop-opacity=".02"/><stop offset=".7396" stop-opacity=".048"/><stop offset=".7596" stop-opacity=".086"/><stop offset=".7797" stop-opacity=".13"/><stop offset=".7997" stop-opacity=".177"/><stop offset=".8197" stop-opacity=".223"/><stop offset=".8398" stop-opacity=".267"/><stop offset=".8398" stop-opacity=".267"/><stop offset=".8598" stop-opacity=".223"/><stop offset=".8798" stop-opacity=".177"/><stop offset=".8998" stop-opacity=".13"/><stop offset=".9199" stop-opacity=".086"/><stop offset=".9399" stop-opacity=".048"/><stop offset=".9599" stop-opacity=".02"/><stop offset=".9800" stop-opacity=".004"/><stop offset="1.0000" stop-color="#fff" stop-opacity="0"/></radialGradient><radialGradient id="w158" gradientUnits="userSpaceOnUse" cx="184.5" cy="262.5" r="162.25"><stop offset=".6795" stop-color="#fff" stop-opacity="0"/><stop offset=".6995" stop-opacity=".007"/><stop offset=".7196" stop-opacity=".026"/><stop offset=".7396" stop-opacity=".057"/><stop offset=".7596" stop-opacity=".098"/><stop offset=".7797" stop-opacity=".145"/><stop offset=".7997" stop-opacity=".194"/><stop offset=".8197" stop-opacity=".242"/><stop offset=".8398" stop-opacity=".288"/><stop offset=".8398" stop-opacity=".246"/><stop offset=".8598" stop-opacity=".204"/><stop offset=".8798" stop-opacity=".159"/><stop offset=".8998" stop-opacity=".115"/><stop offset=".9199" stop-opacity=".073"/><stop offset=".9399" stop-opacity=".038"/><stop offset=".9599" stop-opacity=".014"/><stop offset=".9800" stop-opacity=".001"/><stop offset="1.0000" stop-color="#fff" stop-opacity="0"/></radialGradient><radialGradient id="w159" gradientUnits="userSpaceOnUse" cx="184.5" cy="262.5" r="162.25"><stop offset=".6795" stop-color="#fff" stop-opacity="0"/><stop offset=".6995" stop-opacity=".01"/><stop offset=".7196" stop-opacity=".032"/><stop offset=".7396" stop-opacity=".067"/><stop offset=".7596" stop-opacity=".111"/><stop offset=".7797" stop-opacity=".16"/><stop offset=".7997" stop-opacity=".212"/><stop offset=".8197" stop-opacity=".262"/><stop offset=".8398" stop-opacity=".309"/><stop offset=".8398" stop-opacity=".226"/><stop offset=".8598" stop-opacity=".184"/><stop offset=".8798" stop-opacity=".142"/><stop offset=".8998" stop-opacity=".099"/><stop offset=".9199" stop-opacity=".061"/><stop offset=".9399" stop-opacity=".029"/><stop offset=".9599" stop-opacity=".008"/><stop offset=".9766" stop-opacity="0"/><stop offset=".9766" stop-color="#fff" stop-opacity="0"/><stop offset=".9800" stop-color="#fff" stop-opacity=".004"/><stop offset="1.0000" stop-color="#fff" stop-opacity="0"/></radialGradient><radialGradient id="w160" gradientUnits="userSpaceOnUse" cx="184.5" cy="262.5" r="162.25"><stop offset=".6795" stop-color="#fff" stop-opacity="0"/><stop offset=".6995" stop-opacity=".013"/><stop offset=".7196" stop-opacity=".038"/><stop offset=".7396" stop-opacity=".076"/><stop offset=".7596" stop-opacity=".123"/><stop offset=".7797" stop-opacity=".176"/><stop offset=".7997" stop-opacity=".229"/><stop offset=".8197" stop-opacity=".281"/><stop offset=".8398" stop-opacity=".33"/><stop offset=".8398" stop-opacity=".205"/><stop offset=".8598" stop-opacity=".165"/><stop offset=".8798" stop-opacity=".124"/><stop offset=".8998" stop-opacity=".084"/><stop offset=".9199" stop-opacity=".048"/><stop offset=".9399" stop-opacity=".019"/><stop offset=".9599" stop-opacity=".001"/><stop offset=".9647" stop-opacity="0"/><stop offset=".9647" stop-color="#fff" stop-opacity="0"/><stop offset=".9800" stop-color="#fff" stop-opacity=".01"/><stop offset="1.0000" stop-color="#fff" stop-opacity="0"/></radialGradient><radialGradient id="w161" gradientUnits="userSpaceOnUse" cx="184.5" cy="262.5" r="162.25"><stop offset=".6795" stop-color="#fff" stop-opacity="0"/><stop offset=".6995" stop-opacity=".016"/><stop offset=".7196" stop-opacity=".045"/><stop offset=".7396" stop-opacity=".086"/><stop offset=".7596" stop-opacity=".136"/><stop offset=".7797" stop-opacity=".191"/><stop offset=".7997" stop-opacity=".246"/><stop offset=".8197" stop-opacity=".3"/><stop offset=".8398" stop-opacity=".35"/><stop offset=".8398" stop-opacity=".184"/><stop offset=".8598" stop-opacity=".146"/><stop offset=".8798" stop-opacity=".107"/><stop offset=".8998" stop-opacity=".069"/><stop offset=".9199" stop-opacity=".036"/><stop offset=".9399" stop-opacity=".01"/><stop offset=".9534" stop-opacity="0"/><stop offset=".9534" stop-color="#fff" stop-opacity="0"/><stop offset=".9599" stop-color="#fff" stop-opacity=".011"/><stop offset=".9800" stop-color="#fff" stop-opacity=".017"/><stop offset="1.0000" stop-color="#fff" stop-opacity="0"/></radialGradient><radialGradient id="w162" gradientUnits="userSpaceOnUse" cx="184.5" cy="262.5" r="162.25"><stop offset=".6795" stop-color="#fff" stop-opacity="0"/><stop offset=".6995" stop-opacity=".018"/><stop offset=".7196" stop-opacity=".051"/><stop offset=".7396" stop-opacity=".095"/><stop offset=".7596" stop-opacity=".148"/><stop offset=".7797" stop-opacity=".206"/><stop offset=".7997" stop-opacity=".264"/><stop offset=".8197" stop-opacity=".319"/><stop offset=".8398" stop-opacity=".371"/><stop offset=".8398" stop-opacity=".164"/><stop offset=".8598" stop-opacity=".127"/><stop offset=".8798" stop-opacity=".09"/><stop offset=".8998" stop-opacity=".054"/><stop offset=".9199" stop-opacity=".023"/><stop offset=".9399" stop-opacity=".001"/><stop offset=".9409" stop-opacity="0"/><stop offset=".9409" stop-color="#fff" stop-opacity="0"/><stop offset=".9599" stop-color="#fff" stop-opacity=".025"/><stop offset=".9800" stop-color="#fff" stop-opacity=".023"/><stop offset="1.0000" stop-color="#fff" stop-opacity="0"/></radialGradient><radialGradient id="w163" gradientUnits="userSpaceOnUse" cx="184.5" cy="262.5" r="162.25"><stop offset=".6795" stop-color="#fff" stop-opacity="0"/><stop offset=".6995" stop-opacity=".021"/><stop offset=".7196" stop-opacity=".057"/><stop offset=".7396" stop-opacity=".105"/><stop offset=".7596" stop-opacity=".161"/><stop offset=".7797" stop-opacity=".221"/><stop offset=".7997" stop-opacity=".281"/><stop offset=".8197" stop-opacity=".338"/><stop offset=".8398" stop-opacity=".391"/><stop offset=".8398" stop-opacity=".143"/><stop offset=".8598" stop-opacity=".108"/><stop offset=".8798" stop-opacity=".072"/><stop offset=".8998" stop-opacity=".039"/><stop offset=".9199" stop-opacity=".011"/><stop offset=".9309" stop-opacity="0"/><stop offset=".9309" stop-color="#fff" stop-opacity="0"/><stop offset=".9399" stop-color="#fff" stop-opacity=".021"/><stop offset=".9599" stop-color="#fff" stop-opacity=".04"/><stop offset=".9800" stop-color="#fff" stop-opacity=".03"/><stop offset="1.0000" stop-color="#fff" stop-opacity="0"/></radialGradient><radialGradient id="w164" gradientUnits="userSpaceOnUse" cx="184.5" cy="262.5" r="162.25"><stop offset=".6795" stop-color="#fff" stop-opacity="0"/><stop offset=".6995" stop-opacity=".024"/><stop offset=".7196" stop-opacity=".063"/><stop offset=".7396" stop-opacity=".114"/><stop offset=".7596" stop-opacity=".173"/><stop offset=".7797" stop-opacity=".236"/><stop offset=".7997" stop-opacity=".298"/><stop offset=".8197" stop-opacity=".357"/><stop offset=".8398" stop-opacity=".412"/><stop offset=".8398" stop-opacity=".123"/><stop offset=".8598" stop-opacity=".089"/><stop offset=".8798" stop-opacity=".055"/><stop offset=".8998" stop-opacity=".024"/><stop offset=".9188" stop-opacity="0"/><stop offset=".9188" stop-color="#fff" stop-opacity="0"/><stop offset=".9199" stop-color="#fff" stop-opacity=".003"/><stop offset=".9399" stop-color="#fff" stop-opacity=".042"/><stop offset=".9599" stop-color="#fff" stop-opacity=".054"/><stop offset=".9800" stop-color="#fff" stop-opacity=".036"/><stop offset="1.0000" stop-color="#fff" stop-opacity="0"/></radialGradient><radialGradient id="w165" gradientUnits="userSpaceOnUse" cx="184.5" cy="262.5" r="162.25"><stop offset=".6795" stop-color="#fff" stop-opacity="0"/><stop offset=".6995" stop-opacity=".027"/><stop offset=".7196" stop-opacity=".069"/><stop offset=".7396" stop-opacity=".123"/><stop offset=".7596" stop-opacity=".185"/><stop offset=".7797" stop-opacity=".25"/><stop offset=".7997" stop-opacity=".315"/><stop offset=".8197" stop-opacity=".376"/><stop offset=".8398" stop-opacity=".432"/><stop offset=".8398" stop-opacity=".103"/><stop offset=".8598" stop-opacity=".07"/><stop offset=".8798" stop-opacity=".038"/><stop offset=".8998" stop-opacity=".009"/><stop offset=".9081" stop-opacity="0"/><stop offset=".9081" stop-color="#fff" stop-opacity="0"/><stop offset=".9199" stop-color="#fff" stop-opacity=".032"/><stop offset=".9399" stop-color="#fff" stop-opacity=".064"/><stop offset=".9599" stop-color="#fff" stop-opacity=".068"/><stop offset=".9800" stop-color="#fff" stop-opacity=".043"/><stop offset="1.0000" stop-color="#fff" stop-opacity="0"/></radialGradient><radialGradient id="w166" gradientUnits="userSpaceOnUse" cx="184.5" cy="262.5" r="162.25"><stop offset=".6795" stop-color="#fff" stop-opacity="0"/><stop offset=".6995" stop-opacity=".029"/><stop offset=".7196" stop-opacity=".075"/><stop offset=".7396" stop-opacity=".132"/><stop offset=".7596" stop-opacity=".197"/><stop offset=".7797" stop-opacity=".265"/><stop offset=".7997" stop-opacity=".332"/><stop offset=".8197" stop-opacity=".394"/><stop offset=".8398" stop-opacity=".452"/><stop offset=".8398" stop-opacity=".083"/><stop offset=".8598" stop-opacity=".052"/><stop offset=".8798" stop-opacity=".022"/><stop offset=".8960" stop-opacity="0"/><stop offset=".8960" stop-color="#fff" stop-opacity="0"/><stop offset=".8998" stop-color="#fff" stop-opacity=".012"/><stop offset=".9199" stop-color="#fff" stop-opacity=".06"/><stop offset=".9399" stop-color="#fff" stop-opacity=".085"/><stop offset=".9599" stop-color="#fff" stop-opacity=".082"/><stop offset=".9800" stop-color="#fff" stop-opacity=".049"/><stop offset="1.0000" stop-color="#fff" stop-opacity="0"/></radialGradient><radialGradient id="w167" gradientUnits="userSpaceOnUse" cx="184.5" cy="262.5" r="162.25"><stop offset=".6795" stop-color="#fff" stop-opacity="0"/><stop offset=".6995" stop-opacity=".032"/><stop offset=".7196" stop-opacity=".081"/><stop offset=".7396" stop-opacity=".141"/><stop offset=".7596" stop-opacity=".209"/><stop offset=".7797" stop-opacity=".279"/><stop offset=".7997" stop-opacity=".348"/><stop offset=".8197" stop-opacity=".413"/><stop offset=".8398" stop-opacity=".471"/><stop offset=".8398" stop-opacity=".063"/><stop offset=".8598" stop-opacity=".034"/><stop offset=".8798" stop-opacity=".005"/><stop offset=".8840" stop-opacity="0"/><stop offset=".8840" stop-color="#fff" stop-opacity="0"/><stop offset=".8998" stop-color="#fff" stop-opacity=".046"/><stop offset=".9199" stop-color="#fff" stop-opacity=".088"/><stop offset=".9399" stop-color="#fff" stop-opacity=".106"/><stop offset=".9599" stop-color="#fff" stop-opacity=".095"/><stop offset=".9800" stop-color="#fff" stop-opacity=".056"/><stop offset="1.0000" stop-color="#fff" stop-opacity="0"/></radialGradient><radialGradient id="w168" gradientUnits="userSpaceOnUse" cx="184.5" cy="262.5" r="162.25"><stop offset=".6795" stop-color="#fff" stop-opacity="0"/><stop offset=".6995" stop-opacity=".035"/><stop offset=".7196" stop-opacity=".086"/><stop offset=".7396" stop-opacity=".15"/><stop offset=".7596" stop-opacity=".221"/><stop offset=".7797" stop-opacity=".294"/><stop offset=".7997" stop-opacity=".365"/><stop offset=".8197" stop-opacity=".431"/><stop offset=".8398" stop-opacity=".491"/><stop offset=".8398" stop-opacity=".044"/><stop offset=".8598" stop-opacity=".015"/><stop offset=".8714" stop-opacity="0"/><stop offset=".8714" stop-color="#fff" stop-opacity="0"/><stop offset=".8798" stop-color="#fff" stop-opacity=".026"/><stop offset=".8998" stop-color="#fff" stop-opacity=".079"/><stop offset=".9199" stop-color="#fff" stop-opacity=".115"/><stop offset=".9399" stop-color="#fff" stop-opacity=".127"/><stop offset=".9599" stop-color="#fff" stop-opacity=".109"/><stop offset=".9800" stop-color="#fff" stop-opacity=".062"/><stop offset="1.0000" stop-color="#fff" stop-opacity="0"/></radialGradient><radialGradient id="w169" gradientUnits="userSpaceOnUse" cx="184.5" cy="262.5" r="162.25"><stop offset=".6795" stop-color="#fff" stop-opacity="0"/><stop offset=".6995" stop-opacity=".037"/><stop offset=".7196" stop-opacity=".092"/><stop offset=".7396" stop-opacity=".159"/><stop offset=".7596" stop-opacity=".232"/><stop offset=".7797" stop-opacity=".308"/><stop offset=".7997" stop-opacity=".381"/><stop offset=".8197" stop-opacity=".448"/><stop offset=".8398" stop-opacity=".51"/><stop offset=".8398" stop-opacity=".024"/><stop offset=".8580" stop-opacity="0"/><stop offset=".8580" stop-color="#fff" stop-opacity="0"/><stop offset=".8598" stop-color="#fff" stop-opacity=".006"/><stop offset=".8798" stop-color="#fff" stop-opacity=".064"/><stop offset=".8998" stop-color="#fff" stop-opacity=".112"/><stop offset=".9199" stop-color="#fff" stop-opacity=".142"/><stop offset=".9399" stop-color="#fff" stop-opacity=".147"/><stop offset=".9599" stop-color="#fff" stop-opacity=".122"/><stop offset=".9800" stop-color="#fff" stop-opacity=".068"/><stop offset="1.0000" stop-color="#fff" stop-opacity="0"/></radialGradient><radialGradient id="w170" gradientUnits="userSpaceOnUse" cx="184.5" cy="262.5" r="162.25"><stop offset=".6795" stop-color="#fff" stop-opacity="0"/><stop offset=".6995" stop-opacity=".04"/><stop offset=".7196" stop-opacity=".098"/><stop offset=".7396" stop-opacity=".167"/><stop offset=".7596" stop-opacity=".244"/><stop offset=".7797" stop-opacity=".322"/><stop offset=".7997" stop-opacity=".397"/><stop offset=".8197" stop-opacity=".466"/><stop offset=".8398" stop-opacity=".529"/><stop offset=".8398" stop-opacity=".006"/><stop offset=".8441" stop-opacity="0"/><stop offset=".8441" stop-color="#fff" stop-opacity="0"/><stop offset=".8598" stop-color="#fff" stop-opacity=".047"/><stop offset=".8798" stop-color="#fff" stop-opacity=".101"/><stop offset=".8998" stop-color="#fff" stop-opacity=".144"/><stop offset=".9199" stop-color="#fff" stop-opacity=".169"/><stop offset=".9399" stop-color="#fff" stop-opacity=".168"/><stop offset=".9599" stop-color="#fff" stop-opacity=".135"/><stop offset=".9800" stop-color="#fff" stop-opacity=".074"/><stop offset="1.0000" stop-color="#fff" stop-opacity="0"/></radialGradient><radialGradient id="w171" gradientUnits="userSpaceOnUse" cx="184.5" cy="262.5" r="162.25"><stop offset=".6795" stop-color="#fff" stop-opacity="0"/><stop offset=".6995" stop-opacity=".042"/><stop offset=".7196" stop-opacity=".103"/><stop offset=".7396" stop-opacity=".176"/><stop offset=".7596" stop-opacity=".255"/><stop offset=".7797" stop-opacity=".335"/><stop offset=".7997" stop-opacity=".412"/><stop offset=".8197" stop-opacity=".483"/><stop offset=".8398" stop-opacity=".547"/><stop offset=".8398" stop-color="#fff" stop-opacity=".03"/><stop offset=".8598" stop-color="#fff" stop-opacity=".087"/><stop offset=".8798" stop-color="#fff" stop-opacity=".137"/><stop offset=".8998" stop-color="#fff" stop-opacity=".176"/><stop offset=".9199" stop-color="#fff" stop-opacity=".195"/><stop offset=".9399" stop-color="#fff" stop-opacity=".187"/><stop offset=".9599" stop-color="#fff" stop-opacity=".148"/><stop offset=".9800" stop-color="#fff" stop-opacity=".08"/><stop offset="1.0000" stop-color="#fff" stop-opacity="0"/></radialGradient><radialGradient id="w172" gradientUnits="userSpaceOnUse" cx="184.5" cy="262.5" r="162.25"><stop offset=".6795" stop-color="#fff" stop-opacity="0"/><stop offset=".6995" stop-opacity=".045"/><stop offset=".7196" stop-opacity=".109"/><stop offset=".7396" stop-opacity=".184"/><stop offset=".7596" stop-opacity=".266"/><stop offset=".7797" stop-opacity=".349"/><stop offset=".7997" stop-opacity=".427"/><stop offset=".8197" stop-opacity=".5"/><stop offset=".8398" stop-opacity=".566"/><stop offset=".8398" stop-color="#fff" stop-opacity=".073"/><stop offset=".8598" stop-color="#fff" stop-opacity=".126"/><stop offset=".8798" stop-color="#fff" stop-opacity=".173"/><stop offset=".8998" stop-color="#fff" stop-opacity=".207"/><stop offset=".9199" stop-color="#fff" stop-opacity=".221"/><stop offset=".9399" stop-color="#fff" stop-opacity=".207"/><stop offset=".9599" stop-color="#fff" stop-opacity=".161"/><stop offset=".9800" stop-color="#fff" stop-opacity=".086"/><stop offset="1.0000" stop-color="#fff" stop-opacity="0"/></radialGradient><radialGradient id="w173" gradientUnits="userSpaceOnUse" cx="184.5" cy="262.5" r="162.25"><stop offset=".6795" stop-color="#fff" stop-opacity="0"/><stop offset=".6995" stop-opacity=".047"/><stop offset=".7196" stop-opacity=".114"/><stop offset=".7396" stop-opacity=".192"/><stop offset=".7596" stop-opacity=".277"/><stop offset=".7797" stop-opacity=".362"/><stop offset=".7997" stop-opacity=".442"/><stop offset=".8197" stop-opacity=".517"/><stop offset=".8398" stop-opacity=".583"/><stop offset=".8398" stop-color="#fff" stop-opacity=".115"/><stop offset=".8598" stop-color="#fff" stop-opacity=".165"/><stop offset=".8798" stop-color="#fff" stop-opacity=".208"/><stop offset=".8998" stop-color="#fff" stop-opacity=".238"/><stop offset=".9199" stop-color="#fff" stop-opacity=".246"/><stop offset=".9399" stop-color="#fff" stop-opacity=".226"/><stop offset=".9599" stop-color="#fff" stop-opacity=".173"/><stop offset=".9800" stop-color="#fff" stop-opacity=".091"/><stop offset="1.0000" stop-color="#fff" stop-opacity="0"/></radialGradient><radialGradient id="w174" gradientUnits="userSpaceOnUse" cx="184.5" cy="262.5" r="162.25"><stop offset=".6795" stop-color="#fff" stop-opacity="0"/><stop offset=".6995" stop-opacity=".05"/><stop offset=".7196" stop-opacity=".119"/><stop offset=".7396" stop-opacity=".2"/><stop offset=".7596" stop-opacity=".287"/><stop offset=".7797" stop-opacity=".374"/><stop offset=".7997" stop-opacity=".457"/><stop offset=".8197" stop-opacity=".533"/><stop offset=".8398" stop-opacity=".601"/><stop offset=".8398" stop-color="#fff" stop-opacity=".156"/><stop offset=".8598" stop-color="#fff" stop-opacity=".203"/><stop offset=".8798" stop-color="#fff" stop-opacity=".243"/><stop offset=".8998" stop-color="#fff" stop-opacity=".268"/><stop offset=".9199" stop-color="#fff" stop-opacity=".271"/><stop offset=".9399" stop-color="#fff" stop-opacity=".245"/><stop offset=".9599" stop-color="#fff" stop-opacity=".186"/><stop offset=".9800" stop-color="#fff" stop-opacity=".097"/><stop offset="1.0000" stop-color="#fff" stop-opacity="0"/></radialGradient><radialGradient id="w175" gradientUnits="userSpaceOnUse" cx="184.5" cy="262.5" r="162.25"><stop offset=".6795" stop-color="#fff" stop-opacity="0"/><stop offset=".6995" stop-opacity=".052"/><stop offset=".7196" stop-opacity=".124"/><stop offset=".7396" stop-opacity=".208"/><stop offset=".7596" stop-opacity=".298"/><stop offset=".7797" stop-opacity=".387"/><stop offset=".7997" stop-opacity=".471"/><stop offset=".8197" stop-opacity=".549"/><stop offset=".8398" stop-opacity=".618"/><stop offset=".8398" stop-color="#fff" stop-opacity=".196"/><stop offset=".8598" stop-color="#fff" stop-opacity=".24"/><stop offset=".8798" stop-color="#fff" stop-opacity=".276"/><stop offset=".8998" stop-color="#fff" stop-opacity=".297"/><stop offset=".9199" stop-color="#fff" stop-opacity=".295"/><stop offset=".9399" stop-color="#fff" stop-opacity=".263"/><stop offset=".9599" stop-color="#fff" stop-opacity=".197"/><stop offset=".9800" stop-color="#fff" stop-opacity=".102"/><stop offset="1.0000" stop-color="#fff" stop-opacity="0"/></radialGradient><radialGradient id="w176" gradientUnits="userSpaceOnUse" cx="184.5" cy="262.5" r="162.25"><stop offset=".6795" stop-color="#fff" stop-opacity="0"/><stop offset=".6995" stop-opacity=".054"/><stop offset=".7196" stop-opacity=".129"/><stop offset=".7396" stop-opacity=".216"/><stop offset=".7596" stop-opacity=".308"/><stop offset=".7797" stop-opacity=".399"/><stop offset=".7997" stop-opacity=".485"/><stop offset=".8197" stop-opacity=".564"/><stop offset=".8398" stop-opacity=".635"/><stop offset=".8398" stop-color="#fff" stop-opacity=".234"/><stop offset=".8598" stop-color="#fff" stop-opacity=".276"/><stop offset=".8798" stop-color="#fff" stop-opacity=".309"/><stop offset=".8998" stop-color="#fff" stop-opacity=".326"/><stop offset=".9199" stop-color="#fff" stop-opacity=".319"/><stop offset=".9399" stop-color="#fff" stop-opacity=".281"/><stop offset=".9599" stop-color="#fff" stop-opacity=".209"/><stop offset=".9800" stop-color="#fff" stop-opacity=".108"/><stop offset="1.0000" stop-color="#fff" stop-opacity="0"/></radialGradient><radialGradient id="w177" gradientUnits="userSpaceOnUse" cx="184.5" cy="262.5" r="162.25"><stop offset=".6795" stop-color="#fff" stop-opacity="0"/><stop offset=".6995" stop-opacity=".057"/><stop offset=".7196" stop-opacity=".134"/><stop offset=".7396" stop-opacity=".223"/><stop offset=".7596" stop-opacity=".318"/><stop offset=".7797" stop-opacity=".411"/><stop offset=".7997" stop-opacity=".499"/><stop offset=".8197" stop-opacity=".579"/><stop offset=".8398" stop-opacity=".651"/><stop offset=".8398" stop-color="#fff" stop-opacity=".272"/><stop offset=".8598" stop-color="#fff" stop-opacity=".312"/><stop offset=".8798" stop-color="#fff" stop-opacity=".341"/><stop offset=".8998" stop-color="#fff" stop-opacity=".353"/><stop offset=".9199" stop-color="#fff" stop-opacity=".341"/><stop offset=".9399" stop-color="#fff" stop-opacity=".298"/><stop offset=".9599" stop-color="#fff" stop-opacity=".22"/><stop offset=".9800" stop-color="#fff" stop-opacity=".113"/><stop offset="1.0000" stop-color="#fff" stop-opacity="0"/></radialGradient><radialGradient id="w178" gradientUnits="userSpaceOnUse" cx="184.5" cy="262.5" r="162.25"><stop offset=".6795" stop-color="#fff" stop-opacity="0"/><stop offset=".6995" stop-opacity=".059"/><stop offset=".7196" stop-opacity=".139"/><stop offset=".7396" stop-opacity=".23"/><stop offset=".7596" stop-opacity=".327"/><stop offset=".7797" stop-opacity=".422"/><stop offset=".7997" stop-opacity=".512"/><stop offset=".8197" stop-opacity=".594"/><stop offset=".8398" stop-opacity=".666"/><stop offset=".8398" stop-color="#fff" stop-opacity=".309"/><stop offset=".8598" stop-color="#fff" stop-opacity=".346"/><stop offset=".8798" stop-color="#fff" stop-opacity=".372"/><stop offset=".8998" stop-color="#fff" stop-opacity=".38"/><stop offset=".9199" stop-color="#fff" stop-opacity=".364"/><stop offset=".9399" stop-color="#fff" stop-opacity=".315"/><stop offset=".9599" stop-color="#fff" stop-opacity=".231"/><stop offset=".9800" stop-color="#fff" stop-opacity=".118"/><stop offset="1.0000" stop-color="#fff" stop-opacity="0"/></radialGradient><radialGradient id="w179" gradientUnits="userSpaceOnUse" cx="184.5" cy="262.5" r="162.25"><stop offset=".6795" stop-color="#fff" stop-opacity="0"/><stop offset=".6995" stop-opacity=".061"/><stop offset=".7196" stop-opacity=".143"/><stop offset=".7396" stop-opacity=".237"/><stop offset=".7596" stop-opacity=".336"/><stop offset=".7797" stop-opacity=".434"/><stop offset=".7997" stop-opacity=".525"/><stop offset=".8197" stop-opacity=".608"/><stop offset=".8398" stop-opacity=".682"/><stop offset=".8398" stop-color="#fff" stop-opacity=".345"/><stop offset=".8598" stop-color="#fff" stop-opacity=".379"/><stop offset=".8798" stop-color="#fff" stop-opacity=".402"/><stop offset=".8998" stop-color="#fff" stop-opacity=".406"/><stop offset=".9199" stop-color="#fff" stop-opacity=".385"/><stop offset=".9399" stop-color="#fff" stop-opacity=".331"/><stop offset=".9599" stop-color="#fff" stop-opacity=".242"/><stop offset=".9800" stop-color="#fff" stop-opacity=".123"/><stop offset="1.0000" stop-color="#fff" stop-opacity="0"/></radialGradient>
</defs>
<rect x="10" y="88" width="349" height="349" fill="url(#chk)"/>
<g clip-path="url(#cv)" shape-rendering="crispEdges"><path fill="url(#w0)" d="M294.75 262.50 L346.75 262.50 A162.25 162.25 0 0 1 346.65 268.16 L294.68 266.35 A110.25 110.25 0 0 0 294.75 262.50Z"/><path fill="url(#w1)" d="M294.68 266.35 L346.65 268.16 A162.25 162.25 0 0 1 346.35 273.82 L294.48 270.19 A110.25 110.25 0 0 0 294.68 266.35Z"/><path fill="url(#w2)" d="M294.48 270.19 L346.35 273.82 A162.25 162.25 0 0 1 345.86 279.46 L294.15 274.02 A110.25 110.25 0 0 0 294.48 270.19Z"/><path fill="url(#w3)" d="M294.15 274.02 L345.86 279.46 A162.25 162.25 0 0 1 345.17 285.08 L293.68 277.84 A110.25 110.25 0 0 0 294.15 274.02Z"/><path fill="url(#w4)" d="M293.68 277.84 L345.17 285.08 A162.25 162.25 0 0 1 344.29 290.67 L293.08 281.64 A110.25 110.25 0 0 0 293.68 277.84Z"/><path fill="url(#w5)" d="M293.08 281.64 L344.29 290.67 A162.25 162.25 0 0 1 343.20 296.23 L292.34 285.42 A110.25 110.25 0 0 0 293.08 281.64Z"/><path fill="url(#w6)" d="M292.34 285.42 L343.20 296.23 A162.25 162.25 0 0 1 341.93 301.75 L291.48 289.17 A110.25 110.25 0 0 0 292.34 285.42Z"/><path fill="url(#w7)" d="M291.48 289.17 L341.93 301.75 A162.25 162.25 0 0 1 340.46 307.22 L290.48 292.89 A110.25 110.25 0 0 0 291.48 289.17Z"/><path fill="url(#w8)" d="M290.48 292.89 L340.46 307.22 A162.25 162.25 0 0 1 338.81 312.64 L289.35 296.57 A110.25 110.25 0 0 0 290.48 292.89Z"/><path fill="url(#w9)" d="M289.35 296.57 L338.81 312.64 A162.25 162.25 0 0 1 336.97 317.99 L288.10 300.21 A110.25 110.25 0 0 0 289.35 296.57Z"/><path fill="url(#w10)" d="M288.10 300.21 L336.97 317.99 A162.25 162.25 0 0 1 334.94 323.28 L286.72 303.80 A110.25 110.25 0 0 0 288.10 300.21Z"/><path fill="url(#w11)" d="M286.72 303.80 L334.94 323.28 A162.25 162.25 0 0 1 332.72 328.49 L285.22 307.34 A110.25 110.25 0 0 0 286.72 303.80Z"/><path fill="url(#w12)" d="M285.22 307.34 L332.72 328.49 A162.25 162.25 0 0 1 330.33 333.63 L283.59 310.83 A110.25 110.25 0 0 0 285.22 307.34Z"/><path fill="url(#w13)" d="M283.59 310.83 L330.33 333.63 A162.25 162.25 0 0 1 327.76 338.67 L281.84 314.26 A110.25 110.25 0 0 0 283.59 310.83Z"/><path fill="url(#w14)" d="M281.84 314.26 L327.76 338.67 A162.25 162.25 0 0 1 325.01 343.62 L279.98 317.62 A110.25 110.25 0 0 0 281.84 314.26Z"/><path fill="url(#w15)" d="M279.98 317.62 L325.01 343.62 A162.25 162.25 0 0 1 322.10 348.48 L278.00 320.92 A110.25 110.25 0 0 0 279.98 317.62Z"/><path fill="url(#w16)" d="M278.00 320.92 L322.10 348.48 A162.25 162.25 0 0 1 319.01 353.23 L275.90 324.15 A110.25 110.25 0 0 0 278.00 320.92Z"/><path fill="url(#w17)" d="M275.90 324.15 L319.01 353.23 A162.25 162.25 0 0 1 315.76 357.87 L273.69 327.30 A110.25 110.25 0 0 0 275.90 324.15Z"/><path fill="url(#w18)" d="M273.69 327.30 L315.76 357.87 A162.25 162.25 0 0 1 312.35 362.39 L271.38 330.38 A110.25 110.25 0 0 0 273.69 327.30Z"/><path fill="url(#w19)" d="M271.38 330.38 L312.35 362.39 A162.25 162.25 0 0 1 308.79 366.79 L268.96 333.37 A110.25 110.25 0 0 0 271.38 330.38Z"/><path fill="url(#w20)" d="M268.96 333.37 L308.79 366.79 A162.25 162.25 0 0 1 305.08 371.07 L266.43 336.27 A110.25 110.25 0 0 0 268.96 333.37Z"/><path fill="url(#w21)" d="M266.43 336.27 L305.08 371.07 A162.25 162.25 0 0 1 301.21 375.21 L263.81 339.09 A110.25 110.25 0 0 0 266.43 336.27Z"/><path fill="url(#w22)" d="M263.81 339.09 L301.21 375.21 A162.25 162.25 0 0 1 297.21 379.21 L261.09 341.81 A110.25 110.25 0 0 0 263.81 339.09Z"/><path fill="url(#w23)" d="M261.09 341.81 L297.21 379.21 A162.25 162.25 0 0 1 293.07 383.08 L258.27 344.43 A110.25 110.25 0 0 0 261.09 341.81Z"/><path fill="url(#w24)" d="M258.27 344.43 L293.07 383.08 A162.25 162.25 0 0 1 288.79 386.79 L255.37 346.96 A110.25 110.25 0 0 0 258.27 344.43Z"/><path fill="url(#w25)" d="M255.37 346.96 L288.79 386.79 A162.25 162.25 0 0 1 284.39 390.35 L252.38 349.38 A110.25 110.25 0 0 0 255.37 346.96Z"/><path fill="url(#w26)" d="M252.38 349.38 L284.39 390.35 A162.25 162.25 0 0 1 279.87 393.76 L249.30 351.69 A110.25 110.25 0 0 0 252.38 349.38Z"/><path fill="url(#w27)" d="M249.30 351.69 L279.87 393.76 A162.25 162.25 0 0 1 275.23 397.01 L246.15 353.90 A110.25 110.25 0 0 0 249.30 351.69Z"/><path fill="url(#w28)" d="M246.15 353.90 L275.23 397.01 A162.25 162.25 0 0 1 270.48 400.10 L242.92 356.00 A110.25 110.25 0 0 0 246.15 353.90Z"/><path fill="url(#w29)" d="M242.92 356.00 L270.48 400.10 A162.25 162.25 0 0 1 265.62 403.01 L239.62 357.98 A110.25 110.25 0 0 0 242.92 356.00Z"/><path fill="url(#w30)" d="M239.62 357.98 L265.62 403.01 A162.25 162.25 0 0 1 260.67 405.76 L236.26 359.84 A110.25 110.25 0 0 0 239.62 357.98Z"/><path fill="url(#w31)" d="M236.26 359.84 L260.67 405.76 A162.25 162.25 0 0 1 255.63 408.33 L232.83 361.59 A110.25 110.25 0 0 0 236.26 359.84Z"/><path fill="url(#w32)" d="M232.83 361.59 L255.63 408.33 A162.25 162.25 0 0 1 250.49 410.72 L229.34 363.22 A110.25 110.25 0 0 0 232.83 361.59Z"/><path fill="url(#w33)" d="M229.34 363.22 L250.49 410.72 A162.25 162.25 0 0 1 245.28 412.94 L225.80 364.72 A110.25 110.25 0 0 0 229.34 363.22Z"/><path fill="url(#w34)" d="M225.80 364.72 L245.28 412.94 A162.25 162.25 0 0 1 239.99 414.97 L222.21 366.10 A110.25 110.25 0 0 0 225.80 364.72Z"/><path fill="url(#w35)" d="M222.21 366.10 L239.99 414.97 A162.25 162.25 0 0 1 234.64 416.81 L218.57 367.35 A110.25 110.25 0 0 0 222.21 366.10Z"/><path fill="url(#w36)" d="M218.57 367.35 L234.64 416.81 A162.25 162.25 0 0 1 229.22 418.46 L214.89 368.48 A110.25 110.25 0 0 0 218.57 367.35Z"/><path fill="url(#w37)" d="M214.89 368.48 L229.22 418.46 A162.25 162.25 0 0 1 223.75 419.93 L211.17 369.48 A110.25 110.25 0 0 0 214.89 368.48Z"/><path fill="url(#w38)" d="M211.17 369.48 L223.75 419.93 A162.25 162.25 0 0 1 218.23 421.20 L207.42 370.34 A110.25 110.25 0 0 0 211.17 369.48Z"/><path fill="url(#w39)" d="M207.42 370.34 L218.23 421.20 A162.25 162.25 0 0 1 212.67 422.29 L203.64 371.08 A110.25 110.25 0 0 0 207.42 370.34Z"/><path fill="url(#w40)" d="M203.64 371.08 L212.67 422.29 A162.25 162.25 0 0 1 207.08 423.17 L199.84 371.68 A110.25 110.25 0 0 0 203.64 371.08Z"/><path fill="url(#w41)" d="M199.84 371.68 L207.08 423.17 A162.25 162.25 0 0 1 201.46 423.86 L196.02 372.15 A110.25 110.25 0 0 0 199.84 371.68Z"/><path fill="url(#w42)" d="M196.02 372.15 L201.46 423.86 A162.25 162.25 0 0 1 195.82 424.35 L192.19 372.48 A110.25 110.25 0 0 0 196.02 372.15Z"/><path fill="url(#w43)" d="M192.19 372.48 L195.82 424.35 A162.25 162.25 0 0 1 190.16 424.65 L188.35 372.68 A110.25 110.25 0 0 0 192.19 372.48Z"/><path fill="url(#w44)" d="M188.35 372.68 L190.16 424.65 A162.25 162.25 0 0 1 184.50 424.75 L184.50 372.75 A110.25 110.25 0 0 0 188.35 372.68Z"/><path fill="url(#w45)" d="M184.50 372.75 L184.50 424.75 A162.25 162.25 0 0 1 178.84 424.65 L180.65 372.68 A110.25 110.25 0 0 0 184.50 372.75Z"/><path fill="url(#w46)" d="M180.65 372.68 L178.84 424.65 A162.25 162.25 0 0 1 173.18 424.35 L176.81 372.48 A110.25 110.25 0 0 0 180.65 372.68Z"/><path fill="url(#w47)" d="M176.81 372.48 L173.18 424.35 A162.25 162.25 0 0 1 167.54 423.86 L172.98 372.15 A110.25 110.25 0 0 0 176.81 372.48Z"/><path fill="url(#w48)" d="M172.98 372.15 L167.54 423.86 A162.25 162.25 0 0 1 161.92 423.17 L169.16 371.68 A110.25 110.25 0 0 0 172.98 372.15Z"/><path fill="url(#w49)" d="M169.16 371.68 L161.92 423.17 A162.25 162.25 0 0 1 156.33 422.29 L165.36 371.08 A110.25 110.25 0 0 0 169.16 371.68Z"/><path fill="url(#w50)" d="M165.36 371.08 L156.33 422.29 A162.25 162.25 0 0 1 150.77 421.20 L161.58 370.34 A110.25 110.25 0 0 0 165.36 371.08Z"/><path fill="url(#w51)" d="M161.58 370.34 L150.77 421.20 A162.25 162.25 0 0 1 145.25 419.93 L157.83 369.48 A110.25 110.25 0 0 0 161.58 370.34Z"/><path fill="url(#w52)" d="M157.83 369.48 L145.25 419.93 A162.25 162.25 0 0 1 139.78 418.46 L154.11 368.48 A110.25 110.25 0 0 0 157.83 369.48Z"/><path fill="url(#w53)" d="M154.11 368.48 L139.78 418.46 A162.25 162.25 0 0 1 134.36 416.81 L150.43 367.35 A110.25 110.25 0 0 0 154.11 368.48Z"/><path fill="url(#w54)" d="M150.43 367.35 L134.36 416.81 A162.25 162.25 0 0 1 129.01 414.97 L146.79 366.10 A110.25 110.25 0 0 0 150.43 367.35Z"/><path fill="url(#w55)" d="M146.79 366.10 L129.01 414.97 A162.25 162.25 0 0 1 123.72 412.94 L143.20 364.72 A110.25 110.25 0 0 0 146.79 366.10Z"/><path fill="url(#w56)" d="M143.20 364.72 L123.72 412.94 A162.25 162.25 0 0 1 118.51 410.72 L139.66 363.22 A110.25 110.25 0 0 0 143.20 364.72Z"/><path fill="url(#w57)" d="M139.66 363.22 L118.51 410.72 A162.25 162.25 0 0 1 113.37 408.33 L136.17 361.59 A110.25 110.25 0 0 0 139.66 363.22Z"/><path fill="url(#w58)" d="M136.17 361.59 L113.37 408.33 A162.25 162.25 0 0 1 108.33 405.76 L132.74 359.84 A110.25 110.25 0 0 0 136.17 361.59Z"/><path fill="url(#w59)" d="M132.74 359.84 L108.33 405.76 A162.25 162.25 0 0 1 103.38 403.01 L129.38 357.98 A110.25 110.25 0 0 0 132.74 359.84Z"/><path fill="url(#w60)" d="M129.38 357.98 L103.38 403.01 A162.25 162.25 0 0 1 98.52 400.10 L126.08 356.00 A110.25 110.25 0 0 0 129.38 357.98Z"/><path fill="url(#w61)" d="M126.08 356.00 L98.52 400.10 A162.25 162.25 0 0 1 93.77 397.01 L122.85 353.90 A110.25 110.25 0 0 0 126.08 356.00Z"/><path fill="url(#w62)" d="M122.85 353.90 L93.77 397.01 A162.25 162.25 0 0 1 89.13 393.76 L119.70 351.69 A110.25 110.25 0 0 0 122.85 353.90Z"/><path fill="url(#w63)" d="M119.70 351.69 L89.13 393.76 A162.25 162.25 0 0 1 84.61 390.35 L116.62 349.38 A110.25 110.25 0 0 0 119.70 351.69Z"/><path fill="url(#w64)" d="M116.62 349.38 L84.61 390.35 A162.25 162.25 0 0 1 80.21 386.79 L113.63 346.96 A110.25 110.25 0 0 0 116.62 349.38Z"/><path fill="url(#w65)" d="M113.63 346.96 L80.21 386.79 A162.25 162.25 0 0 1 75.93 383.08 L110.73 344.43 A110.25 110.25 0 0 0 113.63 346.96Z"/><path fill="url(#w66)" d="M110.73 344.43 L75.93 383.08 A162.25 162.25 0 0 1 71.79 379.21 L107.91 341.81 A110.25 110.25 0 0 0 110.73 344.43Z"/><path fill="url(#w67)" d="M107.91 341.81 L71.79 379.21 A162.25 162.25 0 0 1 67.79 375.21 L105.19 339.09 A110.25 110.25 0 0 0 107.91 341.81Z"/><path fill="url(#w68)" d="M105.19 339.09 L67.79 375.21 A162.25 162.25 0 0 1 63.92 371.07 L102.57 336.27 A110.25 110.25 0 0 0 105.19 339.09Z"/><path fill="url(#w69)" d="M102.57 336.27 L63.92 371.07 A162.25 162.25 0 0 1 60.21 366.79 L100.04 333.37 A110.25 110.25 0 0 0 102.57 336.27Z"/><path fill="url(#w70)" d="M100.04 333.37 L60.21 366.79 A162.25 162.25 0 0 1 56.65 362.39 L97.62 330.38 A110.25 110.25 0 0 0 100.04 333.37Z"/><path fill="url(#w71)" d="M97.62 330.38 L56.65 362.39 A162.25 162.25 0 0 1 53.24 357.87 L95.31 327.30 A110.25 110.25 0 0 0 97.62 330.38Z"/><path fill="url(#w72)" d="M95.31 327.30 L53.24 357.87 A162.25 162.25 0 0 1 49.99 353.23 L93.10 324.15 A110.25 110.25 0 0 0 95.31 327.30Z"/><path fill="url(#w73)" d="M93.10 324.15 L49.99 353.23 A162.25 162.25 0 0 1 46.90 348.48 L91.00 320.92 A110.25 110.25 0 0 0 93.10 324.15Z"/><path fill="url(#w74)" d="M91.00 320.92 L46.90 348.48 A162.25 162.25 0 0 1 43.99 343.62 L89.02 317.62 A110.25 110.25 0 0 0 91.00 320.92Z"/><path fill="url(#w75)" d="M89.02 317.62 L43.99 343.62 A162.25 162.25 0 0 1 41.24 338.67 L87.16 314.26 A110.25 110.25 0 0 0 89.02 317.62Z"/><path fill="url(#w76)" d="M87.16 314.26 L41.24 338.67 A162.25 162.25 0 0 1 38.67 333.63 L85.41 310.83 A110.25 110.25 0 0 0 87.16 314.26Z"/><path fill="url(#w77)" d="M85.41 310.83 L38.67 333.63 A162.25 162.25 0 0 1 36.28 328.49 L83.78 307.34 A110.25 110.25 0 0 0 85.41 310.83Z"/><path fill="url(#w78)" d="M83.78 307.34 L36.28 328.49 A162.25 162.25 0 0 1 34.06 323.28 L82.28 303.80 A110.25 110.25 0 0 0 83.78 307.34Z"/><path fill="url(#w79)" d="M82.28 303.80 L34.06 323.28 A162.25 162.25 0 0 1 32.03 317.99 L80.90 300.21 A110.25 110.25 0 0 0 82.28 303.80Z"/><path fill="url(#w80)" d="M80.90 300.21 L32.03 317.99 A162.25 162.25 0 0 1 30.19 312.64 L79.65 296.57 A110.25 110.25 0 0 0 80.90 300.21Z"/><path fill="url(#w81)" d="M79.65 296.57 L30.19 312.64 A162.25 162.25 0 0 1 28.54 307.22 L78.52 292.89 A110.25 110.25 0 0 0 79.65 296.57Z"/><path fill="url(#w82)" d="M78.52 292.89 L28.54 307.22 A162.25 162.25 0 0 1 27.07 301.75 L77.52 289.17 A110.25 110.25 0 0 0 78.52 292.89Z"/><path fill="url(#w83)" d="M77.52 289.17 L27.07 301.75 A162.25 162.25 0 0 1 25.80 296.23 L76.66 285.42 A110.25 110.25 0 0 0 77.52 289.17Z"/><path fill="url(#w84)" d="M76.66 285.42 L25.80 296.23 A162.25 162.25 0 0 1 24.71 290.67 L75.92 281.64 A110.25 110.25 0 0 0 76.66 285.42Z"/><path fill="url(#w85)" d="M75.92 281.64 L24.71 290.67 A162.25 162.25 0 0 1 23.83 285.08 L75.32 277.84 A110.25 110.25 0 0 0 75.92 281.64Z"/><path fill="url(#w86)" d="M75.32 277.84 L23.83 285.08 A162.25 162.25 0 0 1 23.14 279.46 L74.85 274.02 A110.25 110.25 0 0 0 75.32 277.84Z"/><path fill="url(#w87)" d="M74.85 274.02 L23.14 279.46 A162.25 162.25 0 0 1 22.65 273.82 L74.52 270.19 A110.25 110.25 0 0 0 74.85 274.02Z"/><path fill="url(#w88)" d="M74.52 270.19 L22.65 273.82 A162.25 162.25 0 0 1 22.35 268.16 L74.32 266.35 A110.25 110.25 0 0 0 74.52 270.19Z"/><path fill="url(#w89)" d="M74.32 266.35 L22.35 268.16 A162.25 162.25 0 0 1 22.25 262.50 L74.25 262.50 A110.25 110.25 0 0 0 74.32 266.35Z"/><path fill="url(#w90)" d="M74.25 262.50 L22.25 262.50 A162.25 162.25 0 0 1 22.35 256.84 L74.32 258.65 A110.25 110.25 0 0 0 74.25 262.50Z"/><path fill="url(#w91)" d="M74.32 258.65 L22.35 256.84 A162.25 162.25 0 0 1 22.65 251.18 L74.52 254.81 A110.25 110.25 0 0 0 74.32 258.65Z"/><path fill="url(#w92)" d="M74.52 254.81 L22.65 251.18 A162.25 162.25 0 0 1 23.14 245.54 L74.85 250.98 A110.25 110.25 0 0 0 74.52 254.81Z"/><path fill="url(#w93)" d="M74.85 250.98 L23.14 245.54 A162.25 162.25 0 0 1 23.83 239.92 L75.32 247.16 A110.25 110.25 0 0 0 74.85 250.98Z"/><path fill="url(#w94)" d="M75.32 247.16 L23.83 239.92 A162.25 162.25 0 0 1 24.71 234.33 L75.92 243.36 A110.25 110.25 0 0 0 75.32 247.16Z"/><path fill="url(#w95)" d="M75.92 243.36 L24.71 234.33 A162.25 162.25 0 0 1 25.80 228.77 L76.66 239.58 A110.25 110.25 0 0 0 75.92 243.36Z"/><path fill="url(#w96)" d="M76.66 239.58 L25.80 228.77 A162.25 162.25 0 0 1 27.07 223.25 L77.52 235.83 A110.25 110.25 0 0 0 76.66 239.58Z"/><path fill="url(#w97)" d="M77.52 235.83 L27.07 223.25 A162.25 162.25 0 0 1 28.54 217.78 L78.52 232.11 A110.25 110.25 0 0 0 77.52 235.83Z"/><path fill="url(#w98)" d="M78.52 232.11 L28.54 217.78 A162.25 162.25 0 0 1 30.19 212.36 L79.65 228.43 A110.25 110.25 0 0 0 78.52 232.11Z"/><path fill="url(#w99)" d="M79.65 228.43 L30.19 212.36 A162.25 162.25 0 0 1 32.03 207.01 L80.90 224.79 A110.25 110.25 0 0 0 79.65 228.43Z"/><path fill="url(#w100)" d="M80.90 224.79 L32.03 207.01 A162.25 162.25 0 0 1 34.06 201.72 L82.28 221.20 A110.25 110.25 0 0 0 80.90 224.79Z"/><path fill="url(#w101)" d="M82.28 221.20 L34.06 201.72 A162.25 162.25 0 0 1 36.28 196.51 L83.78 217.66 A110.25 110.25 0 0 0 82.28 221.20Z"/><path fill="url(#w102)" d="M83.78 217.66 L36.28 196.51 A162.25 162.25 0 0 1 38.67 191.37 L85.41 214.17 A110.25 110.25 0 0 0 83.78 217.66Z"/><path fill="url(#w103)" d="M85.41 214.17 L38.67 191.37 A162.25 162.25 0 0 1 41.24 186.33 L87.16 210.74 A110.25 110.25 0 0 0 85.41 214.17Z"/><path fill="url(#w104)" d="M87.16 210.74 L41.24 186.33 A162.25 162.25 0 0 1 43.99 181.38 L89.02 207.38 A110.25 110.25 0 0 0 87.16 210.74Z"/><path fill="url(#w105)" d="M89.02 207.38 L43.99 181.38 A162.25 162.25 0 0 1 46.90 176.52 L91.00 204.08 A110.25 110.25 0 0 0 89.02 207.38Z"/><path fill="url(#w106)" d="M91.00 204.08 L46.90 176.52 A162.25 162.25 0 0 1 49.99 171.77 L93.10 200.85 A110.25 110.25 0 0 0 91.00 204.08Z"/><path fill="url(#w107)" d="M93.10 200.85 L49.99 171.77 A162.25 162.25 0 0 1 53.24 167.13 L95.31 197.70 A110.25 110.25 0 0 0 93.10 200.85Z"/><path fill="url(#w108)" d="M95.31 197.70 L53.24 167.13 A162.25 162.25 0 0 1 56.65 162.61 L97.62 194.62 A110.25 110.25 0 0 0 95.31 197.70Z"/><path fill="url(#w109)" d="M97.62 194.62 L56.65 162.61 A162.25 162.25 0 0 1 60.21 158.21 L100.04 191.63 A110.25 110.25 0 0 0 97.62 194.62Z"/><path fill="url(#w110)" d="M100.04 191.63 L60.21 158.21 A162.25 162.25 0 0 1 63.92 153.93 L102.57 188.73 A110.25 110.25 0 0 0 100.04 191.63Z"/><path fill="url(#w111)" d="M102.57 188.73 L63.92 153.93 A162.25 162.25 0 0 1 67.79 149.79 L105.19 185.91 A110.25 110.25 0 0 0 102.57 188.73Z"/><path fill="url(#w112)" d="M105.19 185.91 L67.79 149.79 A162.25 162.25 0 0 1 71.79 145.79 L107.91 183.19 A110.25 110.25 0 0 0 105.19 185.91Z"/><path fill="url(#w113)" d="M107.91 183.19 L71.79 145.79 A162.25 162.25 0 0 1 75.93 141.92 L110.73 180.57 A110.25 110.25 0 0 0 107.91 183.19Z"/><path fill="url(#w114)" d="M110.73 180.57 L75.93 141.92 A162.25 162.25 0 0 1 80.21 138.21 L113.63 178.04 A110.25 110.25 0 0 0 110.73 180.57Z"/><path fill="url(#w115)" d="M113.63 178.04 L80.21 138.21 A162.25 162.25 0 0 1 84.61 134.65 L116.62 175.62 A110.25 110.25 0 0 0 113.63 178.04Z"/><path fill="url(#w116)" d="M116.62 175.62 L84.61 134.65 A162.25 162.25 0 0 1 89.13 131.24 L119.70 173.31 A110.25 110.25 0 0 0 116.62 175.62Z"/><path fill="url(#w117)" d="M119.70 173.31 L89.13 131.24 A162.25 162.25 0 0 1 93.77 127.99 L122.85 171.10 A110.25 110.25 0 0 0 119.70 173.31Z"/><path fill="url(#w118)" d="M122.85 171.10 L93.77 127.99 A162.25 162.25 0 0 1 98.52 124.90 L126.08 169.00 A110.25 110.25 0 0 0 122.85 171.10Z"/><path fill="url(#w119)" d="M126.08 169.00 L98.52 124.90 A162.25 162.25 0 0 1 103.37 121.99 L129.37 167.02 A110.25 110.25 0 0 0 126.08 169.00Z"/><path fill="url(#w120)" d="M129.37 167.02 L103.37 121.99 A162.25 162.25 0 0 1 108.33 119.24 L132.74 165.16 A110.25 110.25 0 0 0 129.37 167.02Z"/><path fill="url(#w121)" d="M132.74 165.16 L108.33 119.24 A162.25 162.25 0 0 1 113.37 116.67 L136.17 163.41 A110.25 110.25 0 0 0 132.74 165.16Z"/><path fill="url(#w122)" d="M136.17 163.41 L113.37 116.67 A162.25 162.25 0 0 1 118.51 114.28 L139.66 161.78 A110.25 110.25 0 0 0 136.17 163.41Z"/><path fill="url(#w123)" d="M139.66 161.78 L118.51 114.28 A162.25 162.25 0 0 1 123.72 112.06 L143.20 160.28 A110.25 110.25 0 0 0 139.66 161.78Z"/><path fill="url(#w124)" d="M143.20 160.28 L123.72 112.06 A162.25 162.25 0 0 1 129.01 110.03 L146.79 158.90 A110.25 110.25 0 0 0 143.20 160.28Z"/><path fill="url(#w125)" d="M146.79 158.90 L129.01 110.03 A162.25 162.25 0 0 1 134.36 108.19 L150.43 157.65 A110.25 110.25 0 0 0 146.79 158.90Z"/><path fill="url(#w126)" d="M150.43 157.65 L134.36 108.19 A162.25 162.25 0 0 1 139.78 106.54 L154.11 156.52 A110.25 110.25 0 0 0 150.43 157.65Z"/><path fill="url(#w127)" d="M154.11 156.52 L139.78 106.54 A162.25 162.25 0 0 1 145.25 105.07 L157.83 155.52 A110.25 110.25 0 0 0 154.11 156.52Z"/><path fill="url(#w128)" d="M157.83 155.52 L145.25 105.07 A162.25 162.25 0 0 1 150.77 103.80 L161.58 154.66 A110.25 110.25 0 0 0 157.83 155.52Z"/><path fill="url(#w129)" d="M161.58 154.66 L150.77 103.80 A162.25 162.25 0 0 1 156.33 102.71 L165.36 153.92 A110.25 110.25 0 0 0 161.58 154.66Z"/><path fill="url(#w130)" d="M165.36 153.92 L156.33 102.71 A162.25 162.25 0 0 1 161.92 101.83 L169.16 153.32 A110.25 110.25 0 0 0 165.36 153.92Z"/><path fill="url(#w131)" d="M169.16 153.32 L161.92 101.83 A162.25 162.25 0 0 1 167.54 101.14 L172.98 152.85 A110.25 110.25 0 0 0 169.16 153.32Z"/><path fill="url(#w132)" d="M172.98 152.85 L167.54 101.14 A162.25 162.25 0 0 1 173.18 100.65 L176.81 152.52 A110.25 110.25 0 0 0 172.98 152.85Z"/><path fill="url(#w133)" d="M176.81 152.52 L173.18 100.65 A162.25 162.25 0 0 1 178.84 100.35 L180.65 152.32 A110.25 110.25 0 0 0 176.81 152.52Z"/><path fill="url(#w134)" d="M180.65 152.32 L178.84 100.35 A162.25 162.25 0 0 1 184.50 100.25 L184.50 152.25 A110.25 110.25 0 0 0 180.65 152.32Z"/><path fill="url(#w135)" d="M184.50 152.25 L184.50 100.25 A162.25 162.25 0 0 1 190.16 100.35 L188.35 152.32 A110.25 110.25 0 0 0 184.50 152.25Z"/><path fill="url(#w136)" d="M188.35 152.32 L190.16 100.35 A162.25 162.25 0 0 1 195.82 100.65 L192.19 152.52 A110.25 110.25 0 0 0 188.35 152.32Z"/><path fill="url(#w137)" d="M192.19 152.52 L195.82 100.65 A162.25 162.25 0 0 1 201.46 101.14 L196.02 152.85 A110.25 110.25 0 0 0 192.19 152.52Z"/><path fill="url(#w138)" d="M196.02 152.85 L201.46 101.14 A162.25 162.25 0 0 1 207.08 101.83 L199.84 153.32 A110.25 110.25 0 0 0 196.02 152.85Z"/><path fill="url(#w139)" d="M199.84 153.32 L207.08 101.83 A162.25 162.25 0 0 1 212.67 102.71 L203.64 153.92 A110.25 110.25 0 0 0 199.84 153.32Z"/><path fill="url(#w140)" d="M203.64 153.92 L212.67 102.71 A162.25 162.25 0 0 1 218.23 103.80 L207.42 154.66 A110.25 110.25 0 0 0 203.64 153.92Z"/><path fill="url(#w141)" d="M207.42 154.66 L218.23 103.80 A162.25 162.25 0 0 1 223.75 105.07 L211.17 155.52 A110.25 110.25 0 0 0 207.42 154.66Z"/><path fill="url(#w142)" d="M211.17 155.52 L223.75 105.07 A162.25 162.25 0 0 1 229.22 106.54 L214.89 156.52 A110.25 110.25 0 0 0 211.17 155.52Z"/><path fill="url(#w143)" d="M214.89 156.52 L229.22 106.54 A162.25 162.25 0 0 1 234.64 108.19 L218.57 157.65 A110.25 110.25 0 0 0 214.89 156.52Z"/><path fill="url(#w144)" d="M218.57 157.65 L234.64 108.19 A162.25 162.25 0 0 1 239.99 110.03 L222.21 158.90 A110.25 110.25 0 0 0 218.57 157.65Z"/><path fill="url(#w145)" d="M222.21 158.90 L239.99 110.03 A162.25 162.25 0 0 1 245.28 112.06 L225.80 160.28 A110.25 110.25 0 0 0 222.21 158.90Z"/><path fill="url(#w146)" d="M225.80 160.28 L245.28 112.06 A162.25 162.25 0 0 1 250.49 114.28 L229.34 161.78 A110.25 110.25 0 0 0 225.80 160.28Z"/><path fill="url(#w147)" d="M229.34 161.78 L250.49 114.28 A162.25 162.25 0 0 1 255.63 116.67 L232.83 163.41 A110.25 110.25 0 0 0 229.34 161.78Z"/><path fill="url(#w148)" d="M232.83 163.41 L255.63 116.67 A162.25 162.25 0 0 1 260.67 119.24 L236.26 165.16 A110.25 110.25 0 0 0 232.83 163.41Z"/><path fill="url(#w149)" d="M236.26 165.16 L260.67 119.24 A162.25 162.25 0 0 1 265.62 121.99 L239.62 167.02 A110.25 110.25 0 0 0 236.26 165.16Z"/><path fill="url(#w150)" d="M239.62 167.02 L265.62 121.99 A162.25 162.25 0 0 1 270.48 124.90 L242.92 169.00 A110.25 110.25 0 0 0 239.62 167.02Z"/><path fill="url(#w151)" d="M242.92 169.00 L270.48 124.90 A162.25 162.25 0 0 1 275.23 127.99 L246.15 171.10 A110.25 110.25 0 0 0 242.92 169.00Z"/><path fill="url(#w152)" d="M246.15 171.10 L275.23 127.99 A162.25 162.25 0 0 1 279.87 131.24 L249.30 173.31 A110.25 110.25 0 0 0 246.15 171.10Z"/><path fill="url(#w153)" d="M249.30 173.31 L279.87 131.24 A162.25 162.25 0 0 1 284.39 134.65 L252.38 175.62 A110.25 110.25 0 0 0 249.30 173.31Z"/><path fill="url(#w154)" d="M252.38 175.62 L284.39 134.65 A162.25 162.25 0 0 1 288.79 138.21 L255.37 178.04 A110.25 110.25 0 0 0 252.38 175.62Z"/><path fill="url(#w155)" d="M255.37 178.04 L288.79 138.21 A162.25 162.25 0 0 1 293.07 141.92 L258.27 180.57 A110.25 110.25 0 0 0 255.37 178.04Z"/><path fill="url(#w156)" d="M258.27 180.57 L293.07 141.92 A162.25 162.25 0 0 1 297.21 145.79 L261.09 183.19 A110.25 110.25 0 0 0 258.27 180.57Z"/><path fill="url(#w157)" d="M261.09 183.19 L297.21 145.79 A162.25 162.25 0 0 1 301.21 149.79 L263.81 185.91 A110.25 110.25 0 0 0 261.09 183.19Z"/><path fill="url(#w158)" d="M263.81 185.91 L301.21 149.79 A162.25 162.25 0 0 1 305.08 153.93 L266.43 188.73 A110.25 110.25 0 0 0 263.81 185.91Z"/><path fill="url(#w159)" d="M266.43 188.73 L305.08 153.93 A162.25 162.25 0 0 1 308.79 158.21 L268.96 191.63 A110.25 110.25 0 0 0 266.43 188.73Z"/><path fill="url(#w160)" d="M268.96 191.63 L308.79 158.21 A162.25 162.25 0 0 1 312.35 162.61 L271.38 194.62 A110.25 110.25 0 0 0 268.96 191.63Z"/><path fill="url(#w161)" d="M271.38 194.62 L312.35 162.61 A162.25 162.25 0 0 1 315.76 167.13 L273.69 197.70 A110.25 110.25 0 0 0 271.38 194.62Z"/><path fill="url(#w162)" d="M273.69 197.70 L315.76 167.13 A162.25 162.25 0 0 1 319.01 171.77 L275.90 200.85 A110.25 110.25 0 0 0 273.69 197.70Z"/><path fill="url(#w163)" d="M275.90 200.85 L319.01 171.77 A162.25 162.25 0 0 1 322.10 176.52 L278.00 204.08 A110.25 110.25 0 0 0 275.90 200.85Z"/><path fill="url(#w164)" d="M278.00 204.08 L322.10 176.52 A162.25 162.25 0 0 1 325.01 181.37 L279.98 207.37 A110.25 110.25 0 0 0 278.00 204.08Z"/><path fill="url(#w165)" d="M279.98 207.37 L325.01 181.37 A162.25 162.25 0 0 1 327.76 186.33 L281.84 210.74 A110.25 110.25 0 0 0 279.98 207.37Z"/><path fill="url(#w166)" d="M281.84 210.74 L327.76 186.33 A162.25 162.25 0 0 1 330.33 191.37 L283.59 214.17 A110.25 110.25 0 0 0 281.84 210.74Z"/><path fill="url(#w167)" d="M283.59 214.17 L330.33 191.37 A162.25 162.25 0 0 1 332.72 196.51 L285.22 217.66 A110.25 110.25 0 0 0 283.59 214.17Z"/><path fill="url(#w168)" d="M285.22 217.66 L332.72 196.51 A162.25 162.25 0 0 1 334.94 201.72 L286.72 221.20 A110.25 110.25 0 0 0 285.22 217.66Z"/><path fill="url(#w169)" d="M286.72 221.20 L334.94 201.72 A162.25 162.25 0 0 1 336.97 207.01 L288.10 224.79 A110.25 110.25 0 0 0 286.72 221.20Z"/><path fill="url(#w170)" d="M288.10 224.79 L336.97 207.01 A162.25 162.25 0 0 1 338.81 212.36 L289.35 228.43 A110.25 110.25 0 0 0 288.10 224.79Z"/><path fill="url(#w171)" d="M289.35 228.43 L338.81 212.36 A162.25 162.25 0 0 1 340.46 217.78 L290.48 232.11 A110.25 110.25 0 0 0 289.35 228.43Z"/><path fill="url(#w172)" d="M290.48 232.11 L340.46 217.78 A162.25 162.25 0 0 1 341.93 223.25 L291.48 235.83 A110.25 110.25 0 0 0 290.48 232.11Z"/><path fill="url(#w173)" d="M291.48 235.83 L341.93 223.25 A162.25 162.25 0 0 1 343.20 228.77 L292.34 239.58 A110.25 110.25 0 0 0 291.48 235.83Z"/><path fill="url(#w174)" d="M292.34 239.58 L343.20 228.77 A162.25 162.25 0 0 1 344.29 234.33 L293.08 243.36 A110.25 110.25 0 0 0 292.34 239.58Z"/><path fill="url(#w175)" d="M293.08 243.36 L344.29 234.33 A162.25 162.25 0 0 1 345.17 239.92 L293.68 247.16 A110.25 110.25 0 0 0 293.08 243.36Z"/><path fill="url(#w176)" d="M293.68 247.16 L345.17 239.92 A162.25 162.25 0 0 1 345.86 245.54 L294.15 250.98 A110.25 110.25 0 0 0 293.68 247.16Z"/><path fill="url(#w177)" d="M294.15 250.98 L345.86 245.54 A162.25 162.25 0 0 1 346.35 251.18 L294.48 254.81 A110.25 110.25 0 0 0 294.15 250.98Z"/><path fill="url(#w178)" d="M294.48 254.81 L346.35 251.18 A162.25 162.25 0 0 1 346.65 256.84 L294.68 258.65 A110.25 110.25 0 0 0 294.48 254.81Z"/><path fill="url(#w179)" d="M294.68 258.65 L346.65 256.84 A162.25 162.25 0 0 1 346.75 262.50 L294.75 262.50 A110.25 110.25 0 0 0 294.68 258.65Z"/></g>
<circle cx="184.5" cy="262.5" r="136.25" fill="none" stroke="#3d86e6" stroke-width="1.25"/>
<g stroke="#74a8ee" stroke-width="1" fill="none"><rect x="48.5" y="126.5" width="272" height="272.5"/><path d="M184.5 101 V126"/></g>
<g fill="#ffffff" stroke="#8fbaf2" stroke-width="1.6">
<circle cx="48.5" cy="126.3" r="3.75"/><circle cx="184.5" cy="126.3" r="3.75"/><circle cx="320.5" cy="126.3" r="3.75"/><circle cx="48.5" cy="262.5" r="3.75"/><circle cx="320.5" cy="262.5" r="3.75"/><circle cx="48.5" cy="399" r="3.75"/><circle cx="184.5" cy="399" r="3.75"/><circle cx="320.5" cy="399" r="3.75"/><circle cx="184.5" cy="96.5" r="3.75"/></g></svg>
<div class="b" style="left:403px;top:6px;width:631px;height:544px;background:#363636;border-radius:0px;"></div>
<div class="b" style="left:403px;top:6px;width:630px;height:22px;background:#3b3b3b;border-radius:0px;"></div>
<div class="b" style="left:1033px;top:6px;width:2px;height:544px;background:#282828;border-radius:0px;"></div>
<span class="t" style="left:682.3px;top:10.34px;font-size:12px;letter-spacing:-0.306px;color:#dedede;">Layer Effects</span>
<svg class="b" style="left:1017px;top:11px" width="12" height="12" viewBox="0 0 12 12"><path d="M1.3 2 L10.7 10 M10.7 2 L1.3 10" stroke="#e2e2e2" stroke-width="1.7" fill="none"/></svg>
<div class="b" style="left:403px;top:28px;width:180px;height:460px;background:#323232;border-radius:0px;box-sizing:border-box;border:1px solid #2a2a2a;"></div>
<div class="b" style="left:406px;top:31px;width:174px;height:25px;background:#4b6a93;border-radius:2.5px;"></div>
<div class="b" style="left:412px;top:37px;width:12px;height:12px;background:#1f1f1f;border-radius:2px;"></div>
<svg class="b" style="left:412px;top:37px" width="12" height="12" viewBox="0 0 12 12"><path d="M2.4 6.5 L4.9 8.7 L9.4 3.7" stroke="#ececec" stroke-width="1.2" fill="none"/></svg>
<span class="t" style="left:428.8px;top:36.19px;font-size:11px;letter-spacing:-0.219px;color:#d6dae0;">Bevel / Emboss</span>
<div class="b" style="left:406px;top:60px;width:174px;height:25px;background:#383838;border-radius:2.5px;"></div>
<div class="b" style="left:412px;top:66px;width:12px;height:12px;background:#1f1f1f;border-radius:2px;"></div>
<span class="t" style="left:428.8px;top:65.19px;font-size:11px;letter-spacing:0.100px;color:#c6c6c6;">Outline</span>
<svg class="b" style="left:544px;top:66px" width="30" height="12" viewBox="0 0 30 12"><path d="M1.8 6 H10.3 M6.05 1.75 V10.25" stroke="#d2d2d2" stroke-width="1.9" fill="none"/><path d="M20.5 2.5 L27.5 9.5 M27.5 2.5 L20.5 9.5" stroke="#cccccc" stroke-width="1.6" fill="none"/></svg>
<div class="b" style="left:406px;top:89px;width:174px;height:25px;background:#383838;border-radius:2.5px;"></div>
<div class="b" style="left:412px;top:95px;width:12px;height:12px;background:#1f1f1f;border-radius:2px;"></div>
<span class="t" style="left:428.8px;top:94.19px;font-size:11px;letter-spacing:-0.210px;color:#c6c6c6;">3D</span>
<div class="b" style="left:406px;top:118px;width:174px;height:25px;background:#383838;border-radius:2.5px;"></div>
<div class="b" style="left:412px;top:124px;width:12px;height:12px;background:#1f1f1f;border-radius:2px;"></div>
<span class="t" style="left:428.8px;top:123.19px;font-size:11px;letter-spacing:-0.116px;color:#c6c6c6;">Inner Shadow</span>
<svg class="b" style="left:544px;top:124px" width="30" height="12" viewBox="0 0 30 12"><path d="M1.8 6 H10.3 M6.05 1.75 V10.25" stroke="#d2d2d2" stroke-width="1.9" fill="none"/><path d="M20.5 2.5 L27.5 9.5 M27.5 2.5 L20.5 9.5" stroke="#cccccc" stroke-width="1.6" fill="none"/></svg>
<div class="b" style="left:406px;top:147px;width:174px;height:25px;background:#383838;border-radius:2.5px;"></div>
<div class="b" style="left:412px;top:153px;width:12px;height:12px;background:#1f1f1f;border-radius:2px;"></div>
<span class="t" style="left:428.8px;top:152.19px;font-size:11px;letter-spacing:-0.063px;color:#c6c6c6;">Inner Glow</span>
<div class="b" style="left:406px;top:176px;width:174px;height:25px;background:#383838;border-radius:2.5px;"></div>
<div class="b" style="left:412px;top:182px;width:12px;height:12px;background:#1f1f1f;border-radius:2px;"></div>
<span class="t" style="left:428.8px;top:181.19px;font-size:11px;letter-spacing:-0.102px;color:#c6c6c6;">Color Overlay</span>
<svg class="b" style="left:544px;top:182px" width="30" height="12" viewBox="0 0 30 12"><path d="M1.8 6 H10.3 M6.05 1.75 V10.25" stroke="#d2d2d2" stroke-width="1.9" fill="none"/><path d="M20.5 2.5 L27.5 9.5 M27.5 2.5 L20.5 9.5" stroke="#cccccc" stroke-width="1.6" fill="none"/></svg>
<div class="b" style="left:406px;top:205px;width:174px;height:25px;background:#383838;border-radius:2.5px;"></div>
<div class="b" style="left:412px;top:211px;width:12px;height:12px;background:#1f1f1f;border-radius:2px;"></div>
<span class="t" style="left:428.8px;top:210.19px;font-size:11px;letter-spacing:-0.100px;color:#c6c6c6;">Gradient Overlay</span>
<svg class="b" style="left:544px;top:211px" width="30" height="12" viewBox="0 0 30 12"><path d="M1.8 6 H10.3 M6.05 1.75 V10.25" stroke="#d2d2d2" stroke-width="1.9" fill="none"/><path d="M20.5 2.5 L27.5 9.5 M27.5 2.5 L20.5 9.5" stroke="#cccccc" stroke-width="1.6" fill="none"/></svg>
<div class="b" style="left:406px;top:234px;width:174px;height:25px;background:#383838;border-radius:2.5px;"></div>
<div class="b" style="left:412px;top:240px;width:12px;height:12px;background:#1f1f1f;border-radius:2px;"></div>
<span class="t" style="left:428.8px;top:239.19px;font-size:11px;letter-spacing:-0.020px;color:#c6c6c6;">Outer Glow</span>
<div class="b" style="left:406px;top:263px;width:174px;height:25px;background:#383838;border-radius:2.5px;"></div>
<div class="b" style="left:412px;top:269px;width:12px;height:12px;background:#1f1f1f;border-radius:2px;"></div>
<span class="t" style="left:428.8px;top:268.19px;font-size:11px;letter-spacing:-0.080px;color:#c6c6c6;">Outer Shadow</span>
<svg class="b" style="left:544px;top:269px" width="30" height="12" viewBox="0 0 30 12"><path d="M1.8 6 H10.3 M6.05 1.75 V10.25" stroke="#d2d2d2" stroke-width="1.9" fill="none"/><path d="M20.5 2.5 L27.5 9.5 M27.5 2.5 L20.5 9.5" stroke="#cccccc" stroke-width="1.6" fill="none"/></svg>
<div class="b" style="left:406px;top:292px;width:174px;height:25px;background:#383838;border-radius:2.5px;"></div>
<div class="b" style="left:412px;top:298px;width:12px;height:12px;background:#1f1f1f;border-radius:2px;"></div>
<span class="t" style="left:428.8px;top:297.19px;font-size:11px;letter-spacing:-0.297px;color:#c6c6c6;">Gaussian Blur</span>
<span class="t" style="left:598.9px;top:55.19px;font-size:11px;letter-spacing:-0.247px;color:#b6b6b6;">Type:</span>
<span class="t" style="left:598.9px;top:78.19px;font-size:11px;letter-spacing:-0.385px;color:#b6b6b6;">Radius:</span>
<span class="t" style="left:598.9px;top:102.19px;font-size:11px;letter-spacing:-0.023px;color:#727272;">Depth:</span>
<span class="t" style="left:598.9px;top:126.19px;font-size:11px;letter-spacing:-0.149px;color:#b6b6b6;">Soften:</span>
<span class="t" style="left:598.9px;top:179.19px;font-size:11px;letter-spacing:-0.112px;color:#b6b6b6;">Profile:</span>
<span class="t" style="left:598.9px;top:263.19px;font-size:11px;letter-spacing:0.003px;color:#b6b6b6;">Direction:</span>
<span class="t" style="left:598.9px;top:322.19px;font-size:11px;letter-spacing:0.146px;color:#b6b6b6;">Highlight:</span>
<span class="t" style="left:598.9px;top:353.19px;font-size:11px;letter-spacing:-0.273px;color:#b6b6b6;">Shadow:</span>
<div class="b" style="left:700px;top:54px;width:98px;height:17px;background:#464646;border-radius:2px;"></div>
<span class="t" style="left:704.0px;top:55.19px;font-size:11px;letter-spacing:-0.033px;color:#dedede;">Pillow</span>
<svg class="b" style="left:786px;top:58px" width="10" height="8" viewBox="0 0 10 8"><path d="M2.3 3.1 L5 5.6 L7.7 3.1" stroke="#e2e2e2" stroke-width="1.35" fill="none"/></svg>
<div class="b" style="left:701px;top:83px;width:217px;height:5px;background:#222222;border-radius:2.5px;"></div>
<div class="b" style="left:702px;top:84px;width:70.20000000000005px;height:4px;background:#5c84b8;border-radius:2px;background:linear-gradient(#5c84b8 0 75%,#45618a 75% 100%);"></div>
<div class="b" style="left:767.2px;top:81px;width:10px;height:10px;background:#dcdcdc;border-radius:5px;"></div>
<div class="b" style="left:701px;top:107px;width:217px;height:5px;background:#2d2d2d;border-radius:2.5px;"></div>
<div class="b" style="left:767.2px;top:105px;width:10px;height:10px;background:#5c5c5c;border-radius:5px;"></div>
<div class="b" style="left:701px;top:131px;width:217px;height:5px;background:#222222;border-radius:2.5px;"></div>
<div class="b" style="left:700.8px;top:129px;width:10px;height:10px;background:#dcdcdc;border-radius:5px;"></div>
<div class="b" style="left:923px;top:76px;width:75px;height:19.5px;background:#1f1f1f;border-radius:2.5px;"></div>
<span class="t" style="left:928.8px;top:78.19px;font-size:11px;letter-spacing:-0.083px;color:#dedede;">5 px</span>
<div class="b" style="left:923px;top:100px;width:75px;height:19.5px;background:#323232;border-radius:2.5px;"></div>
<span class="t" style="left:928.8px;top:102.19px;font-size:11px;letter-spacing:-0.083px;color:#727272;">5 px</span>
<div class="b" style="left:923px;top:124px;width:75px;height:19.5px;background:#1f1f1f;border-radius:2.5px;"></div>
<span class="t" style="left:928.8px;top:126.19px;font-size:11px;letter-spacing:-0.083px;color:#dedede;">0 px</span>
<svg class="b" style="left:1000px;top:80px" width="18" height="32" viewBox="0 0 18 32" fill="none">
<path d="M3.9 4.5 H10.15 V7.2 M3.9 27.45 H10.15 V24.8" stroke="#d2d2d2" stroke-width="1.1"/>
<path d="M10.1 13.6 V18.4" stroke="#9a9a9a" stroke-width="1.7"/>
<path d="M10.1 9.3 V11 M10.1 21 V22.7" stroke="#8a8a8a" stroke-width="1.2"/>
<rect x="7.55" y="7.65" width="5.05" height="6.6" rx="1.3" stroke="#d2d2d2" stroke-width="1.1"/>
<rect x="7.55" y="17.95" width="5.05" height="6.6" rx="1.3" stroke="#d2d2d2" stroke-width="1.1"/></svg>
<div class="b" style="left:700px;top:152.5px;width:63px;height:63px;background:#1a1a1a;border-radius:1.5px;box-sizing:border-box;border:1px solid #4e4e4e;"></div>
<div class="b" style="left:773px;top:167px;width:12px;height:12px;background:#1f1f1f;border-radius:2px;"></div>
<span class="t" style="left:789.9px;top:165.19px;font-size:11px;letter-spacing:0.037px;color:#c6c6c6;">Invert</span>
<div class="b" style="left:772px;top:184px;width:83px;height:19px;background:#464646;border-radius:2.5px;"></div>
<span class="t" style="left:776.8px;top:185.69px;font-size:11px;letter-spacing:-0.139px;color:#dedede;">Remove Profile</span>
<svg class="b" style="left:696px;top:237px" width="70" height="70" viewBox="0 0 70 70">
<defs><radialGradient id="sg" cx="0.5" cy="0.46" r="0.5"><stop offset="0" stop-color="#444"/><stop offset="0.55" stop-color="#414141"/><stop offset="0.85" stop-color="#3b3b3b"/><stop offset="1" stop-color="#383838"/></radialGradient>
<linearGradient id="rim" x1="0" y1="0" x2="0" y2="1"><stop offset="0" stop-color="#565656"/><stop offset="0.45" stop-color="#3c3c3c" stop-opacity="0.6"/><stop offset="1" stop-color="#363636" stop-opacity="0"/></linearGradient></defs>
<circle cx="35.5" cy="35" r="29.6" fill="url(#sg)" stroke="url(#rim)" stroke-width="0.9"/>
<circle cx="22.1" cy="21.1" r="4.1" fill="#ffffff"/></svg>
<span class="t" style="left:852.7px;top:249.19px;font-size:11px;letter-spacing:-0.001px;color:#b6b6b6;">Azimuth:</span>
<span class="t" style="left:852.7px;top:273.19px;font-size:11px;letter-spacing:-0.202px;color:#b6b6b6;">Elevation:</span>
<div class="b" style="left:909px;top:247px;width:75px;height:19.5px;background:#1f1f1f;border-radius:2.5px;"></div>
<div class="b" style="left:909px;top:271px;width:75px;height:19.5px;background:#1f1f1f;border-radius:2.5px;"></div>
<span class="t" style="left:914.9px;top:249.19px;font-size:11px;letter-spacing:-0.174px;color:#dedede;">135 °</span>
<span class="t" style="left:914.9px;top:273.19px;font-size:11px;letter-spacing:-0.171px;color:#dedede;">45 °</span>
<div class="b" style="left:699px;top:316px;width:168px;height:28px;background:#343434;border-radius:2px;"></div>
<div class="b" style="left:699px;top:346px;width:168px;height:28px;background:#343434;border-radius:2px;"></div>
<span class="t" style="left:704.9px;top:322.19px;font-size:11px;letter-spacing:-0.396px;color:#dedede;">Screen</span>
<div class="b" style="left:740px;top:320.5px;width:87px;height:16.5px;background:#ffffff;border-radius:0px;"></div>
<span class="t" style="left:836.7px;top:322.19px;font-size:11px;letter-spacing:-0.299px;color:#dedede;">75 %</span>
<span class="t" style="left:704.9px;top:353.19px;font-size:11px;letter-spacing:0.288px;color:#dedede;">Multiply</span>
<div class="b" style="left:748px;top:352px;width:79px;height:16px;background:#000000;border-radius:0px;"></div>
<span class="t" style="left:836.7px;top:353.19px;font-size:11px;letter-spacing:-0.299px;color:#dedede;">75 %</span>
<div class="b" style="left:416px;top:522px;width:12px;height:12px;background:#1f1f1f;border-radius:2px;"></div>
<span class="t" style="left:432.9px;top:520.19px;font-size:11px;letter-spacing:-0.088px;color:#c6c6c6;">Scale with Object</span>
<span class="t" style="left:817.7px;top:520.19px;font-size:11px;letter-spacing:-0.121px;color:#b6b6b6;">Fill Opacity:</span>
<div class="b" style="left:878px;top:518px;width:60px;height:19.5px;background:#1f1f1f;border-radius:2.5px;"></div>
<span class="t" style="left:883.9px;top:520.19px;font-size:11px;letter-spacing:-0.337px;color:#dedede;">0 %</span>
<svg class="b" style="left:926px;top:524px" width="10" height="8" viewBox="0 0 10 8"><path d="M2.3 3.1 L5 5.6 L7.7 3.1" stroke="#e2e2e2" stroke-width="1.35" fill="none"/></svg>
<div class="b" style="left:946px;top:518px;width:75px;height:19.5px;background:#454545;border-radius:2.5px;"></div>
<span class="t" style="left:969.9px;top:520.19px;font-size:11px;letter-spacing:-0.357px;color:#dedede;"><u>C</u>lose</span>
</body></html>
